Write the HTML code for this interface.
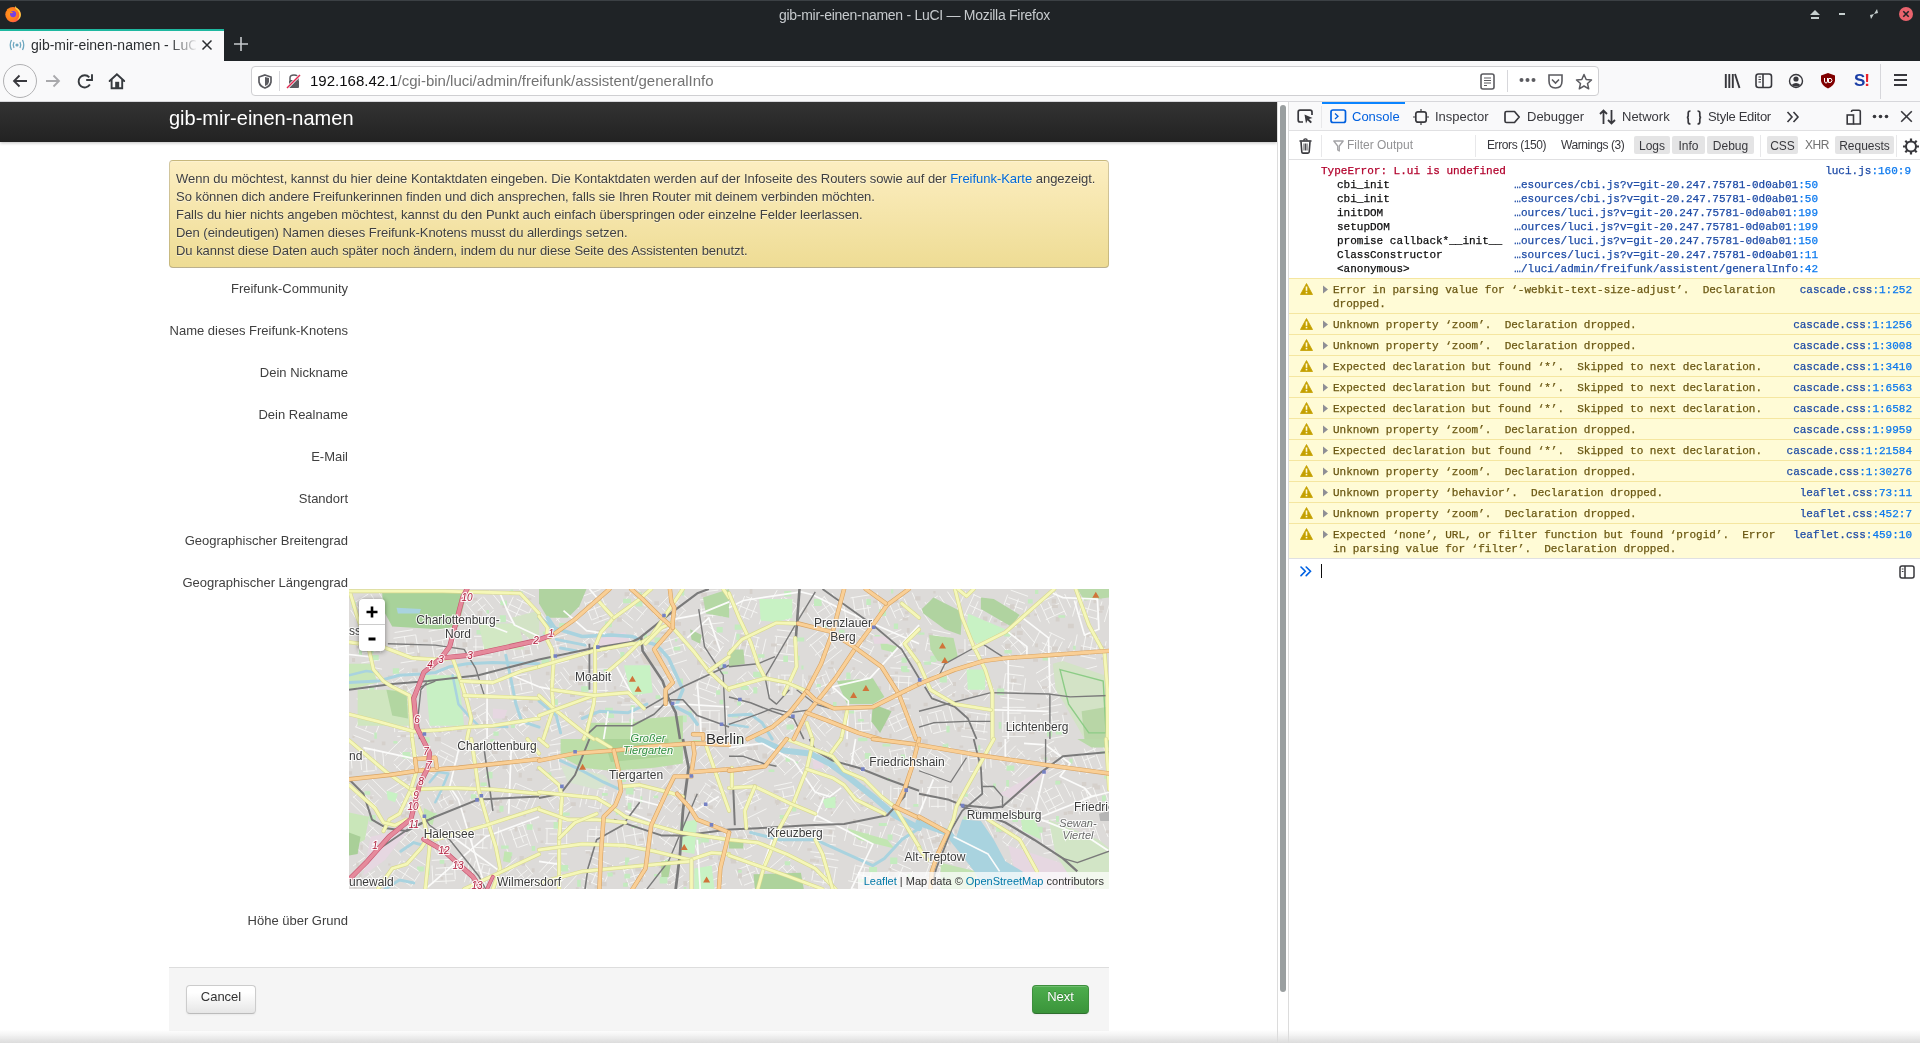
<!DOCTYPE html>
<html><head><meta charset="utf-8">
<style>
*{box-sizing:border-box;margin:0;padding:0}
html,body{width:1920px;height:1043px;overflow:hidden;background:#fff;font-family:"Liberation Sans",sans-serif;-webkit-font-smoothing:antialiased}
.abs{position:absolute}
#titlebar{left:0;top:0;width:1920px;height:29px;background:#1f2326}
#tabbar{left:0;top:29px;width:1920px;height:32px;background:#1f2326}
#navbar{left:0;top:61px;width:1920px;height:41px;background:#f9f9fa;border-bottom:1px solid #d7d7db}
#page{left:0;top:102px;width:1277px;height:941px;background:#fff;overflow:hidden}
#sb{left:1277px;top:102px;width:12px;height:941px;z-index:5;background:#fff;border-left:1px solid #dcdcdc;border-right:1px solid #dcdcdc}
#dev{left:1288px;top:102px;width:632px;height:941px;background:#fff}
.t{position:absolute;white-space:nowrap}
.mono{font-family:"Liberation Mono",monospace}
.lbl{position:absolute;left:169px;width:179px;text-align:right;font-size:13px;line-height:18px;color:#404040;white-space:nowrap}
.btn{font-size:13px;line-height:22px;text-align:center;color:#333;border:1px solid #ccc;border-bottom-color:#bbb;border-radius:4px;background:linear-gradient(#fff,#fff 25%,#e6e6e6);box-shadow:inset 0 1px 0 rgba(255,255,255,.2),0 1px 2px rgba(0,0,0,.05)}
.btn.ok{color:#fff;background:linear-gradient(#4eae4e,#3a943a);border-color:#3d8f3d #3d8f3d #2f6f2f;text-shadow:0 -1px 0 rgba(0,0,0,.25)}
.tb{position:absolute;top:7px;font-size:13px;line-height:16px;color:#38383d;white-space:nowrap}
.fb{position:absolute;top:36px;font-size:12px;line-height:14px;color:#38383d;white-space:nowrap;letter-spacing:-0.4px}
.fbb{position:absolute;top:34px;height:18px;font-size:12px;line-height:20px;color:#38383d;background:#e4e4e5;border-radius:2px;text-align:center;white-space:nowrap}
.mt{position:absolute;font-family:"Liberation Mono",monospace;font-size:11px;line-height:14px;white-space:nowrap;-webkit-text-stroke:0.25px currentColor}
.lk1{color:#1d4ba6}.lk2{color:#0a78ee}
.wrow{position:absolute;left:1px;width:631px;background:#fffbd6;border-top:1px solid #f5e6a0}
.wtxt{position:absolute;left:44px;top:4px;font-family:"Liberation Mono",monospace;font-size:11px;line-height:14px;color:#6a5712;white-space:nowrap;-webkit-text-stroke:0.25px currentColor}
.wlink{position:absolute;right:8px;top:4px;font-family:"Liberation Mono",monospace;font-size:11px;line-height:14px;white-space:nowrap;-webkit-text-stroke:0.25px currentColor}
</style></head><body><div style="position:absolute;left:0;top:0;width:1920px;height:1043px;will-change:transform">

<div id="titlebar" class="abs">
 <div class="abs" style="left:0;top:0;width:1920px;height:1px;background:#3b4044"></div>
 <svg class="abs" style="left:4px;top:5px" width="19" height="19" viewBox="0 0 19 19">
  <defs><radialGradient id="ffg" cx="0.35" cy="0.45" r="0.75"><stop offset="0" stop-color="#ff9a1f"/><stop offset="0.55" stop-color="#ff7b1f"/><stop offset="1" stop-color="#ff3d6e"/></radialGradient></defs>
  <circle cx="9" cy="9.6" r="7.7" fill="url(#ffg)"/>
  <path d="M11.3 0.7 Q10.5 3 12.4 4.6 Q15.6 7 15.3 11 Q15 13.5 13 15 Q17.2 13.8 16.8 9 Q16.4 5.5 13.6 3.6 Q12 2.5 11.3 0.7Z" fill="#ffd83b"/>
  <circle cx="9.1" cy="9.1" r="3.1" fill="#7542e5"/>
  <path d="M3.2 4.6 L4.2 3.2 L5 5 L6 4 L6.5 6 Q7.8 7 9.5 7.5 Q7.8 8.6 6.5 8 Q5 7.5 3.2 4.6Z" fill="#ff8c14"/>
 </svg>
 <div class="t" style="left:779px;top:7px;font-size:14px;color:#c6cacd;letter-spacing:-0.28px">gib-mir-einen-namen - LuCI — Mozilla Firefox</div>
 <svg class="abs" style="left:1808px;top:8px" width="14" height="14"><path d="M7 2 L12 7 L2 7 Z" fill="#c6cfcf"/><rect x="3" y="9" width="8" height="2" fill="#c6cfcf"/></svg>
 <div class="abs" style="left:1839px;top:13px;width:6px;height:2px;background:#c6cfcf"></div>
 <svg class="abs" style="left:1868px;top:8px" width="12" height="12"><path d="M9 1 L10 5 L6 6 Z M3 11 L2 7 L6 6 Z" fill="#c6cfcf"/></svg>
 <div class="abs" style="left:1899px;top:7px;width:14px;height:14px;border-radius:7px;background:#e9636d"></div>
 <svg class="abs" style="left:1899px;top:7px" width="14" height="14"><path d="M4.3 4.3 L9.7 9.7 M9.7 4.3 L4.3 9.7" stroke="#1f2326" stroke-width="1.6"/></svg>
</div>
<div id="tabbar" class="abs">
 <div class="abs" style="left:0;top:0;width:224px;height:32px;background:#f9f9fa;border-top:2px solid #1fb8a0"></div>
 <svg class="abs" style="left:9px;top:38px;top:9px" width="16" height="14" viewBox="0 0 16 14">
  <circle cx="8" cy="7" r="1.6" fill="#6fa8c0"/>
  <path d="M5 4 Q3.5 7 5 10 M11 4 Q12.5 7 11 10" stroke="#6fa8c0" stroke-width="1.3" fill="none"/>
  <path d="M2.5 2 Q0 7 2.5 12 M13.5 2 Q16 7 13.5 12" stroke="#6fa8c0" stroke-width="1.3" fill="none"/>
 </svg>
 <div class="t" style="left:31px;top:8px;font-size:14px;color:#2b2e31;width:165px;overflow:hidden">gib-mir-einen-namen - LuC</div>
 <div class="abs" style="left:170px;top:6px;width:28px;height:20px;background:linear-gradient(90deg,rgba(249,249,250,0),#f9f9fa)"></div>
 <svg class="abs" style="left:201px;top:10px" width="12" height="12"><path d="M1.5 1.5 L10.5 10.5 M10.5 1.5 L1.5 10.5" stroke="#2b2e31" stroke-width="1.5"/></svg>
 <svg class="abs" style="left:233px;top:7px" width="16" height="16"><path d="M8 1 V15 M1 8 H15" stroke="#c6cacd" stroke-width="1.6"/></svg>
</div>
<div id="navbar" class="abs">
 <div class="abs" style="left:3px;top:3px;width:34px;height:34px;border-radius:17px;border:1px solid #b1b1b3;background:#f9f9fa"></div>
 <svg class="abs" style="left:11px;top:12px" width="18" height="16"><path d="M16 8 H3 M8.5 2.5 L3 8 L8.5 13.5" stroke="#38383d" stroke-width="1.8" fill="none"/></svg>
 <svg class="abs" style="left:44px;top:12px" width="18" height="16"><path d="M2 8 H15 M9.5 2.5 L15 8 L9.5 13.5" stroke="#a9a9ac" stroke-width="1.8" fill="none"/></svg>
 <svg class="abs" style="left:76px;top:72px;top:11px" width="20" height="20"><path d="M13.3 5.3 A6.1 6.1 0 1 0 13.9 12.6" stroke="#363a3e" stroke-width="1.9" fill="none"/><path d="M10.2 8 H16 V2.2" stroke="#363a3e" stroke-width="1.9" fill="none"/></svg>
 <svg class="abs" style="left:108px;top:11px" width="20" height="20"><path d="M1.6 9 L8.9 2.2 L16.2 9" stroke="#363a3e" stroke-width="1.9" fill="none" stroke-linecap="round"/><path d="M3.6 7.5 V16.3 H14.2 V7.5" stroke="#363a3e" stroke-width="1.9" fill="none"/><rect x="7.2" y="9.8" width="4" height="6.5" fill="#363a3e"/></svg>
 <div class="abs" style="left:251px;top:5px;width:1348px;height:30px;background:#fff;border:1px solid #cfcfd2;border-radius:4px"></div>
 <svg class="abs" style="left:257px;top:13px" width="16" height="15"><path d="M8 1 L14 3 V8 Q13 12.5 8 14 Q3 12.5 2 8 V3 Z" stroke="#5b5b60" stroke-width="1.7" fill="none"/><path d="M8 3 V12 Q11.5 11 12 7.5 V4 Z" fill="#5b5b60"/></svg>
 <div class="abs" style="left:279px;top:10px;width:1px;height:20px;background:#d7d7db"></div>
 <svg class="abs" style="left:286px;top:12px" width="16" height="16"><path d="M4 7 V5 Q4 2 8 2 Q12 2 12 5 V7" stroke="#5b5b60" stroke-width="1.5" fill="none"/><rect x="3" y="7" width="10" height="8" rx="1" fill="#5b5b60"/><path d="M1 15 L14 2" stroke="#f9f9fa" stroke-width="3"/><path d="M1 15 L14 2" stroke="#e22850" stroke-width="1.4"/></svg>
 <div class="t" style="left:310px;top:11px;font-size:15px;color:#0c0c0d">192.168.42.1<span style="color:#737373">/cgi-bin/luci/admin/freifunk/assistent/generalInfo</span></div>
 <svg class="abs" style="left:1480px;top:12px" width="15" height="17"><rect x="1" y="1" width="13" height="15" rx="2" stroke="#5b5b60" stroke-width="1.6" fill="none"/><path d="M4 5 H11 M4 7.5 H11 M4 10 H11 M4 12.5 H7" stroke="#5b5b60" stroke-width="1"/></svg>
 <div class="abs" style="left:1507px;top:9px;width:1px;height:22px;background:#d7d7db"></div>
 <svg class="abs" style="left:1519px;top:16px" width="18" height="6"><circle cx="2.5" cy="3" r="2" fill="#5b5b60"/><circle cx="8.5" cy="3" r="2" fill="#5b5b60"/><circle cx="14.5" cy="3" r="2" fill="#5b5b60"/></svg>
 <svg class="abs" style="left:1547px;top:12px" width="18" height="17"><path d="M2 2 H15 V8 Q15 15 8.5 15 Q2 15 2 8 Z" stroke="#5b5b60" stroke-width="1.6" fill="none"/><path d="M5 6.5 L8.5 10 L12 6.5" stroke="#5b5b60" stroke-width="1.6" fill="none"/></svg>
 <svg class="abs" style="left:1575px;top:12px" width="18" height="18"><path d="M9 1.5 L11.2 6.5 L16.5 7 L12.5 10.5 L13.7 15.8 L9 13 L4.3 15.8 L5.5 10.5 L1.5 7 L6.8 6.5 Z" stroke="#5b5b60" stroke-width="1.5" fill="none" stroke-linejoin="round"/></svg>
 <svg class="abs" style="left:1724px;top:12px" width="17" height="16"><path d="M1.8 1 V15 M5.3 1 V15 M8.8 1 V15 M11 1 L15.5 15" stroke="#38383d" stroke-width="1.9"/></svg>
 <svg class="abs" style="left:1755px;top:12px" width="18" height="16"><rect x="1" y="1" width="15.5" height="13.5" rx="2.5" stroke="#38383d" stroke-width="1.6" fill="none"/><path d="M8 1 V14.5" stroke="#38383d" stroke-width="1.6"/><path d="M3.5 4 H6 M3.5 6.5 H6 M3.5 9 H6" stroke="#38383d" stroke-width="1"/></svg>
 <svg class="abs" style="left:1788px;top:12px" width="16" height="16"><circle cx="8" cy="8" r="6.5" stroke="#38383d" stroke-width="1.4" fill="none"/><circle cx="8" cy="6" r="2.6" fill="#38383d"/><path d="M3.5 12 Q8 8 12.5 12 Q8 15 3.5 12Z" fill="#38383d"/></svg>
 <svg class="abs" style="left:1820px;top:11px" width="16" height="17"><path d="M8 1 L15 3.5 V9 Q14 14 8 16.5 Q2 14 1 9 V3.5 Z" fill="#800000"/><path d="M4.5 6 V9 Q4.5 11 6 11 Q7.5 11 7.5 9 V6 M8.5 6.5 Q12 5.5 12 8.5 Q12 11 8.5 10.5 Z" stroke="#fff" stroke-width="1" fill="none"/></svg>
 <div class="t" style="left:1854px;top:10px;font-size:17px;font-weight:bold;color:#1b3ea6;letter-spacing:-1px">S<span style="color:#e8202a">!</span></div>
 <div class="abs" style="left:1880px;top:3px;width:1px;height:35px;background:#d7d7db"></div>
 <svg class="abs" style="left:1893px;top:12px" width="15" height="14"><path d="M1 2 H14 M1 7 H14 M1 12 H14" stroke="#38383d" stroke-width="1.8"/></svg>
</div>
<div id="page" class="abs">
 <div class="abs" style="left:0;top:0;width:1277px;height:40px;background:linear-gradient(#333,#222);box-shadow:0 1px 3px rgba(0,0,0,.25)"></div>
 <div class="t" style="left:169px;top:6px;font-size:20px;line-height:20px;color:#fff">gib-mir-einen-namen</div>
 <div class="abs" style="left:169px;top:58px;width:940px;height:108px;border:1px solid rgba(0,0,0,.16);border-bottom-color:rgba(0,0,0,.26);border-radius:4px;background:linear-gradient(#fceec1,#eedc94);box-shadow:inset 0 1px 0 rgba(255,255,255,.25)"></div>
 <div class="abs" style="left:176px;top:68px;letter-spacing:-0.03px;font-size:13px;line-height:18px;color:#404040;text-shadow:0 1px 0 rgba(255,255,255,.5);white-space:nowrap">
  Wenn du möchtest, kannst du hier deine Kontaktdaten eingeben. Die Kontaktdaten werden auf der Infoseite des Routers sowie auf der <span style="color:#0069d6">Freifunk-Karte</span> angezeigt.<br>
  So können dich andere Freifunkerinnen finden und dich ansprechen, falls sie Ihren Router mit deinem verbinden möchten.<br>
  Falls du hier nichts angeben möchtest, kannst du den Punkt auch einfach überspringen oder einzelne Felder leerlassen.<br>
  Den (eindeutigen) Namen dieses Freifunk-Knotens musst du allerdings setzen.<br>
  Du kannst diese Daten auch später noch ändern, indem du nur diese Seite des Assistenten benutzt.
 </div>
 <div class="lbl" style="top:177.5px">Freifunk-Community</div>
 <div class="lbl" style="top:219.5px">Name dieses Freifunk-Knotens</div>
 <div class="lbl" style="top:261.5px">Dein Nickname</div>
 <div class="lbl" style="top:303.5px">Dein Realname</div>
 <div class="lbl" style="top:345.5px">E-Mail</div>
 <div class="lbl" style="top:387.5px">Standort</div>
 <div class="lbl" style="top:429.5px">Geographischer Breitengrad</div>
 <div class="lbl" style="top:471.5px">Geographischer Längengrad</div>
 <div id="map" class="abs" style="left:349px;top:487px;width:760px;height:300px;background:#e0dfdf;overflow:hidden"><svg class="abs" style="left:0;top:0" width="760" height="300" viewBox="0 0 760 300" font-family="Liberation Sans, sans-serif"><rect width="760" height="300" fill="#dddbd9"/>
<path d="M28.1 0.6 l11.5 18.6 M21.9 5.2 l10.7 17.4 M15.6 12.5 l7.7 12.5 M8.4 17.1 l7.6 12.3 M1.7 21.0 l7.8 12.6 M19.3 5.1 l-12.8 7.9 M24.6 17.1 l-9.8 6.0 M31.1 22.0 l-14.9 9.2 M30.8 70.9 l-18.5 3.1 M27.2 61.8 l-14.4 2.4 M27.4 54.2 l-17.2 2.9 M25.5 49.3 l-15.2 2.5 M28.2 40.0 l-23.5 3.9 M31.5 63.5 l-2.8 -16.8 M19.6 64.2 l-2.4 -14.3 M9.8 64.0 l-1.8 -10.6 M11.3 76.1 l21.8 4.1 M11.8 85.2 l17.5 3.3 M9.4 93.5 l19.1 3.6 M6.1 99.9 l23.1 4.4 M7.6 109.9 l16.6 3.2 M11.0 85.2 l-3.0 16.0 M22.2 86.1 l-3.5 18.4 M30.0 86.0 l-4.1 21.4 M14.2 113.6 l21.5 8.4 M13.1 120.6 l18.5 7.2 M9.4 127.3 l20.5 8.0 M6.0 137.7 l19.5 7.6 M4.4 146.1 l16.6 6.4 M13.5 121.7 l-6.2 16.0 M22.1 125.9 l-5.6 14.4 M33.5 127.2 l-7.7 19.9 M33.7 162.4 l1.2 14.7 M25.3 159.6 l1.8 21.7 M16.1 159.3 l1.9 23.8 M11.1 162.3 l1.5 18.6 M1.8 165.2 l1.2 14.2 M24.2 160.4 l-12.0 1.0 M24.2 169.0 l-10.7 0.9 M25.7 181.6 l-11.5 0.9 M21.8 188.7 l17.4 17.2 M18.9 195.3 l13.8 13.6 M10.1 200.5 l17.5 17.3 M3.8 207.1 l17.4 17.1 M1.6 213.1 l13.5 13.3 M18.7 194.2 l-14.5 14.7 M24.4 206.1 l-8.3 8.4 M29.7 210.6 l-9.0 9.1 M21.9 228.0 l15.7 14.1 M19.8 235.6 l10.4 9.4 M12.4 240.6 l13.7 12.3 M4.0 244.6 l18.9 17.0 M0.3 252.7 l15.0 13.5 M18.0 233.9 l-12.1 13.5 M24.6 238.1 l-13.9 15.5 M34.1 246.8 l-13.7 15.2 M36.3 292.7 l-15.1 11.1 M33.4 286.3 l-17.4 12.8 M26.0 282.0 l-11.9 8.8 M21.4 274.8 l-12.8 9.5 M15.8 268.3 l-11.8 8.7 M32.2 282.6 l-7.0 -9.5 M24.5 289.8 l-8.5 -11.6 M18.6 298.1 l-12.2 -16.5 M76.3 17.1 l-6.0 15.9 M68.3 13.4 l-6.4 17.2 M62.7 8.2 l-8.5 22.7 M51.1 6.3 l-6.9 18.3 M44.7 6.4 l-5.3 14.1 M67.7 10.6 l-13.2 -4.9 M66.7 21.6 l-18.7 -7.0 M58.8 28.9 l-9.6 -3.6 M67.2 71.5 l-15.6 2.4 M65.3 63.6 l-14.2 2.2 M69.7 54.9 l-25.4 3.9 M66.6 45.9 l-22.1 3.4 M63.8 40.7 l-18.2 2.8 M69.7 64.8 l-3.0 -19.0 M58.4 66.6 l-3.0 -19.1 M48.8 64.7 l-1.9 -12.5 M74.9 99.9 l-20.1 13.5 M70.7 94.0 l-19.8 13.3 M63.4 89.5 l-13.9 9.3 M60.1 83.2 l-15.2 10.2 M55.1 79.3 l-11.9 8.0 M69.7 94.4 l-7.3 -10.9 M62.4 104.3 l-12.0 -17.8 M54.8 109.3 l-11.9 -17.6 M66.7 146.8 l-18.4 0.7 M65.7 141.8 l-16.7 0.6 M65.3 133.9 l-16.4 0.6 M69.1 124.0 l-24.8 0.9 M66.2 115.3 l-19.7 0.7 M66.7 142.4 l-0.7 -19.6 M59.0 141.9 l-0.7 -17.9 M45.7 143.1 l-0.7 -19.4 M74.1 176.7 l-11.4 11.4 M68.2 169.5 l-12.7 12.7 M65.2 161.1 l-18.2 18.1 M58.3 159.0 l-13.3 13.3 M52.5 150.4 l-16.1 16.0 M69.1 167.1 l-8.1 -8.2 M65.4 177.4 l-14.7 -14.8 M53.2 183.1 l-8.3 -8.3 M73.7 215.4 l-18.7 11.3 M70.3 211.0 l-17.6 10.7 M63.8 206.6 l-12.1 7.3 M61.2 194.9 l-18.6 11.3 M59.4 188.7 l-21.6 13.1 M71.1 212.4 l-10.6 -17.5 M59.1 215.0 l-6.5 -10.7 M52.8 219.4 l-7.0 -11.6 M61.5 229.7 l12.5 11.7 M57.0 235.6 l11.3 10.7 M49.2 241.9 l13.3 12.5 M44.0 245.5 l15.3 14.4 M38.0 253.3 l13.9 13.1 M56.4 235.5 l-11.0 11.7 M62.7 241.2 l-11.2 11.9 M68.1 247.0 l-10.5 11.1 M56.9 263.5 l19.8 12.8 M53.8 271.8 l16.5 10.7 M47.8 280.1 l17.3 11.2 M44.5 285.6 l17.0 11.0 M38.4 292.2 l19.6 12.7 M51.8 271.7 l-9.1 14.0 M59.8 278.9 l-7.2 11.2 M70.7 284.3 l-8.8 13.5 M112.1 9.6 l-4.8 24.5 M105.1 10.1 l-4.1 21.0 M96.9 9.1 l-3.9 19.8 M88.3 7.8 l-3.7 19.1 M81.1 6.2 l-3.8 19.4 M105.6 12.7 l-18.0 -3.5 M105.2 22.5 l-20.9 -4.1 M101.5 29.5 l-16.4 -3.2 M105.3 70.0 l-15.4 2.8 M106.2 64.7 l-19.0 3.4 M103.6 57.2 l-16.6 3.0 M104.7 48.9 l-21.7 3.9 M104.1 37.9 l-24.4 4.4 M107.9 64.1 l-3.3 -18.3 M95.4 62.9 l-2.1 -11.5 M85.6 69.7 l-3.8 -21.3 M96.8 78.1 l14.5 12.0 M90.1 80.6 l20.0 16.5 M88.0 91.0 l12.3 10.1 M82.3 94.5 l15.6 12.8 M78.9 101.6 l12.6 10.4 M92.7 81.0 l-11.9 14.4 M98.8 87.4 l-10.6 12.8 M105.8 97.3 l-6.5 7.9 M103.3 116.5 l10.2 17.4 M96.9 116.9 l13.0 22.3 M87.5 122.5 l13.0 22.1 M85.1 128.8 l8.7 14.8 M76.9 130.1 l11.8 20.2 M94.5 120.7 l-10.0 5.8 M103.9 127.4 l-18.1 10.6 M106.3 139.4 l-11.3 6.6 M92.2 153.5 l18.6 9.4 M91.5 161.2 l13.4 6.8 M85.9 164.4 l19.9 10.1 M84.9 174.5 l13.3 6.7 M77.3 181.9 l19.3 9.8 M89.6 162.1 l-5.0 9.8 M98.7 166.8 l-4.9 9.6 M108.7 169.3 l-7.0 13.8 M102.7 190.4 l12.2 22.0 M99.0 197.9 l7.5 13.6 M90.8 201.7 l8.2 14.8 M85.5 205.1 l7.7 13.9 M78.6 208.7 l7.9 14.4 M95.8 196.3 l-12.0 6.6 M101.4 206.6 l-11.8 6.5 M105.2 214.8 l-10.6 5.9 M107.0 231.2 l7.9 15.1 M98.5 232.3 l10.5 20.2 M91.1 239.9 l7.5 14.4 M82.2 239.5 l11.7 22.4 M76.7 243.1 l11.0 21.1 M97.3 234.2 l-14.1 7.4 M102.1 244.8 l-13.0 6.8 M107.7 251.7 l-16.2 8.4 M107.9 300.9 l-24.0 1.3 M106.2 291.6 l-21.6 1.2 M104.1 284.9 l-18.1 1.0 M102.4 278.4 l-15.5 0.9 M105.6 270.1 l-22.9 1.3 M106.3 290.4 l-0.7 -11.9 M97.2 294.9 l-1.1 -20.1 M84.0 294.6 l-1.0 -18.0 M140.6 1.4 l11.1 13.6 M134.3 7.7 l10.1 12.3 M127.7 12.2 l10.9 13.3 M117.3 15.3 l16.2 19.9 M115.1 22.7 l10.7 13.1 M133.2 8.4 l-10.6 8.7 M136.5 15.4 l-7.8 6.3 M145.1 21.4 l-12.2 9.9 M150.3 47.1 l-0.2 20.1 M143.1 48.5 l-0.1 17.2 M134.7 47.6 l-0.2 18.8 M126.9 49.8 l-0.1 14.3 M117.9 48.5 l-0.1 16.8 M141.3 47.4 l-16.3 -0.1 M141.9 58.1 l-17.9 -0.2 M143.2 68.0 l-20.5 -0.2 M144.3 77.2 l8.8 24.3 M138.0 81.1 l7.7 21.3 M130.0 88.4 l4.9 13.7 M120.0 86.6 l8.4 23.2 M113.6 89.9 l7.8 21.4 M135.5 84.8 l-11.0 4.0 M140.6 92.4 l-15.1 5.5 M146.1 102.3 l-18.5 6.7 M151.7 140.0 l-21.1 12.8 M146.3 133.4 l-19.1 11.6 M139.7 130.2 l-12.3 7.5 M137.4 122.7 l-15.7 9.5 M135.8 114.4 l-20.5 12.5 M145.9 135.4 l-9.1 -15.0 M137.3 141.0 l-9.4 -15.5 M127.1 142.5 l-5.2 -8.6 M150.0 177.1 l-16.1 11.9 M146.5 170.8 l-17.6 13.0 M143.2 165.6 l-18.4 13.6 M134.8 160.9 l-12.0 8.8 M133.2 152.1 l-18.3 13.5 M147.6 172.0 l-11.2 -15.2 M136.2 178.5 l-9.5 -12.8 M130.0 183.0 l-9.3 -12.7 M151.4 208.2 l-11.7 17.9 M143.3 206.8 l-8.1 12.5 M138.8 202.6 l-9.3 14.3 M130.3 196.7 l-9.6 14.8 M123.2 194.2 l-7.7 11.9 M145.0 202.8 l-11.1 -7.2 M140.3 214.6 l-15.3 -10.0 M132.8 221.6 l-11.3 -7.4 M149.6 238.1 l-1.0 19.6 M143.2 235.1 l-1.3 24.7 M134.9 234.2 l-1.3 25.7 M123.6 239.4 l-0.7 14.2 M117.8 234.3 l-1.2 23.8 M141.1 239.3 l-15.4 -0.8 M139.3 246.4 l-12.5 -0.7 M138.6 259.1 l-12.5 -0.7 M152.4 279.6 l-5.1 19.6 M141.0 279.0 l-3.9 15.1 M134.3 275.0 l-5.1 19.4 M126.6 271.7 l-5.7 21.7 M121.7 269.2 l-6.3 24.0 M140.5 276.6 l-10.0 -2.6 M141.2 285.1 l-15.4 -4.0 M137.1 296.2 l-13.2 -3.4 M170.1 0.2 l16.1 7.6 M167.5 10.0 l12.7 6.0 M159.7 14.8 l21.8 10.3 M156.9 19.5 l22.7 10.7 M152.6 28.9 l22.4 10.6 M164.3 7.8 l-6.2 13.1 M175.3 8.9 l-9.4 19.9 M183.4 17.0 l-6.1 13.0 M185.8 46.1 l3.3 14.2 M177.7 43.1 l5.4 23.4 M169.0 44.5 l5.7 24.6 M162.3 50.2 l3.9 16.8 M153.5 52.7 l3.6 15.9 M179.1 44.4 l-20.9 4.8 M181.0 56.3 l-19.2 4.4 M183.6 64.9 l-20.4 4.7 M185.0 108.4 l-22.2 4.2 M184.0 102.5 l-22.4 4.2 M182.4 93.1 l-22.6 4.3 M178.0 85.0 l-17.1 3.2 M180.7 78.7 l-24.7 4.7 M183.7 100.6 l-2.9 -15.4 M172.9 101.6 l-2.5 -13.3 M162.2 107.7 l-4.0 -21.3 M176.2 116.1 l12.0 12.8 M170.3 120.9 l12.8 13.7 M166.5 126.3 l10.9 11.6 M157.5 128.6 l17.0 18.1 M153.6 137.9 l11.4 12.1 M173.3 119.4 l-16.0 15.0 M175.1 128.9 l-8.5 8.0 M181.0 135.6 l-8.1 7.6 M182.5 155.2 l8.0 14.8 M173.9 157.6 l9.9 18.3 M164.2 161.6 l11.0 20.2 M159.8 166.3 l9.0 16.7 M152.4 170.5 l8.8 16.3 M170.7 159.1 l-9.4 5.1 M180.1 165.1 l-19.0 10.3 M182.1 174.7 l-14.1 7.6 M187.6 207.1 l-6.6 15.2 M182.5 204.7 l-6.7 15.6 M175.2 200.3 l-7.7 17.8 M166.8 194.0 l-9.6 22.2 M157.8 195.5 l-5.6 13.1 M184.2 201.8 l-17.0 -7.3 M177.6 213.6 l-14.4 -6.2 M171.5 220.5 l-9.2 -4.0 M180.5 231.0 l8.0 22.5 M172.9 232.7 l8.6 24.2 M169.4 239.4 l5.1 14.4 M161.4 239.7 l6.8 19.1 M151.0 240.7 l8.5 23.8 M176.3 235.4 l-16.7 5.9 M178.7 245.4 l-14.6 5.2 M179.3 254.9 l-9.9 3.5 M191.5 290.3 l-19.4 15.8 M182.5 285.2 l-13.7 11.1 M178.5 280.8 l-13.2 10.8 M174.3 271.3 l-17.3 14.1 M167.6 269.1 l-11.5 9.4 M184.0 285.3 l-10.7 -13.2 M175.4 289.6 l-8.0 -9.8 M166.1 295.5 l-6.4 -7.8 M214.7 -0.8 l14.9 20.7 M207.8 4.7 l14.4 20.0 M204.2 12.1 l9.8 13.7 M195.9 12.7 l14.9 20.7 M190.2 21.6 l10.3 14.4 M208.5 4.7 l-13.0 9.3 M215.5 15.2 l-12.2 8.8 M221.6 21.1 l-14.6 10.5 M220.0 71.9 l-14.0 3.4 M220.3 63.2 l-18.5 4.4 M216.8 54.4 l-15.9 3.8 M218.0 45.4 l-22.2 5.3 M213.3 39.5 l-16.0 3.8 M218.5 61.8 l-3.2 -13.4 M209.2 63.5 l-3.0 -12.4 M202.6 68.4 l-4.5 -18.6 M214.4 78.5 l12.0 16.0 M211.4 82.8 l10.0 13.3 M202.7 86.0 l13.2 17.6 M196.4 94.6 l9.5 12.6 M191.6 97.7 l9.9 13.2 M208.8 85.0 l-9.4 7.0 M212.2 90.3 l-8.6 6.4 M223.1 96.4 l-16.6 12.5 M226.5 142.4 l-24.3 9.3 M219.6 135.6 l-16.8 6.4 M221.2 129.7 l-23.6 9.0 M212.5 122.0 l-13.4 5.1 M211.7 114.1 l-17.3 6.6 M221.3 135.8 l-5.0 -13.1 M212.0 137.2 l-3.6 -9.4 M203.0 142.9 l-5.1 -13.3 M224.1 186.6 l-25.3 3.6 M219.3 178.8 l-18.1 2.5 M220.6 168.1 l-23.6 3.3 M215.1 162.3 l-14.4 2.0 M215.9 154.0 l-18.3 2.6 M218.1 175.9 l-1.7 -12.2 M211.0 181.2 l-2.9 -20.6 M202.0 179.5 l-2.1 -14.8 M223.3 217.4 l-12.0 8.1 M220.6 213.1 l-12.2 8.2 M215.2 202.8 l-14.2 9.5 M214.3 194.6 l-20.6 13.8 M207.6 191.4 l-14.3 9.6 M220.6 211.7 l-9.7 -14.5 M215.0 216.2 l-10.4 -15.4 M205.0 219.7 l-7.4 -11.0 M196.7 231.9 l25.0 0.3 M196.4 239.4 l25.3 0.3 M200.6 245.0 l16.8 0.2 M196.2 254.7 l25.5 0.3 M199.5 264.7 l18.6 0.2 M198.1 239.3 l-0.2 15.2 M209.1 236.4 l-0.3 21.1 M217.8 237.3 l-0.2 19.6 M227.7 286.5 l-15.9 17.0 M220.7 283.6 l-12.2 13.1 M215.8 278.8 l-12.5 13.4 M207.4 273.3 l-10.2 10.9 M206.0 266.5 l-15.7 16.9 M220.4 280.6 l-7.9 -7.3 M216.4 289.3 l-12.2 -11.3 M210.6 299.2 l-15.9 -14.8 M260.0 29.0 l-16.0 6.1 M257.5 25.3 l-14.2 5.4 M257.5 15.0 l-21.0 8.1 M252.1 8.7 l-15.7 6.0 M251.4 0.5 l-20.0 7.7 M259.1 24.5 l-6.8 -17.7 M248.9 27.9 l-6.4 -16.8 M242.7 31.4 l-7.2 -18.8 M254.0 40.1 l11.1 14.7 M247.7 46.2 l9.9 13.1 M242.7 49.6 l10.2 13.5 M234.3 51.2 l14.9 19.6 M228.6 59.7 l10.8 14.3 M249.4 42.1 l-17.5 13.2 M252.1 53.2 l-10.2 7.7 M260.9 60.6 l-14.2 10.8 M257.3 112.3 l-19.7 0.6 M259.2 101.4 l-24.1 0.7 M254.2 93.1 l-14.5 0.4 M254.5 87.6 l-15.4 0.4 M259.4 79.9 l-25.7 0.7 M257.0 105.3 l-0.6 -21.2 M247.8 105.2 l-0.6 -20.4 M237.4 101.8 l-0.4 -13.1 M262.0 139.0 l-11.7 9.8 M260.1 131.9 l-16.4 13.8 M254.8 127.9 l-14.1 11.8 M249.1 122.7 l-12.6 10.6 M245.5 114.7 l-16.2 13.6 M258.2 131.7 l-8.0 -9.5 M253.0 137.1 l-9.0 -10.7 M242.7 144.6 l-7.9 -9.4 M254.7 151.7 l13.1 19.6 M249.4 160.5 l8.2 12.3 M243.1 162.3 l10.4 15.6 M234.2 166.6 l12.1 18.0 M230.6 172.4 l8.9 13.3 M248.1 159.2 l-12.4 8.3 M252.2 166.5 l-11.4 7.6 M259.3 177.0 l-11.4 7.6 M265.2 203.1 l-3.9 18.6 M256.1 197.7 l-5.4 25.4 M249.2 201.1 l-3.4 16.0 M240.0 199.1 l-3.4 16.1 M235.9 194.0 l-5.1 24.3 M258.8 201.0 l-19.4 -4.1 M257.2 210.8 l-20.1 -4.3 M250.8 219.9 l-11.7 -2.5 M236.9 230.7 l21.7 1.0 M239.8 240.3 l15.1 0.7 M237.8 247.1 l18.4 0.9 M238.8 254.6 l15.7 0.7 M236.2 261.6 l20.2 0.9 M239.0 241.0 l-0.5 11.3 M247.4 237.2 l-0.9 19.6 M259.1 241.4 l-0.6 12.4 M240.7 266.9 l23.7 10.0 M243.4 274.7 l13.5 5.7 M237.7 283.0 l17.2 7.2 M233.4 289.7 l19.8 8.3 M233.0 297.9 l14.7 6.2 M241.3 275.7 l-4.9 11.7 M250.6 275.6 l-7.8 18.6 M259.8 283.8 l-4.7 11.2 M287.6 -0.1 l15.7 12.8 M284.4 7.5 l12.0 9.8 M276.9 11.0 l17.6 14.4 M273.3 21.8 l11.2 9.2 M265.8 24.3 l17.9 14.6 M282.2 3.7 l-12.7 15.5 M289.3 11.4 l-10.9 13.3 M298.4 18.7 l-11.1 13.6 M292.4 39.1 l12.0 17.2 M285.5 43.3 l12.5 18.0 M279.7 49.0 l11.0 15.8 M273.9 51.7 l12.3 17.6 M267.1 59.2 l9.6 13.8 M287.8 44.1 l-15.9 11.1 M289.9 53.4 l-10.0 7.0 M295.3 61.9 l-9.3 6.5 M284.4 77.1 l13.9 5.9 M279.0 83.5 l18.5 7.9 M275.8 89.1 l19.9 8.5 M272.0 96.3 l21.0 9.0 M269.0 106.8 l18.5 7.9 M277.3 83.0 l-6.3 14.8 M288.8 85.0 l-8.4 19.7 M296.8 89.0 l-8.0 18.7 M297.1 147.9 l-23.8 0.3 M298.0 142.1 l-25.8 0.3 M297.7 132.9 l-25.5 0.3 M292.9 123.2 l-16.0 0.2 M297.4 115.7 l-25.2 0.3 M296.8 140.0 l-0.2 -14.2 M284.0 139.0 l-0.1 -11.9 M273.5 139.8 l-0.2 -13.3 M302.9 180.1 l-16.8 11.0 M295.4 171.8 l-13.8 9.0 M293.9 166.3 l-16.8 11.0 M287.1 161.0 l-12.1 7.9 M283.6 154.3 l-13.3 8.7 M296.9 174.1 l-9.9 -15.2 M287.0 176.9 l-6.6 -10.1 M278.8 181.9 l-6.2 -9.5 M301.3 201.4 l-1.8 18.2 M292.5 199.3 l-2.0 20.6 M285.9 196.7 l-2.4 24.5 M279.9 195.5 l-2.5 25.8 M269.5 198.1 l-1.8 18.6 M292.4 200.9 l-13.1 -1.3 M293.2 211.8 l-16.8 -1.6 M293.6 219.3 l-19.1 -1.8 M299.9 232.6 l4.1 22.5 M292.5 233.5 l4.3 23.4 M284.0 236.2 l3.9 21.3 M273.3 238.4 l3.8 20.7 M267.0 241.3 l3.2 17.5 M288.0 234.3 l-10.2 1.9 M293.3 244.1 l-17.1 3.1 M294.7 255.1 l-15.9 2.9 M298.5 298.8 l-15.8 5.4 M294.1 289.7 l-13.5 4.6 M294.3 283.9 l-17.3 5.9 M291.6 276.0 l-17.3 5.9 M290.1 267.5 l-19.9 6.8 M296.1 287.8 l-4.0 -11.8 M287.1 292.6 l-5.1 -14.9 M280.3 297.8 l-6.8 -20.1 M329.6 1.2 l10.9 10.5 M319.3 5.2 l17.6 16.9 M315.4 13.3 l13.6 13.0 M313.0 19.2 l10.2 9.8 M304.0 23.8 l15.0 14.4 M321.5 5.3 l-12.3 12.8 M330.2 11.2 l-14.7 15.3 M335.4 21.9 l-9.0 9.4 M338.0 71.0 l-19.4 6.1 M333.5 62.5 l-16.1 5.0 M334.7 55.2 l-22.3 7.0 M331.0 48.1 l-19.7 6.2 M325.2 37.7 l-15.0 4.7 M336.3 61.9 l-5.2 -16.5 M325.6 65.5 l-5.3 -16.9 M314.1 66.1 l-3.6 -11.5 M332.8 79.5 l8.2 12.0 M321.7 81.7 l13.2 19.3 M318.3 89.7 l7.9 11.6 M308.8 90.8 l12.9 19.0 M303.4 94.5 l12.9 18.9 M322.5 83.0 l-10.5 7.2 M327.4 90.1 l-10.6 7.2 M333.4 97.8 l-11.6 7.9 M342.3 135.2 l-17.1 17.1 M334.1 132.0 l-12.1 12.2 M329.6 126.0 l-13.6 13.6 M323.7 119.4 l-14.3 14.4 M320.0 114.7 l-15.3 15.4 M333.2 131.7 l-8.9 -8.9 M325.5 137.7 l-7.2 -7.2 M321.2 143.9 l-9.1 -9.1 M341.2 172.6 l-15.9 16.5 M337.8 168.2 l-17.0 17.7 M329.3 165.4 l-11.7 12.2 M323.5 156.6 l-15.0 15.5 M318.5 151.5 l-15.2 15.8 M334.2 170.6 l-11.3 -10.8 M328.7 178.3 l-13.2 -12.7 M320.6 184.5 l-11.0 -10.6 M340.7 212.5 l-11.5 13.5 M336.9 206.8 l-13.9 16.3 M332.4 200.6 l-16.2 19.0 M322.6 199.3 l-9.3 10.9 M320.2 190.1 l-16.3 19.1 M334.3 204.7 l-8.9 -7.6 M328.2 211.0 l-8.0 -6.8 M322.7 222.9 l-13.4 -11.4 M339.6 249.7 l-8.6 12.0 M334.5 244.0 l-10.7 15.0 M328.9 236.6 l-13.8 19.4 M319.5 235.4 l-8.6 12.0 M316.0 226.7 l-14.5 20.3 M332.4 243.6 l-9.2 -6.5 M328.3 249.3 l-9.2 -6.6 M326.5 259.5 l-16.4 -11.7 M341.5 291.2 l-19.9 13.3 M334.4 286.4 l-14.5 9.7 M330.2 282.1 l-12.6 8.4 M324.8 272.9 l-13.7 9.2 M322.4 267.0 l-15.9 10.6 M336.5 283.8 l-7.3 -10.9 M328.9 292.2 l-10.4 -15.4 M319.0 296.0 l-7.7 -11.5 M374.8 33.5 l-24.1 2.7 M369.0 25.7 l-14.3 1.6 M370.6 18.3 l-19.1 2.2 M369.0 8.9 l-18.0 2.0 M369.3 1.1 l-20.3 2.3 M373.2 27.9 l-2.3 -20.2 M363.7 28.7 l-2.2 -19.7 M352.9 25.0 l-1.1 -10.0 M359.5 37.3 l20.7 15.3 M358.9 43.1 l16.0 11.8 M351.5 50.0 l19.0 14.0 M349.0 56.5 l16.1 11.8 M342.2 62.3 l19.3 14.2 M358.5 41.9 l-12.6 17.2 M364.0 51.4 l-7.5 10.1 M374.4 57.0 l-9.5 12.9 M359.2 77.9 l14.1 5.1 M352.8 84.8 l21.0 7.6 M350.5 92.4 l20.3 7.3 M349.6 98.8 l17.7 6.4 M344.1 105.5 l23.2 8.4 M353.5 81.3 l-7.0 19.4 M361.3 88.5 l-4.2 11.7 M373.0 88.3 l-7.0 19.6 M377.5 120.8 l-0.1 24.6 M370.1 123.3 l-0.1 19.5 M360.9 121.5 l-0.1 23.1 M352.0 122.1 l-0.1 21.8 M345.6 124.0 l-0.1 17.9 M371.1 121.7 l-20.1 -0.1 M370.4 133.7 l-18.9 -0.1 M368.6 141.7 l-15.3 -0.1 M377.1 177.8 l-11.7 10.1 M375.6 169.1 l-18.6 16.1 M367.9 166.5 l-12.3 10.6 M364.8 158.2 l-17.0 14.7 M355.7 152.7 l-12.0 10.4 M373.9 168.5 l-8.5 -9.8 M366.8 176.7 l-10.6 -12.3 M359.0 181.9 l-9.1 -10.6 M359.5 190.9 l18.8 12.7 M355.8 193.9 l21.2 14.3 M354.2 202.5 l15.4 10.4 M345.7 210.6 l19.5 13.2 M343.6 217.6 l15.9 10.8 M356.7 195.4 l-9.9 14.6 M363.2 203.0 l-7.0 10.3 M371.8 210.0 l-5.8 8.6 M371.6 231.8 l7.0 21.2 M365.2 234.2 l6.7 20.5 M358.7 239.5 l4.9 14.9 M350.1 240.7 l5.9 17.9 M341.0 240.5 l7.8 23.7 M365.8 234.6 l-16.0 5.3 M368.5 245.6 l-14.3 4.7 M372.6 252.6 l-17.7 5.8 M376.9 294.7 l-20.8 8.2 M373.7 287.1 l-20.6 8.2 M369.8 280.9 l-18.1 7.2 M368.3 274.3 l-20.0 7.9 M364.6 268.1 l-17.7 7.0 M372.7 290.4 l-6.8 -17.3 M362.9 291.2 l-4.8 -12.1 M354.8 295.8 l-5.7 -14.4 M418.3 14.8 l-8.2 20.5 M407.8 13.8 l-6.0 15.0 M402.8 7.9 l-8.7 21.7 M395.7 7.0 l-7.4 18.4 M385.1 5.6 l-5.4 13.4 M408.2 12.1 l-11.1 -4.4 M408.5 24.0 l-19.8 -7.9 M400.4 30.4 l-10.4 -4.2 M417.0 49.7 l-5.2 22.0 M409.2 48.3 l-5.0 21.1 M400.1 46.8 l-4.7 19.7 M394.5 42.9 l-5.9 24.7 M387.1 42.8 l-5.2 21.6 M410.7 49.1 l-18.6 -4.4 M410.0 58.1 l-21.2 -5.1 M402.0 67.4 l-10.4 -2.5 M406.8 78.9 l9.2 10.7 M399.1 82.4 l12.4 14.5 M392.5 88.6 l11.9 13.8 M388.2 93.3 l10.9 12.7 M377.9 96.4 l16.5 19.2 M397.4 83.4 l-9.6 8.2 M405.4 91.1 l-11.2 9.6 M409.1 98.0 l-8.8 7.5 M416.8 137.3 l-16.5 14.0 M412.2 132.5 l-15.8 13.4 M409.5 125.6 l-19.5 16.5 M402.5 120.3 l-16.5 14.0 M396.9 112.1 l-18.2 15.4 M411.1 131.6 l-8.7 -10.3 M402.6 137.5 l-7.4 -8.8 M394.9 145.8 l-9.2 -10.9 M414.9 181.9 l-16.5 8.4 M411.6 174.7 l-17.0 8.6 M405.8 168.9 l-12.5 6.3 M402.7 159.1 l-15.5 7.9 M400.1 153.7 l-15.7 8.0 M411.4 173.2 l-6.8 -13.5 M402.6 179.2 l-8.1 -16.0 M395.4 184.7 l-9.6 -18.9 M417.6 219.7 l-21.5 10.6 M412.3 209.6 l-21.0 10.3 M410.4 205.0 l-21.5 10.6 M401.6 198.2 l-12.7 6.3 M404.2 190.8 l-22.8 11.2 M410.3 210.7 l-5.7 -11.7 M403.0 213.6 l-5.2 -10.5 M395.2 221.6 l-8.5 -17.3 M408.6 227.9 l11.5 22.0 M401.3 236.7 l7.4 14.2 M392.7 238.3 l9.9 18.9 M385.8 241.5 l10.2 19.5 M378.0 244.8 l10.9 20.8 M400.5 236.5 l-11.0 5.7 M406.6 243.9 l-14.5 7.6 M410.8 253.2 l-13.5 7.1 M412.7 296.6 l-16.0 6.2 M409.6 290.6 l-14.6 5.6 M405.9 282.4 l-13.7 5.3 M403.5 274.8 l-14.7 5.7 M402.6 266.5 l-18.6 7.2 M411.8 290.9 l-7.3 -19.0 M404.5 293.7 l-7.2 -18.7 M392.8 296.4 l-6.0 -15.6 M454.3 18.2 l-9.2 16.1 M450.6 12.1 l-12.7 22.2 M443.8 10.4 l-10.7 18.8 M433.1 8.5 l-7.1 12.5 M428.2 1.2 l-11.0 19.3 M447.2 15.3 l-12.1 -6.9 M443.0 24.7 l-14.0 -8.0 M441.1 32.8 l-18.0 -10.3 M427.9 40.8 l21.4 2.3 M425.8 47.1 l24.2 2.6 M427.3 55.4 l19.6 2.1 M424.6 63.8 l23.1 2.5 M425.9 70.7 l19.1 2.0 M427.6 47.6 l-1.8 16.6 M439.0 50.4 l-1.4 13.4 M449.0 50.8 l-1.6 14.8 M454.0 85.2 l-0.2 20.1 M443.2 84.1 l-0.3 21.9 M435.9 86.0 l-0.2 18.0 M429.8 86.1 l-0.2 17.6 M420.8 84.0 l-0.3 21.6 M442.3 86.2 l-10.5 -0.1 M447.3 96.0 l-20.6 -0.2 M442.2 105.2 l-10.6 -0.1 M446.8 115.9 l9.6 13.2 M435.9 120.7 l12.5 17.3 M429.6 123.9 l13.8 19.0 M422.9 130.0 l12.5 17.3 M417.4 133.9 l12.6 17.4 M438.5 120.5 l-13.9 10.1 M442.5 129.9 l-10.2 7.4 M449.5 137.1 l-12.5 9.1 M454.9 178.4 l-11.9 11.0 M452.2 170.3 l-17.1 15.8 M443.9 162.4 l-16.1 14.8 M440.7 157.4 l-17.5 16.2 M433.0 151.4 l-15.2 14.1 M449.7 168.6 l-9.2 -10.0 M441.9 175.9 l-9.4 -10.2 M435.9 184.1 l-12.0 -13.0 M450.8 224.3 l-20.4 4.3 M446.6 217.0 l-15.1 3.2 M447.0 205.6 l-20.5 4.3 M444.5 197.5 l-18.9 4.0 M443.2 193.3 l-18.2 3.8 M448.6 217.4 l-4.4 -20.8 M436.7 217.1 l-3.2 -15.4 M428.7 216.5 l-2.3 -11.0 M455.9 247.4 l-6.9 14.2 M449.0 245.0 l-6.2 12.6 M439.7 239.7 l-6.8 13.9 M431.4 235.9 l-6.6 13.5 M424.7 232.3 l-6.8 14.0 M450.6 240.4 l-16.7 -8.2 M445.9 250.2 l-16.9 -8.2 M437.9 257.2 l-9.5 -4.6 M456.1 288.6 l-18.4 15.8 M447.3 285.5 l-11.4 9.8 M445.2 277.3 l-17.1 14.7 M441.4 270.8 l-19.1 16.4 M436.9 265.3 l-19.4 16.7 M447.2 282.9 l-6.6 -7.7 M444.3 290.5 l-11.6 -13.5 M432.0 296.5 l-7.1 -8.3 M483.0 3.9 l8.9 13.3 M474.9 7.1 l11.1 16.4 M471.3 10.4 l10.3 15.3 M462.7 15.7 l10.8 16.0 M456.7 21.8 l8.8 13.0 M476.0 7.7 l-11.9 8.0 M482.6 14.6 l-14.6 9.8 M486.5 22.9 l-12.1 8.2 M493.0 60.8 l-18.3 14.6 M486.7 57.6 l-13.7 10.9 M486.1 50.4 l-20.1 16.0 M478.9 42.7 l-18.7 14.9 M473.8 38.4 l-16.7 13.2 M487.5 59.8 l-12.4 -15.6 M478.9 62.6 l-8.5 -10.7 M473.8 71.1 l-12.9 -16.2 M485.1 79.4 l8.0 19.6 M476.5 81.6 l9.0 21.9 M473.2 88.2 l5.3 13.0 M464.9 88.8 l7.2 17.7 M455.4 90.2 l9.0 22.0 M476.7 85.2 l-9.7 4.0 M484.6 92.5 l-18.3 7.5 M487.1 102.4 l-15.6 6.4 M478.3 114.5 l15.4 18.0 M472.4 118.8 l16.3 18.9 M470.6 126.9 l9.8 11.4 M461.1 129.4 l15.4 17.9 M456.3 133.9 l15.0 17.4 M474.5 122.6 l-9.7 8.4 M482.2 127.4 l-13.7 11.8 M486.2 136.4 l-9.5 8.1 M477.6 152.1 l16.4 16.9 M475.6 159.9 l10.5 10.8 M466.0 163.5 l16.2 16.7 M462.7 168.3 l14.6 15.0 M453.8 174.4 l17.1 17.7 M473.7 158.4 l-11.3 10.9 M479.7 167.0 l-8.8 8.5 M485.5 173.1 l-8.7 8.5 M494.5 210.4 l-12.3 16.8 M487.7 205.8 l-11.9 16.3 M480.4 204.0 l-8.6 11.7 M472.4 195.6 l-10.9 14.9 M469.7 191.8 l-12.8 17.4 M485.0 205.4 l-9.6 -7.0 M480.5 213.5 l-11.4 -8.3 M473.2 220.2 l-8.3 -6.1 M464.3 231.8 l24.3 2.6 M465.5 237.9 l20.7 2.2 M463.5 244.8 l23.2 2.5 M461.6 253.3 l25.2 2.7 M461.4 262.7 l23.7 2.5 M467.6 239.7 l-1.4 13.0 M473.8 240.6 l-1.3 12.3 M484.3 242.4 l-1.2 10.9 M465.4 267.5 l24.1 3.9 M463.8 274.9 l25.0 4.0 M467.4 285.4 l14.6 2.4 M464.4 291.8 l18.5 3.0 M460.1 297.3 l25.2 4.1 M465.5 275.0 l-2.7 16.6 M477.3 274.5 l-3.4 21.2 M486.7 279.4 l-2.3 14.5 M528.1 3.6 l4.1 25.3 M517.6 9.8 l2.7 16.4 M513.4 10.3 l2.8 16.8 M503.7 7.9 l4.0 24.5 M493.7 10.0 l3.9 23.7 M520.7 5.8 l-19.2 3.1 M521.9 18.4 l-17.5 2.9 M520.2 29.9 l-10.5 1.7 M508.2 38.0 l22.7 11.1 M508.3 46.6 l15.8 7.7 M502.5 52.3 l20.7 10.1 M502.1 58.8 l16.1 7.9 M499.4 67.1 l13.9 6.8 M506.6 47.2 l-5.3 10.8 M514.6 51.3 l-5.1 10.5 M524.9 57.1 l-4.5 9.1 M530.9 100.3 l-9.1 11.2 M523.1 92.5 l-10.5 12.9 M519.3 84.4 l-15.4 18.9 M510.5 82.9 l-9.9 12.2 M505.5 79.2 l-9.6 11.8 M526.0 94.9 l-15.6 -12.7 M518.7 100.3 l-12.0 -9.7 M514.8 108.5 l-15.4 -12.5 M527.9 124.1 l1.1 15.7 M521.6 125.0 l1.0 14.6 M511.4 122.8 l1.5 20.6 M505.6 121.3 l1.7 24.4 M497.3 124.6 l1.3 18.9 M518.8 121.2 l-13.2 0.9 M520.1 133.9 l-14.0 1.0 M521.5 141.1 l-15.9 1.1 M520.9 156.8 l8.3 12.9 M514.1 161.5 l7.9 12.3 M505.7 162.6 l11.9 18.5 M501.9 166.4 l10.7 16.6 M495.6 172.0 l9.2 14.4 M513.0 157.7 l-12.1 7.8 M523.3 166.7 l-18.5 11.9 M524.0 177.8 l-9.4 6.0 M519.9 194.3 l9.0 11.6 M513.2 197.7 l10.8 13.8 M507.1 204.6 l8.7 11.2 M500.2 207.5 l11.1 14.3 M497.2 212.4 l8.6 11.1 M514.1 197.1 l-12.9 10.0 M518.2 203.3 l-12.0 9.4 M525.1 214.3 l-10.0 7.8 M531.8 243.0 l-3.6 15.8 M522.2 237.5 l-5.0 22.0 M515.8 240.0 l-3.3 14.6 M509.2 235.2 l-4.7 20.8 M499.3 235.0 l-3.8 16.9 M523.9 238.0 l-16.9 -3.9 M522.4 250.0 l-19.2 -4.4 M516.8 258.5 l-12.1 -2.8 M506.8 268.3 l18.5 3.9 M507.3 276.5 l14.4 3.0 M503.9 284.4 l17.6 3.7 M499.2 291.7 l23.9 5.0 M502.8 299.2 l13.9 2.9 M506.4 275.6 l-3.2 15.4 M515.8 278.8 l-2.7 12.9 M523.6 277.0 l-4.1 19.6 M563.1 3.5 l7.5 16.9 M555.1 9.5 l5.7 12.8 M547.0 10.2 l7.8 17.7 M540.5 15.2 l6.3 14.1 M530.8 15.0 l9.7 21.8 M553.9 8.4 l-12.7 5.6 M558.0 16.8 l-13.3 5.9 M560.4 26.9 l-9.8 4.4 M565.7 66.2 l-18.4 7.8 M563.5 60.4 l-18.8 7.9 M557.5 54.1 l-13.1 5.5 M554.8 44.7 l-15.4 6.5 M552.3 40.5 l-14.0 5.9 M565.0 61.8 l-7.7 -18.2 M554.9 61.4 l-4.3 -10.3 M543.5 66.9 l-4.8 -11.4 M541.4 78.8 l20.9 1.2 M540.2 86.5 l22.4 1.2 M538.9 92.7 l24.4 1.4 M543.2 103.5 l14.5 0.8 M540.2 108.9 l19.9 1.1 M541.4 87.8 l-0.7 13.3 M549.9 87.5 l-0.8 14.8 M560.0 86.9 l-0.9 17.1 M567.8 144.4 l-18.9 8.8 M561.2 136.0 l-14.5 6.8 M561.9 126.5 l-22.9 10.7 M556.4 122.1 l-17.3 8.1 M552.9 113.0 l-18.4 8.6 M564.9 138.2 l-9.0 -19.3 M553.0 139.8 l-5.9 -12.7 M545.8 143.1 l-5.9 -12.7 M562.4 156.6 l4.8 23.2 M554.8 158.1 l4.8 23.3 M548.2 164.1 l2.9 14.3 M540.5 160.1 l5.1 25.0 M531.9 166.2 l3.4 16.6 M557.5 159.1 l-17.2 3.5 M558.9 168.8 l-16.0 3.3 M560.1 177.6 l-14.9 3.1 M569.0 201.4 l-0.2 15.7 M557.3 197.4 l-0.3 23.3 M549.4 198.2 l-0.3 21.6 M541.9 196.6 l-0.4 24.6 M533.6 201.5 l-0.2 14.4 M557.7 199.7 l-13.2 -0.2 M557.6 209.8 l-13.3 -0.2 M561.4 219.3 l-21.1 -0.3 M570.5 243.9 l-7.5 18.8 M563.4 238.3 l-9.4 23.6 M555.1 239.1 l-6.6 16.4 M545.9 236.6 l-5.7 14.3 M540.5 229.1 l-9.5 23.6 M560.8 240.2 l-12.3 -4.9 M558.7 249.9 l-15.2 -6.1 M553.1 257.1 l-10.7 -4.3 M549.1 265.8 l17.3 7.6 M546.8 273.5 l15.5 6.8 M542.2 279.4 l18.8 8.2 M537.5 289.3 l19.5 8.6 M534.5 295.5 l20.0 8.7 M544.5 272.0 l-7.4 17.0 M554.2 277.3 l-6.6 15.2 M563.7 282.0 l-6.3 14.3 M598.4 2.6 l9.3 13.8 M590.4 6.8 l10.4 15.4 M584.8 13.3 l7.9 11.7 M576.0 13.1 l13.7 20.2 M570.8 18.8 l11.6 17.1 M588.9 6.9 l-11.1 7.5 M595.7 16.8 l-11.2 7.6 M600.1 24.8 l-9.9 6.7 M582.6 40.8 l18.9 4.0 M581.9 45.5 l18.2 3.9 M577.9 54.4 l22.3 4.8 M579.5 61.6 l16.3 3.5 M574.1 72.1 l22.4 4.8 M579.3 47.8 l-2.9 13.7 M590.3 48.0 l-3.8 17.7 M601.3 49.3 l-4.2 19.8 M607.2 102.4 l-19.4 12.2 M602.5 94.8 l-19.6 12.3 M599.0 88.8 l-19.8 12.5 M594.9 80.9 l-21.1 13.3 M591.6 76.2 l-20.7 13.0 M604.3 96.7 l-10.2 -16.2 M593.0 101.9 l-8.5 -13.5 M583.5 108.4 l-9.0 -14.3 M600.3 117.4 l6.2 23.7 M594.0 122.1 l4.7 17.9 M586.7 123.5 l5.0 18.9 M578.2 126.8 l4.5 16.9 M571.3 127.0 l5.3 20.0 M593.0 121.1 l-13.4 3.5 M599.1 131.5 l-19.5 5.2 M599.0 140.7 l-14.8 3.9 M591.6 152.6 l13.2 8.6 M584.4 158.8 l17.6 11.5 M579.4 162.8 l21.0 13.7 M574.9 170.5 l20.2 13.2 M568.8 178.6 l21.4 14.0 M583.8 158.6 l-8.3 12.7 M593.1 167.7 l-5.5 8.5 M600.4 168.5 l-9.2 14.0 M603.2 197.2 l0.2 23.3 M596.7 195.9 l0.2 26.0 M588.8 198.9 l0.2 20.2 M580.2 199.7 l0.2 18.7 M573.5 198.6 l0.2 21.1 M599.6 198.3 l-21.4 0.2 M597.2 209.6 l-16.3 0.1 M596.3 217.3 l-14.5 0.1 M600.8 232.2 l6.4 19.9 M591.3 232.8 l7.8 24.3 M586.1 237.8 l5.9 18.4 M576.9 237.3 l8.0 24.7 M571.2 242.0 l6.2 19.4 M592.1 236.8 l-11.5 3.7 M599.1 243.0 l-20.7 6.7 M600.2 255.3 l-15.4 4.9 M583.4 267.6 l20.9 7.6 M579.1 274.3 l24.3 8.8 M579.5 283.2 l17.9 6.5 M578.5 288.3 l16.4 5.9 M574.1 296.7 l18.9 6.8 M580.5 275.4 l-4.1 11.5 M592.4 277.1 l-5.9 16.2 M601.6 277.9 l-7.5 20.6 M647.2 17.8 l-7.9 17.2 M636.9 13.8 l-7.4 16.1 M629.2 12.3 l-5.8 12.8 M625.4 5.0 l-10.0 21.9 M616.7 2.2 l-9.2 20.0 M638.9 12.1 l-14.5 -6.6 M632.9 21.9 l-12.0 -5.5 M630.0 32.0 l-14.9 -6.8 M636.6 72.6 l-18.9 0.2 M635.0 66.4 l-15.9 0.1 M634.6 55.9 l-15.3 0.1 M635.0 50.5 l-16.0 0.1 M638.8 40.8 l-23.9 0.2 M636.6 66.8 l-0.2 -19.7 M628.8 62.1 l-0.1 -10.1 M616.0 64.0 l-0.1 -13.9 M644.9 99.1 l-10.0 12.5 M638.7 94.7 l-9.5 11.8 M632.3 85.8 l-13.1 16.4 M627.3 82.8 l-12.2 15.1 M619.5 79.6 l-9.2 11.4 M638.9 93.7 l-13.2 -10.6 M631.8 101.2 l-11.9 -9.6 M625.5 107.2 l-10.1 -8.1 M617.0 117.2 l24.0 3.3 M615.9 122.6 l24.6 3.4 M618.1 133.0 l17.5 2.4 M613.2 139.6 l25.3 3.5 M612.2 147.1 l25.2 3.5 M617.1 124.2 l-2.0 14.5 M628.7 126.9 l-1.7 12.5 M637.6 124.1 l-2.8 20.3 M641.4 161.8 l0.8 16.9 M635.8 161.4 l0.9 18.3 M627.6 158.1 l1.3 25.6 M619.3 161.0 l1.0 20.7 M612.1 161.5 l1.0 20.4 M633.9 160.2 l-14.8 0.7 M632.6 169.0 l-11.5 0.6 M634.7 181.9 l-14.2 0.7 M632.7 190.6 l12.5 12.1 M628.1 197.5 l10.4 10.0 M620.0 203.2 l13.0 12.6 M614.3 205.9 l16.1 15.6 M610.8 213.3 l12.4 12.0 M624.8 198.8 l-8.0 8.3 M633.8 201.6 l-13.9 14.4 M639.2 212.5 l-8.3 8.6 M636.4 232.0 l8.3 16.6 M628.8 236.9 l7.4 14.8 M620.9 238.8 l8.9 18.0 M616.5 241.4 l8.7 17.4 M609.0 243.4 l10.0 20.1 M631.4 232.6 l-18.6 9.3 M633.6 244.1 l-12.9 6.4 M638.7 251.2 l-15.5 7.7 M629.9 268.8 l12.2 9.6 M623.9 272.4 l16.1 12.7 M618.4 277.1 l18.3 14.4 M613.7 284.1 l17.2 13.6 M610.0 292.3 l13.9 11.0 M622.2 274.2 l-6.8 8.7 M632.2 276.3 l-12.5 15.9 M639.8 283.7 l-11.1 14.1 M661.7 1.1 l17.3 6.2 M659.4 8.5 l16.5 5.9 M657.2 14.4 l16.7 6.0 M655.4 22.9 l14.6 5.2 M651.1 32.0 l16.4 5.8 M658.7 5.7 l-7.0 19.7 M669.5 9.7 l-6.9 19.4 M677.7 17.4 l-3.9 10.9 M671.5 37.0 l14.3 16.9 M664.7 45.3 l11.8 13.9 M658.2 48.4 l14.1 16.7 M652.8 56.2 l11.0 13.0 M645.8 61.3 l11.8 13.9 M663.5 45.8 l-9.3 7.9 M672.0 49.1 l-16.0 13.5 M679.1 59.4 l-14.2 12.0 M659.4 76.3 l15.8 2.0 M657.4 84.7 l17.5 2.2 M657.9 93.6 l14.4 1.8 M653.3 100.8 l21.5 2.7 M651.2 108.1 l23.9 3.1 M656.5 84.5 l-2.4 18.4 M665.0 87.3 l-1.9 15.1 M676.5 89.3 l-1.8 14.1 M653.4 118.3 l23.3 0.1 M657.8 124.1 l14.5 0.0 M654.4 134.4 l21.3 0.1 M656.5 139.2 l16.9 0.1 M653.2 147.4 l23.5 0.1 M653.9 122.5 l-0.1 21.0 M666.0 127.5 l-0.0 11.0 M675.8 125.7 l-0.0 14.7 M681.6 175.1 l-12.2 12.4 M680.8 168.7 l-17.8 18.1 M674.0 162.2 l-17.7 17.9 M666.8 156.7 l-16.0 16.3 M660.2 151.2 l-15.1 15.3 M675.9 167.5 l-7.6 -7.5 M669.8 176.9 l-10.8 -10.6 M665.5 185.6 l-15.1 -14.8 M664.2 192.4 l13.4 5.7 M656.9 197.8 l21.8 9.2 M655.9 204.1 l18.9 8.0 M651.2 213.9 l19.9 8.5 M650.9 220.6 l15.6 6.6 M657.0 197.8 l-5.6 13.2 M667.1 203.1 l-4.8 11.4 M675.8 207.2 l-4.5 10.7 M682.3 249.6 l-10.2 13.4 M678.3 244.4 l-12.2 16.1 M672.8 237.1 l-15.3 20.1 M664.4 235.5 l-10.6 14.0 M655.8 230.1 l-9.5 12.5 M676.5 243.5 l-11.1 -8.5 M670.8 253.0 l-13.2 -10.0 M663.1 259.4 l-9.6 -7.3 M683.4 284.3 l-9.8 16.9 M677.0 278.1 l-12.0 20.8 M670.7 278.2 l-8.7 15.1 M662.7 274.1 l-8.2 14.3 M657.0 270.4 l-8.7 15.0 M678.6 279.9 l-16.0 -9.2 M670.0 287.7 l-9.8 -5.7 M667.1 297.0 l-13.5 -7.8 M715.6 5.0 l6.2 13.5 M706.6 3.1 l10.8 23.5 M699.0 12.6 l6.3 13.6 M689.6 11.0 l10.8 23.4 M685.0 18.8 l6.4 13.9 M705.7 6.7 l-13.8 6.3 M710.0 14.4 l-15.0 6.9 M715.9 21.9 l-19.1 8.8 M722.5 52.5 l-11.1 22.7 M713.4 52.6 l-7.5 15.3 M707.3 50.4 l-6.9 14.1 M702.6 43.9 l-10.2 20.9 M691.2 41.5 l-7.7 15.8 M715.9 50.8 l-15.9 -7.7 M711.9 62.9 l-19.0 -9.3 M707.9 69.1 l-17.4 -8.5 M718.4 103.4 l-15.4 9.1 M718.0 96.9 l-20.6 12.1 M711.3 90.9 l-15.9 9.4 M706.8 83.3 l-15.9 9.4 M701.5 75.8 l-14.5 8.6 M717.5 96.2 l-8.5 -14.5 M707.6 103.8 l-10.1 -17.1 M699.0 109.5 l-10.6 -18.0 M715.6 147.1 l-19.7 3.4 M713.3 140.7 l-17.3 3.0 M710.3 131.4 l-14.7 2.6 M709.4 123.0 l-15.7 2.7 M712.9 115.3 l-25.3 4.4 M715.4 136.2 l-1.8 -10.3 M704.3 139.0 l-2.1 -12.1 M693.1 139.8 l-1.7 -9.9 M720.3 178.2 l-20.6 11.2 M714.6 174.1 l-15.3 8.3 M711.5 165.6 l-17.7 9.7 M707.2 159.9 l-15.9 8.7 M705.1 151.9 l-19.3 10.5 M715.6 176.0 l-10.0 -18.3 M707.4 176.3 l-6.5 -11.9 M698.4 183.0 l-8.0 -14.7 M714.8 194.4 l6.9 13.3 M706.2 196.3 l9.0 17.3 M695.6 198.8 l11.4 22.1 M688.7 201.9 l11.8 22.8 M682.2 207.7 l9.8 19.0 M703.7 198.8 l-9.5 4.9 M711.0 205.7 l-15.4 8.0 M714.7 213.3 l-15.0 7.7 M716.1 261.3 l-21.5 3.2 M713.3 254.4 l-17.9 2.7 M709.9 244.4 l-14.2 2.1 M713.0 238.7 l-21.9 3.3 M708.1 230.3 l-14.9 2.2 M713.3 252.8 l-2.1 -14.3 M703.8 254.5 l-2.2 -14.8 M694.2 256.8 l-2.5 -16.6 M717.0 271.7 l5.2 15.3 M705.8 273.2 l6.6 19.5 M700.6 273.0 l7.8 23.1 M693.9 280.1 l4.8 14.3 M685.0 282.1 l5.4 16.1 M707.7 272.8 l-15.8 5.3 M710.6 281.3 l-16.0 5.4 M713.4 290.4 l-15.3 5.2 M760.6 14.8 l-5.2 18.2 M753.0 12.4 l-5.3 18.5 M742.4 8.7 l-5.7 19.8 M735.6 5.5 l-6.3 22.2 M730.6 2.6 l-7.1 24.9 M748.9 11.8 l-10.8 -3.1 M747.7 22.3 l-14.1 -4.0 M749.0 30.3 l-20.7 -5.9 M757.1 52.3 l-3.1 15.3 M749.2 51.2 l-2.9 14.4 M743.8 48.2 l-3.6 18.1 M737.1 45.4 l-4.2 20.7 M728.2 45.5 l-3.5 17.3 M750.2 49.5 l-14.8 -3.0 M749.3 60.2 l-17.1 -3.4 M747.0 69.9 l-16.4 -3.3 M752.5 107.0 l-15.5 4.1 M751.5 99.5 l-17.5 4.6 M751.4 91.1 l-21.4 5.7 M746.1 84.0 l-15.0 4.0 M748.1 77.1 l-22.1 5.9 M751.3 101.9 l-4.8 -18.0 M745.0 102.9 l-4.4 -16.7 M735.0 105.2 l-4.3 -16.0 M761.4 140.0 l-20.4 14.6 M752.2 134.0 l-13.9 9.9 M749.6 128.4 l-15.8 11.2 M744.1 119.3 l-17.1 12.2 M738.4 117.1 l-11.6 8.3 M756.1 134.3 l-11.4 -16.0 M746.9 139.1 l-9.7 -13.6 M738.8 145.7 l-10.6 -14.9 M752.7 153.2 l9.0 22.8 M744.2 157.8 l8.1 20.7 M735.2 159.6 l9.3 23.6 M732.1 164.8 l6.6 16.9 M723.7 167.0 l7.3 18.6 M747.0 159.5 l-18.2 7.2 M746.0 167.0 l-11.3 4.5 M753.6 178.2 l-16.9 6.6 M753.6 196.2 l5.3 15.0 M744.1 198.0 l6.2 17.7 M736.1 199.4 l7.1 20.1 M732.1 202.6 l5.9 16.9 M722.9 202.3 l8.2 23.3 M742.8 198.2 l-9.9 3.5 M747.3 205.4 l-13.5 4.7 M752.3 215.5 l-16.0 5.6 M754.1 234.7 l4.9 13.2 M745.1 235.9 l6.2 16.9 M739.4 237.2 l6.7 18.3 M729.2 243.6 l5.0 13.7 M723.5 241.7 l7.6 20.7 M743.5 234.5 l-12.5 4.6 M747.2 244.7 l-12.3 4.5 M752.2 253.8 l-15.3 5.6 M750.0 297.9 l-14.3 1.9 M753.6 291.1 l-23.0 3.1 M752.3 282.0 l-23.1 3.1 M750.6 275.1 l-21.4 2.9 M747.5 268.5 l-17.2 2.3 M751.1 294.0 l-2.8 -20.3 M740.5 294.2 l-2.5 -18.0 M733.2 295.7 l-2.6 -19.0" stroke="#f6f6f4" stroke-width="0.9" fill="none"/>
<path d="M562.0 152.7h4.5v3.1h-4.5z M418.6 121.8h2.2v3.0h-2.2z M245.6 296.5h3.9v3.1h-3.9z M185.0 70.4h3.4v2.4h-3.4z M5.5 261.3h3.8v3.3h-3.8z M432.2 90.7h2.7v2.2h-2.7z M229.1 92.5h4.9v3.7h-4.9z M712.4 102.1h5.7v3.8h-5.7z M60.8 53.6h4.3v5.0h-4.3z M271.3 232.3h3.7v4.6h-3.7z M51.5 145.4h5.6v2.8h-5.6z M195.7 6.9h2.7v2.8h-2.7z M535.3 65.5h3.6v2.6h-3.6z M458.2 259.2h4.6v2.6h-4.6z M557.8 288.9h4.4v2.2h-4.4z M615.2 262.7h3.4v2.4h-3.4z M143.0 161.1h5.5v3.9h-5.5z M701.4 63.7h3.3v4.2h-3.3z M493.2 121.6h4.7v3.0h-4.7z M43.7 124.3h2.2v3.9h-2.2z M254.2 148.3h4.4v2.8h-4.4z M352.2 4.1h5.7v3.7h-5.7z M750.5 16.8h4.5v4.2h-4.5z M250.2 28.0h2.6v2.4h-2.6z M583.1 27.0h5.3v3.3h-5.3z M409.4 176.5h4.2v4.0h-4.2z M457.2 99.3h5.0v2.8h-5.0z M540.7 229.0h5.1v2.9h-5.1z M587.2 293.2h3.8v2.8h-3.8z M397.7 282.3h2.5v2.0h-2.5z M361.6 196.6h5.1v3.1h-5.1z M752.0 68.5h5.0v2.3h-5.0z M21.2 40.2h2.2v3.5h-2.2z M422.0 54.5h5.8v3.1h-5.8z M113.5 53.2h5.0v4.8h-5.0z M123.2 8.7h5.1v2.7h-5.1z M746.6 149.7h4.5v3.0h-4.5z M608.4 138.0h3.3v4.7h-3.3z M81.9 220.0h2.3v3.9h-2.3z M305.4 259.2h2.2v3.7h-2.2z M311.5 275.7h5.8v3.9h-5.8z M170.3 75.6h3.0v3.3h-3.0z M175.8 61.0h5.0v3.9h-5.0z M226.8 298.3h2.9v3.7h-2.9z M119.1 258.9h5.5v2.8h-5.5z M571.2 246.8h3.1v3.0h-3.1z M369.0 267.3h2.6v4.0h-2.6z M454.2 135.9h4.3v4.6h-4.3z M159.5 265.1h3.4v4.3h-3.4z M656.1 54.7h5.5v5.0h-5.5z M226.2 7.3h2.4v4.9h-2.4z M7.2 273.5h2.6v4.2h-2.6z M74.1 50.6h4.7v2.3h-4.7z M258.1 275.6h4.9v4.6h-4.9z M744.5 9.9h2.9v4.4h-2.9z M524.0 11.4h4.0v2.7h-4.0z M327.2 31.5h2.1v5.0h-2.1z M240.5 263.6h2.5v3.5h-2.5z M103.2 128.5h2.7v4.1h-2.7z M112.4 221.5h4.0v2.3h-4.0z M268.7 148.9h5.7v3.0h-5.7z M163.5 290.3h5.5v4.2h-5.5z M207.5 53.2h3.1v2.2h-3.1z M32.8 152.6h3.6v3.7h-3.6z M275.6 3.2h4.8v4.0h-4.8z M413.4 164.6h4.8v4.9h-4.8z M664.3 215.3h3.6v3.0h-3.6z M318.6 291.9h3.5v3.2h-3.5z M311.6 42.9h6.0v2.0h-6.0z M462.0 277.9h3.0v3.8h-3.0z M286.5 72.2h2.8v2.3h-2.8z M640.7 235.2h5.6v2.1h-5.6z M527.6 97.3h4.6v3.6h-4.6z M239.9 291.5h2.0v4.2h-2.0z M648.6 153.0h4.4v5.0h-4.4z M178.2 188.9h5.0v3.1h-5.0z M541.3 118.1h4.1v3.8h-4.1z M514.7 96.6h4.5v3.6h-4.5z M169.7 183.8h3.1v4.7h-3.1z M359.7 216.5h4.1v3.4h-4.1z M168.1 42.6h5.7v3.6h-5.7z M398.2 158.2h5.3v2.7h-5.3z M131.0 246.6h3.8v3.9h-3.8z M628.9 268.2h5.5v2.1h-5.5z M289.8 249.6h5.3v2.4h-5.3z M116.9 75.4h2.4v3.1h-2.4z M610.4 156.4h3.8v2.3h-3.8z M300.6 299.1h4.8v3.3h-4.8z M363.5 239.5h5.0v2.4h-5.0z M516.9 110.1h4.1v2.7h-4.1z M281.8 102.0h3.5v2.1h-3.5z M152.6 171.2h2.2v2.5h-2.2z M545.8 82.4h3.3v2.7h-3.3z M633.9 27.4h4.5v4.6h-4.5z M153.3 126.9h5.2v3.9h-5.2z M282.4 13.2h3.8v3.1h-3.8z M541.5 88.6h3.6v3.9h-3.6z M616.2 105.7h3.5v3.7h-3.5z M702.9 57.5h5.9v4.1h-5.9z M283.0 199.7h3.3v2.2h-3.3z M574.6 113.8h4.1v3.5h-4.1z M685.0 227.1h2.1v3.8h-2.1z M351.5 138.7h5.4v3.2h-5.4z M359.9 267.1h3.8v3.5h-3.8z M389.0 247.4h4.7v4.2h-4.7z M305.3 12.2h4.7v3.7h-4.7z M584.6 231.0h2.5v2.7h-2.5z M58.6 245.2h2.4v2.3h-2.4z M572.5 169.3h2.2v4.0h-2.2z M540.4 144.8h2.2v4.1h-2.2z M317.6 175.2h6.0v4.5h-6.0z M662.7 43.7h3.3v3.6h-3.3z M4.6 296.6h3.1v2.8h-3.1z M237.9 76.5h5.4v3.7h-5.4z M388.3 126.1h2.2v2.9h-2.2z M658.7 240.6h5.4v2.8h-5.4z M153.5 15.6h4.1v3.1h-4.1z M352.8 146.7h4.3v3.1h-4.3z M609.1 60.1h5.7v3.7h-5.7z M38.9 94.3h4.1v3.2h-4.1z M429.3 97.1h3.1v4.4h-3.1z M221.6 213.2h5.2v3.8h-5.2z M345.5 280.5h3.8v4.6h-3.8z M43.9 130.1h4.6v2.1h-4.6z M655.6 21.6h4.4v2.5h-4.4z M701.0 168.3h5.2v3.5h-5.2z M512.1 202.5h3.2v2.6h-3.2z M637.1 43.7h5.7v2.6h-5.7z M76.7 28.6h5.1v4.9h-5.1z M315.2 197.7h3.0v4.7h-3.0z M521.3 46.5h2.2v4.1h-2.2z M31.7 250.8h3.2v2.7h-3.2z M442.4 95.6h4.2v2.5h-4.2z M693.0 97.3h5.4v2.5h-5.4z M607.5 294.0h3.6v2.1h-3.6z M288.8 192.2h2.9v3.6h-2.9z M71.1 139.3h4.9v3.3h-4.9z M516.0 34.3h5.3v2.4h-5.3z M701.7 298.8h5.8v3.6h-5.8z M221.0 104.4h5.0v3.5h-5.0z M706.7 27.9h3.9v4.6h-3.9z M454.3 162.2h2.4v2.4h-2.4z M206.1 267.9h5.4v2.7h-5.4z M702.7 9.7h4.4v4.9h-4.4z M261.7 283.3h4.6v2.2h-4.6z M253.2 134.9h3.0v4.2h-3.0z M135.9 236.3h3.2v2.2h-3.2z M425.0 28.7h4.2v4.4h-4.2z M452.7 138.4h2.1v3.5h-2.1z M73.9 194.0h2.5v3.7h-2.5z M268.2 112.4h4.7v2.5h-4.7z M129.0 282.5h3.3v4.5h-3.3z M663.8 144.1h2.6v2.3h-2.6z M668.1 35.1h4.0v3.6h-4.0z M89.4 140.3h2.7v3.6h-2.7z M385.2 110.1h2.8v3.2h-2.8z M154.6 38.1h3.0v4.6h-3.0z M381.4 267.2h2.1v4.8h-2.1z M371.2 237.3h4.3v4.1h-4.3z M174.2 225.0h2.6v2.8h-2.6z M23.5 118.0h4.1v2.9h-4.1z M676.8 25.3h4.3v2.7h-4.3z M452.4 235.2h4.8v2.2h-4.8z M186.8 179.8h5.9v2.1h-5.9z M469.9 207.6h5.3v3.0h-5.3z M616.0 138.5h5.7v2.0h-5.7z M714.6 123.6h3.6v2.3h-3.6z M186.1 220.1h4.7v2.5h-4.7z M261.7 42.1h2.8v2.7h-2.8z M251.6 292.8h6.0v4.4h-6.0z M364.6 149.2h5.1v4.7h-5.1z M571.1 190.9h2.8v3.9h-2.8z M642.8 236.0h2.4v4.2h-2.4z M265.4 48.7h5.9v4.0h-5.9z M566.6 40.5h5.3v4.8h-5.3z M687.6 223.5h5.3v4.4h-5.3z M448.7 130.6h5.3v4.4h-5.3z M661.8 89.7h5.8v3.6h-5.8z M718.9 34.8h5.9v4.4h-5.9z M191.5 251.5h2.9v2.6h-2.9z M348.0 71.0h4.0v4.7h-4.0z M520.8 213.1h3.6v4.4h-3.6z M603.2 204.9h5.8v4.5h-5.8z M308.7 26.1h4.6v4.5h-4.6z M258.1 178.5h5.3v4.4h-5.3z M3.4 146.7h2.1v2.3h-2.1z M617.4 125.6h4.4v3.4h-4.4z M254.9 64.1h3.4v4.5h-3.4z M470.7 87.6h2.4v2.8h-2.4z M532.9 132.6h4.6v4.4h-4.6z M91.7 204.9h2.2v4.5h-2.2z M139.9 81.4h5.8v3.1h-5.8z M170.4 267.0h4.4v4.7h-4.4z M299.7 149.9h5.8v3.5h-5.8z M751.3 56.8h5.3v2.5h-5.3z M400.7 0.1h2.7v4.8h-2.7z M345.5 242.8h3.0v3.1h-3.0z M76.7 165.8h5.4v3.5h-5.4z M286.3 278.6h5.6v4.0h-5.6z M57.7 187.2h3.8v4.9h-3.8z M275.0 198.3h4.5v3.1h-4.5z M396.9 203.0h5.6v3.5h-5.6z M276.4 292.9h2.2v4.5h-2.2z M519.5 167.2h3.8v4.3h-3.8z M677.2 218.7h5.0v2.1h-5.0z M247.1 41.1h5.8v4.7h-5.8z M109.8 176.3h4.3v2.1h-4.3z M298.1 224.2h4.6v2.8h-4.6z M579.5 87.4h4.2v3.3h-4.2z M743.4 194.6h5.2v4.0h-5.2z M289.2 288.9h4.8v4.1h-4.8z M210.9 48.6h4.3v4.5h-4.3z M603.2 104.2h2.6v3.5h-2.6z M666.8 48.6h5.0v2.5h-5.0z M237.1 16.0h3.2v3.1h-3.2z M734.9 288.6h2.7v2.9h-2.7z M717.2 59.2h3.3v3.3h-3.3z M82.4 78.1h3.6v3.2h-3.6z M732.3 80.1h2.8v4.7h-2.8z M342.2 251.1h4.5v4.3h-4.5z M239.2 45.6h5.0v3.4h-5.0z M424.6 201.2h5.0v2.8h-5.0z M275.7 275.2h4.1v2.9h-4.1z M478.9 77.9h5.1v2.1h-5.1z M628.3 169.9h3.4v4.8h-3.4z M201.8 73.0h2.3v3.6h-2.3z M572.8 203.4h3.7v4.4h-3.7z M84.6 92.1h4.6v4.9h-4.6z M481.8 207.6h5.1v3.2h-5.1z M714.7 222.7h3.4v3.2h-3.4z M612.4 104.9h2.7v4.6h-2.7z M404.2 156.4h4.7v4.7h-4.7z M101.5 101.6h2.3v3.2h-2.3z M381.6 255.6h4.7v3.7h-4.7z M306.8 172.1h3.1v4.5h-3.1z M599.2 251.5h2.6v4.0h-2.6z M573.1 150.2h5.6v4.7h-5.6z M564.7 246.3h4.6v4.6h-4.6z M99.8 211.2h4.8v3.8h-4.8z M209.1 20.2h4.4v4.5h-4.4z M207.5 63.9h2.9v2.3h-2.9z M513.8 292.4h5.2v3.1h-5.2z M531.6 21.7h5.4v3.0h-5.4z M2.6 188.8h2.6v2.8h-2.6z M44.9 133.7h4.2v4.4h-4.2z M30.1 248.2h2.4v2.7h-2.4z M478.4 102.0h3.3v3.7h-3.3z M165.6 238.0h2.8v4.5h-2.8z M614.6 161.1h2.1v4.3h-2.1z M21.6 151.4h3.7v2.2h-3.7z M478.8 217.4h4.3v3.2h-4.3z M389.2 176.6h2.9v4.6h-2.9z M756.7 241.3h5.8v3.0h-5.8z M749.6 21.4h3.9v2.4h-3.9z M345.0 204.8h4.8v3.4h-4.8z M259.7 57.0h3.6v2.8h-3.6z M147.6 220.8h4.1v3.3h-4.1z M150.3 211.1h2.8v2.8h-2.8z M425.8 210.4h5.9v4.2h-5.9z M720.7 276.0h4.9v4.2h-4.9z M47.7 61.7h2.1v4.6h-2.1z M548.7 189.1h3.1v3.1h-3.1z M124.4 189.7h6.0v2.9h-6.0z M33.6 52.6h3.4v4.7h-3.4z M611.4 136.5h2.4v2.3h-2.4z M116.9 233.2h3.9v5.0h-3.9z M692.9 238.4h3.9v4.5h-3.9z M97.5 32.7h4.3v3.5h-4.3z M159.1 75.6h2.1v4.7h-2.1z M539.8 283.6h5.9v3.3h-5.9z M556.6 115.2h5.2v4.5h-5.2z M101.7 3.9h2.9v3.8h-2.9z M288.0 2.7h5.3v4.4h-5.3z M352.4 13.0h5.6v3.6h-5.6z M53.9 97.0h4.5v4.7h-4.5z M368.2 191.8h2.8v2.7h-2.8z M688.4 114.8h2.4v3.8h-2.4z M95.9 60.0h3.8v3.8h-3.8z M483.6 212.1h3.8v2.2h-3.8z M550.6 16.1h3.9v3.2h-3.9z M511.4 214.1h3.0v3.9h-3.0z M525.9 141.5h2.6v4.7h-2.6z M455.3 18.8h3.0v5.0h-3.0z M173.8 117.7h5.2v4.5h-5.2z M481.8 222.5h2.2v2.3h-2.2z M741.9 240.8h2.2v2.1h-2.2z M182.7 279.2h2.9v4.0h-2.9z M707.1 191.6h5.7v2.8h-5.7z M116.6 5.5h5.0v2.3h-5.0z M739.6 213.0h2.7v4.4h-2.7z M123.7 153.6h2.4v4.4h-2.4z M676.1 274.9h2.0v4.6h-2.0z M422.5 246.4h4.0v3.9h-4.0z M451.9 239.9h2.3v2.2h-2.3z M414.6 87.3h3.6v2.0h-3.6z M566.2 7.2h5.3v4.4h-5.3z M348.1 36.6h4.6v2.6h-4.6z M326.1 33.1h5.9v3.6h-5.9z M267.9 28.2h4.9v4.5h-4.9z M644.7 30.4h3.5v2.9h-3.5z M579.4 44.3h4.4v4.9h-4.4z M584.3 2.1h2.3v2.3h-2.3z M526.3 179.6h4.1v3.4h-4.1z M309.6 183.3h4.6v4.7h-4.6z M556.8 239.0h5.7v4.5h-5.7z M544.7 9.2h4.7v4.5h-4.7z M327.4 263.4h2.7v4.8h-2.7z M335.7 211.9h3.0v2.9h-3.0z M264.8 97.3h2.4v3.3h-2.4z M745.5 196.2h5.7v4.3h-5.7z M636.0 298.3h5.0v2.8h-5.0z M189.8 123.7h2.1v2.7h-2.1z M673.6 276.3h3.3v4.3h-3.3z M589.0 266.9h5.2v3.6h-5.2z M79.7 247.6h3.3v3.9h-3.3z M279.0 161.2h5.9v2.5h-5.9z M403.5 195.0h4.2v4.8h-4.2z M309.7 274.1h4.8v4.9h-4.8z M68.1 63.7h3.1v4.7h-3.1z M10.4 78.1h4.9v5.0h-4.9z M134.0 131.4h4.7v4.1h-4.7z M567.0 225.9h3.0v2.8h-3.0z M21.0 207.3h2.8v2.8h-2.8z M732.9 193.0h4.4v4.0h-4.4z M454.4 208.5h3.2v2.2h-3.2z M50.9 4.4h3.4v2.4h-3.4z M85.8 148.1h5.9v4.1h-5.9z M207.8 230.8h2.7v2.3h-2.7z M230.4 122.7h4.8v3.3h-4.8z M553.5 28.5h5.7v3.0h-5.7z M632.5 9.2h5.3v2.7h-5.3z M649.8 240.9h4.7v2.8h-4.7z M7.5 57.0h5.6v2.5h-5.6z M501.0 176.1h4.6v2.5h-4.6z M109.2 29.1h5.9v3.1h-5.9z M495.7 170.9h2.9v2.2h-2.9z M11.3 255.8h2.5v4.9h-2.5z M276.4 216.8h2.6v4.4h-2.6z M191.3 109.9h4.1v2.3h-4.1z M188.7 238.8h3.1v3.1h-3.1z M581.2 67.2h2.8v2.7h-2.8z M292.0 109.6h4.6v3.4h-4.6z M660.9 15.2h4.7v4.5h-4.7z M178.5 8.8h3.8v2.3h-3.8z M349.6 213.5h2.4v2.4h-2.4z M364.4 52.1h2.9v3.3h-2.9z M89.9 20.4h3.4v3.4h-3.4z M711.8 166.4h2.3v2.7h-2.3z M565.6 168.9h5.5v4.9h-5.5z M652.0 33.0h5.8v3.6h-5.8z M182.2 51.2h5.5v2.6h-5.5z M63.1 79.6h5.7v3.4h-5.7z M555.8 22.3h3.8v3.0h-3.8z M156.1 198.9h3.4v2.4h-3.4z M748.0 144.5h2.7v2.0h-2.7z M496.3 154.4h2.1v3.4h-2.1z M562.7 161.1h2.9v3.5h-2.9z M459.7 195.3h2.6v4.4h-2.6z M718.6 222.1h5.4v3.1h-5.4z M686.1 54.5h2.9v3.8h-2.9z M685.2 24.6h2.9v2.1h-2.9z M333.7 42.1h2.8v4.2h-2.8z M443.3 281.8h3.6v4.0h-3.6z M9.6 284.5h2.9v3.4h-2.9z M388.9 284.5h4.0v5.0h-4.0z M472.1 64.9h5.3v2.6h-5.3z M759.7 137.0h2.9v4.9h-2.9z M244.6 122.1h3.4v4.0h-3.4z M17.4 112.2h2.6v4.5h-2.6z M0.1 182.3h3.0v3.4h-3.0z M427.0 213.5h2.6v2.7h-2.6z M91.6 288.1h2.6v2.4h-2.6z M396.9 174.4h5.5v2.2h-5.5z M178.1 50.3h4.3v3.4h-4.3z M310.8 266.5h4.6v4.6h-4.6z M727.3 80.7h5.8v3.2h-5.8z M39.2 274.4h2.4v2.1h-2.4z M220.1 86.7h5.9v4.6h-5.9z M319.3 158.8h5.4v4.4h-5.4z M496.6 153.8h2.5v2.7h-2.5z M500.2 175.9h5.2v4.7h-5.2z M731.4 57.8h2.3v4.7h-2.3z M433.4 54.5h4.8v2.8h-4.8z M179.8 109.9h4.1v4.0h-4.1z M55.8 222.4h4.5v3.4h-4.5z M510.8 239.9h2.0v3.4h-2.0z M515.2 212.7h4.6v2.5h-4.6z M728.5 235.7h2.9v3.3h-2.9z M728.0 62.1h3.6v4.9h-3.6z M684.1 69.7h4.9v3.1h-4.9z M504.1 230.1h2.5v2.7h-2.5z M163.4 79.8h2.1v2.4h-2.1z M308.7 126.2h2.3v3.7h-2.3z M716.2 173.1h3.4v4.1h-3.4z M332.3 52.6h3.9v2.1h-3.9z M513.7 48.3h3.5v4.9h-3.5z M582.8 250.7h4.6v3.9h-4.6z M535.7 289.9h2.8v4.3h-2.8z M228.6 76.7h5.3v3.8h-5.3z M645.7 262.5h4.4v2.6h-4.4z M11.4 160.5h4.9v2.8h-4.9z M53.2 1.4h2.7v4.1h-2.7z M3.0 69.0h3.1v4.1h-3.1z M750.3 5.8h2.5v4.8h-2.5z M737.2 44.6h3.3v3.6h-3.3z M243.3 125.2h3.9v2.8h-3.9z M41.8 25.2h2.6v2.3h-2.6z M474.3 209.0h3.1v4.4h-3.1z M553.9 102.5h4.0v2.6h-4.0z M706.0 168.1h2.2v2.5h-2.2z M526.4 115.6h4.9v2.7h-4.9z M605.8 240.6h2.4v3.8h-2.4z M145.4 212.3h5.2v4.4h-5.2z M175.7 28.0h4.7v3.7h-4.7z M105.0 57.8h4.3v2.3h-4.3z M481.8 72.3h3.0v3.3h-3.0z M405.2 217.3h2.1v4.2h-2.1z M167.9 87.2h4.6v4.1h-4.6z M467.2 270.5h2.8v2.9h-2.8z M503.5 78.2h2.6v2.7h-2.6z M586.2 248.1h4.9v4.9h-4.9z M603.7 92.9h3.3v4.2h-3.3z M42.3 182.8h2.4v2.1h-2.4z M390.4 45.4h5.7v4.6h-5.7z M350.9 59.3h2.5v3.5h-2.5z M396.2 108.9h4.9v3.6h-4.9z M589.3 31.9h2.3v3.2h-2.3z M367.5 75.8h4.7v2.7h-4.7z M241.9 143.1h4.8v4.3h-4.8z M282.5 134.1h5.7v4.8h-5.7z M470.2 31.5h3.8v3.9h-3.8z M211.7 11.2h5.9v4.7h-5.9z M98.0 139.8h4.5v2.9h-4.5z M52.1 225.2h5.1v3.3h-5.1z M65.1 118.2h2.4v4.9h-2.4z M38.9 86.4h5.1v2.4h-5.1z M81.0 21.2h2.7v3.6h-2.7z M633.1 50.7h2.7v4.3h-2.7z M323.6 101.4h2.5v2.7h-2.5z M738.5 35.1h3.0v4.2h-3.0z M677.7 271.3h3.9v4.9h-3.9z M459.1 86.6h3.9v4.1h-3.9z M557.8 38.9h2.8v4.9h-2.8z M81.3 244.0h3.4v2.7h-3.4z M193.9 140.8h6.0v2.4h-6.0z M649.4 96.4h2.7v4.2h-2.7z M259.6 56.3h3.7v4.5h-3.7z M655.9 172.5h2.0v4.3h-2.0z M461.0 269.8h5.8v3.0h-5.8z M644.9 245.7h3.1v3.1h-3.1z M284.7 105.9h3.5v2.3h-3.5z M172.6 272.9h3.6v3.9h-3.6z M674.3 226.7h3.0v4.8h-3.0z M611.2 297.2h4.9v4.3h-4.9z M617.9 76.0h4.6v3.1h-4.6z M638.2 40.1h4.2v3.0h-4.2z M623.7 103.6h5.4v4.5h-5.4z M667.9 41.7h5.8v4.2h-5.8z M514.5 195.7h2.2v4.6h-2.2z M416.3 136.7h3.4v4.3h-3.4z M594.5 261.0h2.9v3.0h-2.9z M189.5 30.1h3.3v2.1h-3.3z M605.4 68.1h2.3v2.2h-2.3z M563.2 59.5h3.8v3.2h-3.8z M609.8 286.2h3.2v3.9h-3.2z M680.0 141.1h5.6v4.2h-5.6z M236.8 262.2h4.3v2.3h-4.3z M446.5 248.8h4.1v3.5h-4.1z M316.5 264.1h4.7v2.6h-4.7z M275.4 109.0h5.8v4.1h-5.8z M94.9 274.3h2.1v3.8h-2.1z M328.6 215.2h3.7v2.3h-3.7z M398.0 246.1h5.2v3.1h-5.2z M169.0 223.4h5.2v2.7h-5.2z M671.2 297.7h3.7v3.1h-3.7z M539.5 278.9h2.8v2.9h-2.8z M250.1 219.7h2.7v3.6h-2.7z M380.2 200.5h2.6v4.9h-2.6z M760.0 168.3h5.2v2.6h-5.2z M691.7 165.4h5.0v4.6h-5.0z M274.9 277.2h2.8v2.1h-2.8z M381.8 269.6h5.6v4.9h-5.6z M388.2 279.8h4.2v2.4h-4.2z M479.6 241.0h3.7v3.8h-3.7z M196.9 82.8h3.7v3.5h-3.7z M355.9 27.7h2.0v3.0h-2.0z M544.8 224.5h2.9v2.8h-2.9z M392.7 52.6h4.4v4.7h-4.4z M153.5 175.7h4.9v4.2h-4.9z M541.2 213.2h3.1v4.5h-3.1z M703.1 15.8h5.8v3.3h-5.8z M65.6 20.9h5.2v4.0h-5.2z M108.0 138.0h4.6v5.0h-4.6z M255.4 230.0h3.0v2.6h-3.0z M122.5 123.0h4.5v2.9h-4.5z M123.1 65.6h2.3v2.6h-2.3z M240.0 151.4h2.7v3.4h-2.7z M334.3 291.9h3.9v4.8h-3.9z M358.3 59.4h4.4v2.4h-4.4z M128.6 22.0h4.8v4.9h-4.8z" fill="#d5d0cb"/>
<path d="M306.6 106.2h4.6v3.8h-4.6z M524.9 117.6h2.9v6.3h-2.9z M435.2 1.9h7.1v5.6h-7.1z M269.4 189.0h7.5v4.0h-7.5z M328.7 89.5h5.3v5.3h-5.3z M558.6 284.8h2.9v3.8h-2.9z M647.2 237.3h5.5v5.4h-5.5z M258.4 283.5h5.3v4.0h-5.3z M138.6 34.6h7.4v6.0h-7.4z M20.3 97.0h4.9v4.5h-4.9z M276.2 268.5h4.1v4.7h-4.1z M706.3 191.8h4.9v3.7h-4.9z M294.2 182.7h6.7v3.3h-6.7z M281.6 116.3h4.2v6.6h-4.2z M409.6 82.7h4.0v6.1h-4.0z M121.8 207.0h2.1v3.0h-2.1z M45.2 241.7h2.9v3.1h-2.9z M43.8 79.2h6.4v5.6h-6.4z M691.9 284.1h5.3v6.6h-5.3z M68.1 277.5h4.6v3.0h-4.6z M568.5 257.6h4.3v2.5h-4.3z M663.4 226.1h5.6v6.9h-5.6z M29.0 16.8h2.7v2.1h-2.7z M538.3 189.0h2.7v2.8h-2.7z M137.5 182.8h6.0v6.8h-6.0z M274.1 293.7h4.6v4.0h-4.6z M192.5 69.8h7.8v7.0h-7.8z M536.5 52.5h3.1v2.8h-3.1z M266.8 221.2h2.4v4.7h-2.4z M517.3 10.1h4.6v6.0h-4.6z M437.5 135.5h7.3v5.0h-7.3z M256.1 118.8h7.7v6.3h-7.7z M695.3 168.2h2.9v2.9h-2.9z M291.3 207.2h2.0v6.0h-2.0z M597.3 154.5h2.0v6.0h-2.0z M314.7 200.8h5.4v5.6h-5.4z M310.7 288.0h7.7v6.6h-7.7z M467.5 94.9h4.3v3.3h-4.3z M686.9 237.7h6.7v6.1h-6.7z M753.0 206.4h3.9v5.8h-3.9z M199.3 183.3h3.0v6.3h-3.0z M371.4 82.5h7.5v2.4h-7.5z M707.0 227.1h2.9v5.8h-2.9z M435.7 272.2h5.5v4.1h-5.5z M709.4 26.2h6.7v2.5h-6.7z M210.2 34.1h7.2v4.2h-7.2z M552.0 77.0h6.4v5.2h-6.4z M74.2 148.2h6.3v3.1h-6.3z M497.3 83.4h4.2v6.6h-4.2z M716.7 299.4h4.6v4.9h-4.6z M614.5 227.6h4.7v6.3h-4.7z M305.0 285.0h4.8v2.6h-4.8z M569.3 43.5h6.1v2.3h-6.1z M751.1 162.3h6.4v2.7h-6.4z M484.0 113.0h3.5v6.1h-3.5z M25.3 143.4h2.5v6.3h-2.5z M678.9 10.3h4.8v4.3h-4.8z M546.2 218.7h4.1v6.7h-4.1z M140.8 41.0h6.9v2.6h-6.9z M141.3 150.0h4.0v2.8h-4.0z M706.7 142.2h6.7v3.3h-6.7z M693.6 66.3h7.4v5.1h-7.4z M738.0 231.3h5.8v4.7h-5.8z M649.7 133.1h2.6v6.6h-2.6z M612.3 204.6h6.5v3.2h-6.5z M352.1 246.9h7.8v6.6h-7.8z M122.0 205.2h5.3v4.0h-5.3z M127.5 41.1h4.8v4.5h-4.8z M203.6 110.3h5.3v5.8h-5.3z M447.9 48.6h7.3v3.8h-7.3z M729.4 294.5h2.8v4.9h-2.8z M734.8 115.5h5.3v3.6h-5.3z M21.8 61.4h2.7v3.4h-2.7z M478.4 168.9h7.7v5.4h-7.7z M275.4 284.8h5.8v4.7h-5.8z M655.6 201.0h4.2v5.0h-4.2z M228.2 290.8h3.5v6.9h-3.5z M48.9 3.0h5.3v3.0h-5.3z M385.7 35.4h7.0v5.3h-7.0z M520.0 278.0h8.0v5.4h-8.0z M542.0 0.5h2.3v4.1h-2.3z M736.5 93.9h5.4v2.0h-5.4z M316.0 270.8h5.5v6.1h-5.5z M9.9 60.8h3.1v6.2h-3.1z M77.3 279.6h3.6v6.4h-3.6z M391.8 97.0h7.8v4.0h-7.8z M530.0 20.2h7.0v6.9h-7.0z M84.0 223.9h3.6v2.7h-3.6z M276.8 198.5h7.7v7.0h-7.7z M755.1 187.0h5.9v2.8h-5.9z M551.8 165.4h4.2v6.5h-4.2z M193.9 42.5h2.9v2.7h-2.9z M447.3 240.3h3.0v4.5h-3.0z M436.6 168.1h4.5v4.7h-4.5z M11.5 17.4h4.5v3.2h-4.5z M575.2 72.6h6.9v3.2h-6.9z M70.4 143.2h4.3v3.7h-4.3z M581.5 66.7h6.0v6.2h-6.0z M344.0 150.9h7.5v5.0h-7.5z M137.5 20.9h2.5v3.7h-2.5z M67.5 194.6h4.5v3.5h-4.5z M389.2 281.0h3.5v2.8h-3.5z M232.1 97.3h7.5v5.5h-7.5z M325.9 49.8h2.3v2.6h-2.3z M644.1 194.4h2.9v5.1h-2.9z M44.4 152.1h4.0v2.5h-4.0z M564.3 215.0h5.1v2.8h-5.1z M508.9 130.0h6.0v2.5h-6.0z M686.0 1.1h3.3v4.0h-3.3z M150.8 26.3h6.1v7.0h-6.1z M254.6 79.9h6.0v3.1h-6.0z M304.6 206.5h4.6v2.8h-4.6z M53.5 162.9h7.9v6.6h-7.9z M75.9 150.7h4.9v3.0h-4.9z M509.1 148.7h6.9v3.5h-6.9z M709.8 244.4h4.8v2.7h-4.8z M367.6 38.1h6.1v5.5h-6.1z M439.4 292.9h2.3v5.6h-2.3z M608.7 33.9h3.9v2.3h-3.9z M443.1 216.9h4.1v5.5h-4.1z M278.7 213.7h3.7v6.9h-3.7z M332.8 1.1h2.5v5.6h-2.5z M657.2 191.0h2.9v6.4h-2.9z M544.8 34.6h4.3v5.4h-4.3z M2.8 12.7h4.1v6.4h-4.1z M757.2 95.5h7.5v5.9h-7.5z M657.5 176.5h7.8v5.2h-7.8z M720.4 169.8h3.2v4.6h-3.2z M367.1 101.2h4.2v4.6h-4.2z M446.9 66.8h3.7v4.5h-3.7z M383.0 125.6h6.0v2.9h-6.0z M404.2 82.7h6.6v5.5h-6.6z M593.6 155.2h3.5v6.6h-3.5z M388.2 112.6h3.7v4.0h-3.7z M538.6 245.6h4.9v5.7h-4.9z M161.8 135.6h4.1v3.5h-4.1z M273.2 226.4h6.4v3.0h-6.4z M177.7 235.3h5.9v5.4h-5.9z M482.8 208.0h3.6v2.3h-3.6z M274.1 9.7h7.8v4.6h-7.8z M509.4 290.0h6.8v3.1h-6.8z M256.1 32.6h6.8v5.7h-6.8z M370.6 110.8h3.6v4.4h-3.6z M541.2 268.6h7.1v6.3h-7.1z M333.8 126.4h3.9v6.9h-3.9z M139.4 47.3h3.7v6.6h-3.7z M648.1 99.4h7.1v6.5h-7.1z M324.7 57.7h6.6v3.9h-6.6z M90.7 270.8h4.6v4.0h-4.6z M452.4 76.6h2.1v4.0h-2.1z M288.3 3.3h4.2v5.8h-4.2z M253.0 203.9h5.7v2.9h-5.7z M15.5 202.3h5.7v3.5h-5.7z M152.1 256.6h7.5v3.2h-7.5z M445.4 172.4h3.9v2.2h-3.9z M247.3 193.3h5.6v4.6h-5.6z M93.0 63.8h3.9v4.1h-3.9z M276.0 270.7h2.7v6.9h-2.7z M182.7 257.0h3.5v4.9h-3.5z M286.7 11.4h6.8v6.1h-6.8z M204.6 232.9h4.9v6.9h-4.9z M41.3 114.1h3.4v5.1h-3.4z M591.2 252.6h5.3v3.9h-5.3z M607.7 31.4h3.6v5.8h-3.6z M334.7 297.9h2.5v4.3h-2.5z M161.5 0.6h2.6v2.5h-2.6z M280.4 129.8h5.0v3.4h-5.0z M533.5 154.8h7.9v2.8h-7.9z M388.1 148.1h4.2v6.3h-4.2z M159.2 263.3h4.1v3.7h-4.1z M467.3 169.0h3.7v2.4h-3.7z M726.0 110.8h2.7v5.3h-2.7z M404.3 98.3h4.0v6.2h-4.0z M257.4 125.2h7.7v3.8h-7.7z M305.5 48.6h6.0v5.3h-6.0z M339.2 121.8h3.4v5.9h-3.4z M347.5 249.6h4.2v5.7h-4.2z M21.9 65.9h7.8v5.4h-7.8z M513.5 149.1h4.8v3.0h-4.8z M131.5 193.6h6.2v3.3h-6.2z M489.9 40.8h5.7v2.9h-5.7z M387.2 94.2h5.3v2.7h-5.3z M367.4 185.0h2.8v3.5h-2.8z M515.8 163.9h5.7v5.9h-5.7z M434.3 66.7h4.7v6.2h-4.7z M430.7 225.9h4.2v4.2h-4.2z M737.0 246.6h5.9v2.5h-5.9z M465.0 10.0h7.6v6.9h-7.6z M553.3 80.3h7.1v2.9h-7.1z M629.2 156.2h2.1v6.5h-2.1z M334.4 249.1h6.1v4.7h-6.1z M655.4 60.9h7.4v3.7h-7.4z M19.8 101.0h2.4v2.4h-2.4z M474.4 36.2h3.0v3.5h-3.0z M211.8 276.0h7.4v6.4h-7.4z M752.3 132.1h6.8v3.4h-6.8z M704.1 243.2h6.4v3.1h-6.4z M69.5 277.5h5.3v5.1h-5.3z M655.1 43.1h6.2v4.3h-6.2z M597.4 136.8h3.2v6.8h-3.2z M213.7 223.5h7.0v3.2h-7.0z M528.2 118.8h3.3v3.1h-3.3z M725.1 110.5h5.1v4.5h-5.1z M20.2 226.1h6.5v6.4h-6.5z M271.3 62.9h4.1v5.7h-4.1z M500.1 121.8h5.1v2.8h-5.1z M698.1 141.6h5.0v5.9h-5.0z M150.4 216.7h4.1v6.1h-4.1z M71.7 82.8h5.8v4.4h-5.8z M286.4 173.6h3.3v4.2h-3.3z M1.4 239.6h3.5v6.2h-3.5z M419.6 180.5h5.8v2.6h-5.8z M590.7 87.6h7.2v5.9h-7.2z M515.4 244.6h4.6v5.4h-4.6z M724.1 56.7h2.6v4.1h-2.6z M387.3 44.7h3.3v6.3h-3.3z M294.9 44.7h3.1v4.9h-3.1z M144.4 142.5h5.2v4.2h-5.2z M382.8 251.0h2.1v6.6h-2.1z M151.4 11.5h6.6v4.8h-6.6z M408.8 65.3h6.7v3.5h-6.7z M552.5 68.5h5.4v5.2h-5.4z M282.5 144.0h2.4v5.2h-2.4z M525.4 46.0h5.3v5.7h-5.3z M76.8 251.7h7.2v2.3h-7.2z M188.8 25.2h3.5v2.4h-3.5z M371.9 75.1h3.8v4.3h-3.8z M282.4 236.5h6.3v2.6h-6.3z M169.8 2.5h4.0v2.5h-4.0z M529.8 234.1h8.0v3.0h-8.0z" fill="#c4ebbf"/>
<path d="M33.1 2.9 L118.0 2.9 L109.4 37.4 L89.2 40.3 L43.2 37.4 L34.5 21.6 Z" fill="#a8d29a"/>
<path d="M129.5 34.5 L169.8 34.5 L175.5 60.4 L135.3 60.4 Z" fill="#d2e8c4"/>
<path d="M0.0 74.8 L21.6 74.8 L28.8 93.5 L0.0 100.7 Z" fill="#c9e6b9"/>
<path d="M8.6 100.7 L57.6 100.7 L60.4 136.7 L8.6 136.7 Z" fill="#cfe6bf"/>
<path d="M37.4 100.7 L57.6 103.6 L59.0 129.5 L43.2 126.6 Z" fill="#b2d6a1"/>
<path d="M76.3 86.3 L109.4 86.3 L115.1 136.7 L80.6 136.7 Z" fill="#c8f0c4"/>
<path d="M143.9 119.4 L158.3 120.9 L155.4 129.5 L143.9 129.5 Z" fill="#e6d7e1"/>
<path d="M162.6 28.8 L190.1 21.6 L190.1 57.6 L172.7 43.2 Z" fill="#d3e3c6"/>
<path d="M190.0 0.0 L237.5 0.0 L230.3 17.3 L218.8 28.8 L198.6 28.8 L190.0 14.4 Z" fill="#b0d3a0"/>
<path d="M354.0 8.6 L380.1 0.0 L380.1 28.8 L356.9 24.5 Z" fill="#b5d8a5"/>
<path d="M274.9 76.3 L300.8 76.3 L303.7 103.6 L282.1 106.5 Z" fill="#c8f2c4"/>
<path d="M247.6 47.5 L276.3 43.2 L282.1 53.2 L250.4 57.6 Z" fill="#e6d7e1"/>
<path d="M341.1 40.3 L352.6 46.0 L351.2 54.7 L342.5 50.4 Z" fill="#b0d3a0"/>
<path d="M290.7 64.7 L312.3 60.4 L313.7 77.7 L295.0 74.8 Z" fill="#d9d3cc"/>
<path d="M237.5 133.8 L282.1 133.8 L299.4 129.5 L333.9 126.6 L333.9 150.1 L237.5 150.1 Z" fill="#bcdea8"/>
<path d="M0.0 223.4 L20.1 227.7 L15.8 250.7 L0.0 259.4 Z" fill="#c9e6b9"/>
<path d="M0.0 243.5 L11.5 247.8 L8.6 265.1 L0.0 266.5 Z" fill="#a9cf98"/>
<path d="M21.6 247.8 L60.4 239.2 L36.0 270.9 L14.4 286.7 Z" fill="#e6d7e1"/>
<path d="M74.8 219.1 L86.3 224.8 L83.5 236.3 L74.8 232.0 Z" fill="#c2e6b2"/>
<path d="M155.4 262.2 L162.6 263.7 L161.2 273.7 L154.0 272.3 Z" fill="#c2e6b2"/>
<path d="M37.4 201.8 L48.9 204.7 L46.0 213.3 L38.8 210.4 Z" fill="#c8f2c4"/>
<path d="M211.6 150.0 L333.9 150.0 L333.9 174.5 L305.1 178.8 L261.9 181.7 L233.2 178.8 L211.6 167.3 Z" fill="#bcdea8"/>
<path d="M254.7 150.0 L319.5 150.0 L319.5 167.3 L261.9 173.0 Z" fill="#abd398"/>
<path d="M211.6 175.9 L254.7 186.0 L261.9 193.2 L247.6 200.4 L218.8 193.2 Z" fill="#d7e4cf"/>
<path d="M312.3 272.3 L322.4 272.3 L319.5 288.1 L312.3 288.1 Z" fill="#aed39c"/>
<path d="M345.4 279.5 L362.7 276.6 L365.5 300.1 L345.4 300.1 Z" fill="#c8f2c4"/>
<path d="M331.0 233.5 L348.3 230.6 L345.4 265.1 L331.0 262.2 Z" fill="#c8f2c4"/>
<path d="M410.2 10.1 L443.3 10.1 L443.3 28.8 L427.5 33.1 L411.7 31.7 Z" fill="#c8f2c4"/>
<path d="M487.9 92.1 L523.9 89.2 L535.4 107.9 L523.9 115.1 L498.0 115.1 Z" fill="#b2d8a2"/>
<path d="M523.9 115.1 L542.6 122.3 L531.1 143.9 L522.4 132.4 Z" fill="#a9cf98"/>
<path d="M380.0 60.4 L394.4 60.4 L395.8 74.8 L380.0 77.7 Z" fill="#b3d4a2"/>
<path d="M531.1 53.2 L548.3 57.6 L544.0 63.3 L532.5 60.4 Z" fill="#bfe3b0"/>
<path d="M523.9 47.5 L538.3 47.5 L541.2 54.7 L525.3 54.7 Z" fill="#e6d7e1"/>
<path d="M572.9 20.1 L584.4 8.6 L613.2 23.0 L611.7 46.0 L595.9 40.3 L574.3 24.5 Z" fill="#b0d3a0"/>
<path d="M631.9 8.6 L644.8 10.1 L670.7 25.9 L662.1 37.4 L631.9 20.1 Z" fill="#b0d3a0"/>
<path d="M618.9 24.5 L656.3 40.3 L644.8 47.5 L627.6 54.7 L617.5 43.2 Z" fill="#c8f2c4"/>
<path d="M580.1 46.0 L604.5 48.9 L608.8 67.6 L598.8 73.4 L588.7 71.9 L581.5 60.4 Z" fill="#b9dba8"/>
<path d="M703.8 74.8 L713.9 71.9 L755.6 86.3 L760.1 150.1 L735.5 150.1 L713.9 112.2 L706.7 100.7 Z" fill="#d3e3c6"/>
<path d="M732.6 122.3 L757.1 118.0 L760.1 150.1 L735.5 150.1 Z" fill="#b8d6a6"/>
<path d="M728.3 0.0 L760.1 0.0 L760.1 8.6 L735.5 11.5 Z" fill="#b8d9a8"/>
<path d="M617.5 80.6 L636.2 80.6 L636.2 100.7 L618.9 100.7 Z" fill="#c8f2c4"/>
<path d="M404.5 285.3 L451.9 283.8 L454.8 300.1 L405.9 300.1 Z" fill="#aed39c"/>
<path d="M473.5 210.4 L486.5 207.6 L486.5 219.1 L476.4 219.1 Z" fill="#c8f2c4"/>
<path d="M498.0 239.2 L538.3 250.7 L545.5 259.4 L509.5 250.7 Z" fill="#c2e6b2"/>
<path d="M463.5 171.6 L473.5 170.1 L475.0 178.8 L464.9 180.2 Z" fill="#e6d7e1"/>
<path d="M380.0 250.7 L394.4 253.6 L394.4 259.4 L380.0 259.4 Z" fill="#aed39c"/>
<path d="M650.6 204.7 L696.6 178.8 L699.5 183.1 L663.5 210.4 Z" fill="#e6d7e1"/>
<path d="M659.2 256.5 L728.3 279.5 L728.3 300.1 L670.7 300.1 Z" fill="#e6d7e1"/>
<path d="M591.6 273.7 L627.6 282.4 L624.7 300.1 L591.6 300.1 Z" fill="#c2e2b2"/>
<path d="M670.7 221.9 L685.1 224.8 L692.3 250.7 L673.6 242.1 Z" fill="#c8eec0"/>
<path d="M749.9 224.8 L760.1 221.9 L760.1 232.0 L751.3 232.0 Z" fill="#b5b5b5"/>
<path d="M728.3 150.0 L760.1 150.0 L760.1 158.6 L742.7 158.6 Z" fill="#b8d9a8"/>
<path d="M699.5 230.6 L749.9 250.7 L760.1 259.4 L760.1 300.1 L728.3 300.1 L706.7 265.1 Z" fill="#d2e5c6"/>
<path d="M711.0 80.6 L754.2 92.1 L757.1 143.9 L739.8 143.9 L719.6 115.1 Z" stroke="#8ccc86" stroke-width="1.4" fill="none"/>
<path d="M0.0 93.5 L28.8 92.1 L50.4 86.3 L71.9 84.9 L86.3 83.5 L100.7 77.7 L118.0 74.8 L143.9 73.4 L190.1 74.8" stroke="#a9d3df" stroke-width="3" fill="none" stroke-linejoin="round" stroke-linecap="round"/>
<path d="M0.0 86.3 L17.3 82.0 L28.8 83.5" stroke="#a9d3df" stroke-width="2.5" fill="none" stroke-linejoin="round" stroke-linecap="round"/>
<path d="M156.8 66.2 L161.2 86.3 L166.9 115.1 L172.7 132.4 L190.1 138.1" stroke="#a9d3df" stroke-width="3" fill="none" stroke-linejoin="round" stroke-linecap="round"/>
<path d="M103.6 86.3 L109.4 115.1 L119.4 126.6 L129.5 136.7 L158.3 138.1" stroke="#a9d3df" stroke-width="2.5" fill="none" stroke-linejoin="round" stroke-linecap="round"/>
<path d="M190.0 28.8 L204.4 38.8 L233.2 47.5 L261.9 46.0 L283.5 47.5 L293.6 51.8 L308.0 56.1 L319.5 69.1 L333.9 100.7 L326.7 118.0 L341.1 125.2 L348.3 135.3" stroke="#a9d3df" stroke-width="3.5" fill="none" stroke-linejoin="round" stroke-linecap="round"/>
<path d="M207.3 50.4 L236.0 56.1" stroke="#a9d3df" stroke-width="3" fill="none" stroke-linejoin="round" stroke-linecap="round"/>
<path d="M211.6 59.0 L227.4 61.9" stroke="#a9d3df" stroke-width="3" fill="none" stroke-linejoin="round" stroke-linecap="round"/>
<path d="M190.0 50.4 L207.3 41.7 L198.6 28.8" stroke="#a9d3df" stroke-width="4" fill="none" stroke-linejoin="round" stroke-linecap="round"/>
<path d="M190.0 112.2 L207.3 126.6 L211.6 143.9" stroke="#a9d3df" stroke-width="3" fill="none" stroke-linejoin="round" stroke-linecap="round"/>
<path d="M233.2 129.5 L250.4 122.3 L279.2 123.7 L297.9 115.1" stroke="#a9d3df" stroke-width="3" fill="none" stroke-linejoin="round" stroke-linecap="round"/>
<path d="M80.6 193.2 L89.2 183.1 L99.3 184.5 L92.1 201.8 L86.3 213.3" stroke="#a9d3df" stroke-width="2.5" fill="none" stroke-linejoin="round" stroke-linecap="round"/>
<path d="M51.8 262.2 L64.7 253.6 L74.8 256.5" stroke="#a9d3df" stroke-width="3" fill="none" stroke-linejoin="round" stroke-linecap="round"/>
<path d="M36.0 300.1 L50.4 291.0 L64.7 293.9" stroke="#a9d3df" stroke-width="3" fill="none" stroke-linejoin="round" stroke-linecap="round"/>
<path d="M211.6 171.6 L233.2 181.7 L254.7 193.2 L270.6 200.4" stroke="#a9d3df" stroke-width="3" fill="none" stroke-linejoin="round" stroke-linecap="round"/>
<path d="M47.5 18.7 L71.9 20.1 L70.5 24.5 L48.9 24.5 Z" fill="#a9d3df"/>
<path d="M0.0 65.5 L20.1 67.6" stroke="#fbfbfa" stroke-width="1.7" fill="none" stroke-linejoin="round"/>
<path d="M151.1 4.3 L158.3 21.6 L165.5 36.0 L190.1 47.5" stroke="#fbfbfa" stroke-width="1.7" fill="none" stroke-linejoin="round"/>
<path d="M120.9 28.8 L158.3 43.2" stroke="#fbfbfa" stroke-width="1.7" fill="none" stroke-linejoin="round"/>
<path d="M138.1 79.1 L138.1 150.1" stroke="#fbfbfa" stroke-width="1.7" fill="none" stroke-linejoin="round"/>
<path d="M162.6 86.3 L189.9 97.8" stroke="#fbfbfa" stroke-width="1.7" fill="none" stroke-linejoin="round"/>
<path d="M169.8 136.7 L190.1 126.6" stroke="#fbfbfa" stroke-width="1.7" fill="none" stroke-linejoin="round"/>
<path d="M240.4 0.0 L250.4 11.5" stroke="#fbfbfa" stroke-width="1.7" fill="none" stroke-linejoin="round"/>
<path d="M214.5 21.6 L237.5 41.7 L256.2 44.6" stroke="#fbfbfa" stroke-width="1.7" fill="none" stroke-linejoin="round"/>
<path d="M267.7 77.7 L285.0 109.4" stroke="#fbfbfa" stroke-width="1.7" fill="none" stroke-linejoin="round"/>
<path d="M325.3 30.2 L348.3 25.9 L380.1 12.9" stroke="#fbfbfa" stroke-width="1.7" fill="none" stroke-linejoin="round"/>
<path d="M338.2 48.9 L359.8 28.8 L371.3 61.9" stroke="#fbfbfa" stroke-width="1.7" fill="none" stroke-linejoin="round"/>
<path d="M190.0 97.8 L204.4 100.7" stroke="#fbfbfa" stroke-width="1.7" fill="none" stroke-linejoin="round"/>
<path d="M259.1 122.3 L254.7 150.1" stroke="#fbfbfa" stroke-width="1.7" fill="none" stroke-linejoin="round"/>
<path d="M283.5 118.0 L282.1 150.1" stroke="#fbfbfa" stroke-width="1.7" fill="none" stroke-linejoin="round"/>
<path d="M348.3 93.5 L352.6 150.1" stroke="#fbfbfa" stroke-width="1.7" fill="none" stroke-linejoin="round"/>
<path d="M305.1 118.0 L333.9 115.1 L380.1 118.0" stroke="#fbfbfa" stroke-width="1.7" fill="none" stroke-linejoin="round"/>
<path d="M14.4 158.6 L67.6 170.1" stroke="#fbfbfa" stroke-width="1.7" fill="none" stroke-linejoin="round"/>
<path d="M112.2 150.0 L100.7 197.5 L109.4 210.4 L136.7 300.1" stroke="#fbfbfa" stroke-width="1.7" fill="none" stroke-linejoin="round"/>
<path d="M76.3 300.1 L136.7 247.8 L190.1 227.7" stroke="#fbfbfa" stroke-width="1.7" fill="none" stroke-linejoin="round"/>
<path d="M103.6 247.8 L151.1 282.4" stroke="#fbfbfa" stroke-width="1.7" fill="none" stroke-linejoin="round"/>
<path d="M162.6 150.0 L159.7 224.8" stroke="#fbfbfa" stroke-width="1.7" fill="none" stroke-linejoin="round"/>
<path d="M276.3 207.6 L309.4 216.2" stroke="#fbfbfa" stroke-width="1.7" fill="none" stroke-linejoin="round"/>
<path d="M276.3 221.9 L302.2 232.0" stroke="#fbfbfa" stroke-width="1.7" fill="none" stroke-linejoin="round"/>
<path d="M190.0 272.3 L208.7 275.2" stroke="#fbfbfa" stroke-width="1.7" fill="none" stroke-linejoin="round"/>
<path d="M345.4 221.9 L369.9 207.6" stroke="#fbfbfa" stroke-width="1.7" fill="none" stroke-linejoin="round"/>
<path d="M348.3 250.7 L351.2 300.1" stroke="#fbfbfa" stroke-width="1.7" fill="none" stroke-linejoin="round"/>
<path d="M380.0 126.6 L401.6 125.2 L413.1 133.8 L423.2 150.1" stroke="#a9d3df" stroke-width="3" fill="none" stroke-linejoin="round" stroke-linecap="round"/>
<path d="M380.0 135.3 L398.7 138.1" stroke="#a9d3df" stroke-width="2.5" fill="none" stroke-linejoin="round" stroke-linecap="round"/>
<path d="M408.8 150.0 L434.7 161.5 L460.6 164.4 L480.7 174.5 L502.3 190.3 L523.9 207.6 L545.5 226.3 L570.1 239.2" stroke="#a9d3df" stroke-width="6" fill="none" stroke-linejoin="round" stroke-linecap="round"/>
<path d="M401.6 243.5 L430.4 250.7 L466.3 250.7 L495.1 263.7 L523.9 276.6 L535.4 269.4 L552.7 250.7 L570.1 239.2" stroke="#a9d3df" stroke-width="3" fill="none" stroke-linejoin="round" stroke-linecap="round"/>
<path d="M570.0 233.5 L598.8 243.5 L611.7 259.4 L627.6 279.5" stroke="#a9d3df" stroke-width="7" fill="none" stroke-linejoin="round" stroke-linecap="round"/>
<path d="M613.2 230.6 L631.9 232.0 L644.8 250.7 L656.3 272.3 L673.6 282.4 L673.6 300.1 L634.7 300.1 L617.5 268.0 L607.4 247.8 Z" fill="#a9d3df"/>
<path d="M380.0 18.7 L394.4 11.5 L451.9 2.9 L463.5 5.8 L492.2 20.1 L526.8 36.0 L570.1 54.7" stroke="#fbfbfa" stroke-width="1.7" fill="none" stroke-linejoin="round"/>
<path d="M483.6 97.8 L521.0 89.2 L570.1 36.0" stroke="#fbfbfa" stroke-width="1.7" fill="none" stroke-linejoin="round"/>
<path d="M483.6 97.8 L499.4 112.2 L498.0 150.1" stroke="#fbfbfa" stroke-width="1.7" fill="none" stroke-linejoin="round"/>
<path d="M659.2 43.2 L677.9 57.6 L677.9 66.2" stroke="#fbfbfa" stroke-width="1.7" fill="none" stroke-linejoin="round"/>
<path d="M659.2 69.1 L659.2 150.1" stroke="#fbfbfa" stroke-width="1.7" fill="none" stroke-linejoin="round"/>
<path d="M673.6 28.8 L699.5 48.9 L700.9 103.6" stroke="#fbfbfa" stroke-width="1.7" fill="none" stroke-linejoin="round"/>
<path d="M703.8 4.3 L713.9 8.6 L748.4 10.1 L749.9 40.3 L735.5 46.0 L725.4 11.5" stroke="#fbfbfa" stroke-width="1.7" fill="none" stroke-linejoin="round"/>
<path d="M644.8 120.9 L699.5 122.3" stroke="#fbfbfa" stroke-width="1.7" fill="none" stroke-linejoin="round"/>
<path d="M413.1 154.3 L444.7 171.6 L466.3 203.2 L480.7 207.6 L492.2 198.9" stroke="#fbfbfa" stroke-width="1.7" fill="none" stroke-linejoin="round"/>
<path d="M444.7 214.7 L523.9 255.0 L502.3 300.1" stroke="#fbfbfa" stroke-width="1.7" fill="none" stroke-linejoin="round"/>
<path d="M475.0 207.6 L464.9 232.0" stroke="#fbfbfa" stroke-width="1.7" fill="none" stroke-linejoin="round"/>
<path d="M506.6 150.0 L502.3 175.9" stroke="#fbfbfa" stroke-width="1.7" fill="none" stroke-linejoin="round"/>
<path d="M380.0 158.6 L413.1 154.3" stroke="#fbfbfa" stroke-width="1.7" fill="none" stroke-linejoin="round"/>
<path d="M423.2 250.7 L413.1 279.5" stroke="#fbfbfa" stroke-width="1.7" fill="none" stroke-linejoin="round"/>
<path d="M692.3 227.7 L742.7 207.6 L760.1 203.2" stroke="#fbfbfa" stroke-width="1.7" fill="none" stroke-linejoin="round"/>
<path d="M692.3 230.6 L742.7 250.7 L760.1 262.2" stroke="#fbfbfa" stroke-width="1.7" fill="none" stroke-linejoin="round"/>
<path d="M695.2 183.1 L685.1 227.7" stroke="#fbfbfa" stroke-width="1.7" fill="none" stroke-linejoin="round"/>
<path d="M656.3 150.0 L656.3 168.7" stroke="#fbfbfa" stroke-width="1.7" fill="none" stroke-linejoin="round"/>
<path d="M675.0 154.3 L696.6 155.8 L721.1 174.5 L711.0 187.4 L735.5 198.9 L742.7 207.6" stroke="#fbfbfa" stroke-width="1.7" fill="none" stroke-linejoin="round"/>
<path d="M604.5 247.8 L639.1 265.1 L650.6 282.4" stroke="#fbfbfa" stroke-width="1.7" fill="none" stroke-linejoin="round"/>
<path d="M570.0 224.8 L584.4 190.3" stroke="#fbfbfa" stroke-width="1.7" fill="none" stroke-linejoin="round"/>
<path d="M0.0 100.7 L43.2 95.0 L79.1 92.1 L129.5 86.3 L190.1 70.5" stroke="#7a7a7a" stroke-width="2.0" fill="none" stroke-linejoin="round"/>
<path d="M38.8 54.7 L86.3 56.1 L115.1 60.4 L126.6 79.1 L135.3 106.5" stroke="#7a7a7a" stroke-width="1.4" fill="none" stroke-linejoin="round"/>
<path d="M61.9 109.4 L71.9 97.8 L86.3 92.1" stroke="#7a7a7a" stroke-width="1.4" fill="none" stroke-linejoin="round"/>
<path d="M70.5 150.1 L69.1 126.6 L71.9 100.7 L77.7 93.5" stroke="#7a7a7a" stroke-width="1.4" fill="none" stroke-linejoin="round"/>
<path d="M190.0 70.5 L244.7 59.0 L282.1 53.2 L290.7 48.9 L319.5 25.9 L348.3 4.3 L359.8 0.0" stroke="#7a7a7a" stroke-width="2.2" fill="none" stroke-linejoin="round"/>
<path d="M292.2 47.5 L293.6 61.9 L313.7 92.1 L319.5 109.4 L326.7 123.7 L331.0 150.1" stroke="#7a7a7a" stroke-width="2.6" fill="none" stroke-linejoin="round"/>
<path d="M296.5 119.4 L333.9 97.8 L380.1 76.3" stroke="#7a7a7a" stroke-width="1.6" fill="none" stroke-linejoin="round"/>
<path d="M233.2 150.1 L247.6 136.7 L283.5 136.7 L305.1 125.2 L319.5 110.8 L333.9 110.8 L348.3 126.6 L380.1 138.1" stroke="#7a7a7a" stroke-width="1.6" fill="none" stroke-linejoin="round"/>
<path d="M240.4 54.7 L240.4 100.7" stroke="#7a7a7a" stroke-width="1.8" fill="none" stroke-linejoin="round"/>
<path d="M349.7 20.1 L355.5 57.6 L374.2 86.3 L377.1 150.1" stroke="#7a7a7a" stroke-width="1.4" fill="none" stroke-linejoin="round"/>
<path d="M0.0 190.3 L14.4 204.7 L23.0 230.6 L37.4 239.2 L57.6 242.1 L86.3 227.7 L129.5 210.4 L190.1 207.6" stroke="#7a7a7a" stroke-width="2.0" fill="none" stroke-linejoin="round"/>
<path d="M4.3 288.1 L28.8 260.8 L60.4 239.2 L86.3 227.7" stroke="#7a7a7a" stroke-width="1.8" fill="none" stroke-linejoin="round"/>
<path d="M69.1 219.1 L80.6 236.3 L100.7 250.7 L129.5 286.7 L136.7 300.1" stroke="#7a7a7a" stroke-width="1.4" fill="none" stroke-linejoin="round"/>
<path d="M135.3 161.5 L143.9 221.9" stroke="#7a7a7a" stroke-width="1.6" fill="none" stroke-linejoin="round"/>
<path d="M190.0 209.0 L211.6 204.7 L226.0 186.0 L240.4 150.0" stroke="#7a7a7a" stroke-width="2.0" fill="none" stroke-linejoin="round"/>
<path d="M264.8 230.6 L312.3 246.4 L333.9 246.4 L380.1 240.6" stroke="#7a7a7a" stroke-width="2.0" fill="none" stroke-linejoin="round"/>
<path d="M333.9 150.0 L339.6 178.8 L333.9 221.9 L331.0 265.1 L326.7 300.1" stroke="#7a7a7a" stroke-width="2.8" fill="none" stroke-linejoin="round"/>
<path d="M348.3 204.7 L319.5 272.3 L297.9 300.1" stroke="#7a7a7a" stroke-width="1.4" fill="none" stroke-linejoin="round"/>
<path d="M290.7 213.3 L273.5 236.3 L247.6 250.7 L238.9 279.5 L236.0 300.1" stroke="#7a7a7a" stroke-width="1.6" fill="none" stroke-linejoin="round"/>
<path d="M466.3 2.9 L446.2 36.0 L416.0 87.8 L420.3 109.4 L427.5 115.1 L440.4 100.7" stroke="#7a7a7a" stroke-width="1.4" fill="none" stroke-linejoin="round"/>
<path d="M450.5 0.0 L446.9 48.9" stroke="#7a7a7a" stroke-width="2.6" fill="none" stroke-linejoin="round"/>
<path d="M380.0 77.7 L408.8 74.8 L426.0 67.6" stroke="#7a7a7a" stroke-width="1.4" fill="none" stroke-linejoin="round"/>
<path d="M380.0 107.9 L401.6 113.7 L423.2 122.3 L444.7 129.5 L454.8 150.1" stroke="#7a7a7a" stroke-width="1.6" fill="none" stroke-linejoin="round"/>
<path d="M473.5 0.0 L523.9 36.0 L552.7 60.4 L570.1 89.2" stroke="#7a7a7a" stroke-width="1.8" fill="none" stroke-linejoin="round"/>
<path d="M380.0 135.3 L408.8 125.2 L423.2 119.4 L440.4 123.7 L460.6 120.9 L466.3 115.1" stroke="#7a7a7a" stroke-width="1.4" fill="none" stroke-linejoin="round"/>
<path d="M447.6 100.7 L466.3 115.1 L480.7 119.4" stroke="#7a7a7a" stroke-width="1.2" fill="none" stroke-linejoin="round"/>
<path d="M570.0 122.3 L641.9 103.6 L699.5 105.0 L721.1 107.9 L760.1 106.5" stroke="#7a7a7a" stroke-width="1.4" fill="none" stroke-linejoin="round"/>
<path d="M588.7 89.2 L595.9 74.8 L624.7 59.0 L633.3 54.7 L653.5 67.6" stroke="#7a7a7a" stroke-width="1.4" fill="none" stroke-linejoin="round"/>
<path d="M570.0 138.1 L584.4 133.8 L617.5 132.4 L644.8 132.4" stroke="#7a7a7a" stroke-width="1.4" fill="none" stroke-linejoin="round"/>
<path d="M575.8 97.8 L582.9 109.4 L606.0 118.0 L618.9 129.5 L627.6 150.1" stroke="#7a7a7a" stroke-width="1.8" fill="none" stroke-linejoin="round"/>
<path d="M700.9 105.0 L700.9 150.1" stroke="#7a7a7a" stroke-width="1.4" fill="none" stroke-linejoin="round"/>
<path d="M380.0 240.6 L408.8 239.2 L459.1 236.3 L495.1 234.9 L538.3 226.3 L555.5 207.6 L570.1 150.0" stroke="#7a7a7a" stroke-width="2.0" fill="none" stroke-linejoin="round"/>
<path d="M460.6 150.0 L466.3 161.5 L483.6 171.6 L509.5 178.8 L538.3 190.3 L570.1 201.8" stroke="#7a7a7a" stroke-width="2.0" fill="none" stroke-linejoin="round"/>
<path d="M380.0 167.3 L394.4 167.3 L414.5 174.5 L427.5 177.3" stroke="#7a7a7a" stroke-width="1.4" fill="none" stroke-linejoin="round"/>
<path d="M384.3 200.4 L385.8 236.3" stroke="#7a7a7a" stroke-width="2.0" fill="none" stroke-linejoin="round"/>
<path d="M624.7 150.0 L631.9 178.8 L633.3 204.7 L613.2 221.9 L603.1 239.2 L587.3 279.5 L581.5 300.1" stroke="#7a7a7a" stroke-width="1.8" fill="none" stroke-linejoin="round"/>
<path d="M570.0 204.7 L598.8 210.4 L613.2 216.2 L641.9 219.1 L653.5 217.6 L692.3 183.1 L713.9 167.3 L760.1 162.9" stroke="#7a7a7a" stroke-width="2.0" fill="none" stroke-linejoin="round"/>
<path d="M633.3 197.5 L644.8 197.5 L653.5 207.6 L653.5 219.1" stroke="#7a7a7a" stroke-width="1.4" fill="none" stroke-linejoin="round"/>
<path d="M613.2 217.6 L656.3 233.5 L685.1 250.7 L713.9 269.4 L728.3 282.4" stroke="#7a7a7a" stroke-width="2.2" fill="none" stroke-linejoin="round"/>
<path d="M760.1 262.2 L728.3 273.7 L713.9 269.4" stroke="#7a7a7a" stroke-width="1.4" fill="none" stroke-linejoin="round"/>
<path d="M696.6 150.0 L696.6 174.5" stroke="#7a7a7a" stroke-width="1.4" fill="none" stroke-linejoin="round"/>
<path d="M570.0 181.7 L601.7 193.2 L617.5 168.7" stroke="#7a7a7a" stroke-width="1.2" fill="none" stroke-linejoin="round"/>
<path d="M0.0 0.0 L8.6 28.8 L18.7 54.7 L24.5 80.6 L34.5 92.1 L43.2 97.8 L60.4 106.5 L61.9 129.5 L63.3 150.1" stroke="#d8d98f" stroke-width="4.0" fill="none" stroke-linejoin="round" stroke-linecap="round"/>
<path d="M0.0 0.0 L8.6 28.8 L18.7 54.7 L24.5 80.6 L34.5 92.1 L43.2 97.8 L60.4 106.5 L61.9 129.5 L63.3 150.1" stroke="#f5f7b8" stroke-width="2.8" fill="none" stroke-linejoin="round" stroke-linecap="round"/>
<path d="M0.0 2.2 L93.5 2.2 L171.2 4.3 L190.1 24.5" stroke="#d8d98f" stroke-width="4.0" fill="none" stroke-linejoin="round" stroke-linecap="round"/>
<path d="M0.0 2.2 L93.5 2.2 L171.2 4.3 L190.1 24.5" stroke="#f5f7b8" stroke-width="2.8" fill="none" stroke-linejoin="round" stroke-linecap="round"/>
<path d="M0.0 53.2 L33.1 57.6 L63.3 69.1 L86.3 70.5 L103.6 69.1 L109.4 84.9 L118.0 112.2 L122.3 129.5 L118.0 150.1" stroke="#d8d98f" stroke-width="4.0" fill="none" stroke-linejoin="round" stroke-linecap="round"/>
<path d="M0.0 53.2 L33.1 57.6 L63.3 69.1 L86.3 70.5 L103.6 69.1 L109.4 84.9 L118.0 112.2 L122.3 129.5 L118.0 150.1" stroke="#f5f7b8" stroke-width="2.8" fill="none" stroke-linejoin="round" stroke-linecap="round"/>
<path d="M112.2 92.1 L143.9 93.5 L172.7 82.0 L190.1 77.7" stroke="#d8d98f" stroke-width="4.0" fill="none" stroke-linejoin="round" stroke-linecap="round"/>
<path d="M112.2 92.1 L143.9 93.5 L172.7 82.0 L190.1 77.7" stroke="#f5f7b8" stroke-width="2.8" fill="none" stroke-linejoin="round" stroke-linecap="round"/>
<path d="M0.0 125.2 L28.8 132.4 L64.7 142.4 L89.2 141.0 L118.0 138.1 L143.9 136.7 L190.1 129.5" stroke="#d8d98f" stroke-width="4.0" fill="none" stroke-linejoin="round" stroke-linecap="round"/>
<path d="M0.0 125.2 L28.8 132.4 L64.7 142.4 L89.2 141.0 L118.0 138.1 L143.9 136.7 L190.1 129.5" stroke="#f5f7b8" stroke-width="2.8" fill="none" stroke-linejoin="round" stroke-linecap="round"/>
<path d="M115.1 106.5 L190.1 109.4" stroke="#d8d98f" stroke-width="4.0" fill="none" stroke-linejoin="round" stroke-linecap="round"/>
<path d="M115.1 106.5 L190.1 109.4" stroke="#f5f7b8" stroke-width="2.8" fill="none" stroke-linejoin="round" stroke-linecap="round"/>
<path d="M190.0 27.3 L198.6 38.8 L197.2 48.9 L202.9 60.4 L204.4 74.8 L202.9 100.7 L204.4 119.4 L194.3 150.1" stroke="#d8d98f" stroke-width="4.0" fill="none" stroke-linejoin="round" stroke-linecap="round"/>
<path d="M190.0 27.3 L198.6 38.8 L197.2 48.9 L202.9 60.4 L204.4 74.8 L202.9 100.7 L204.4 119.4 L194.3 150.1" stroke="#f5f7b8" stroke-width="2.8" fill="none" stroke-linejoin="round" stroke-linecap="round"/>
<path d="M190.0 77.7 L204.4 73.4 L244.7 61.9 L283.5 54.7 L290.7 54.7 L302.2 47.5 L333.9 0.0" stroke="#d8d98f" stroke-width="4.0" fill="none" stroke-linejoin="round" stroke-linecap="round"/>
<path d="M190.0 77.7 L204.4 73.4 L244.7 61.9 L283.5 54.7 L290.7 54.7 L302.2 47.5 L333.9 0.0" stroke="#f5f7b8" stroke-width="2.8" fill="none" stroke-linejoin="round" stroke-linecap="round"/>
<path d="M249.0 11.5 L264.8 28.8 L251.9 43.2 L246.1 57.6 L246.1 100.7 L244.7 115.1 L237.5 143.9 L234.6 150.1" stroke="#d8d98f" stroke-width="4.0" fill="none" stroke-linejoin="round" stroke-linecap="round"/>
<path d="M249.0 11.5 L264.8 28.8 L251.9 43.2 L246.1 57.6 L246.1 100.7 L244.7 115.1 L237.5 143.9 L234.6 150.1" stroke="#f5f7b8" stroke-width="2.8" fill="none" stroke-linejoin="round" stroke-linecap="round"/>
<path d="M264.8 28.8 L290.7 10.1 L302.2 0.0" stroke="#d8d98f" stroke-width="4.0" fill="none" stroke-linejoin="round" stroke-linecap="round"/>
<path d="M264.8 28.8 L290.7 10.1 L302.2 0.0" stroke="#f5f7b8" stroke-width="2.8" fill="none" stroke-linejoin="round" stroke-linecap="round"/>
<path d="M290.7 53.2 L276.3 67.6 L257.6 83.5" stroke="#d8d98f" stroke-width="4.0" fill="none" stroke-linejoin="round" stroke-linecap="round"/>
<path d="M290.7 53.2 L276.3 67.6 L257.6 83.5" stroke="#f5f7b8" stroke-width="2.8" fill="none" stroke-linejoin="round" stroke-linecap="round"/>
<path d="M190.0 106.5 L204.4 119.4 L233.2 142.4 L244.7 150.1" stroke="#d8d98f" stroke-width="4.0" fill="none" stroke-linejoin="round" stroke-linecap="round"/>
<path d="M190.0 106.5 L204.4 119.4 L233.2 142.4 L244.7 150.1" stroke="#f5f7b8" stroke-width="2.8" fill="none" stroke-linejoin="round" stroke-linecap="round"/>
<path d="M190.0 126.6 L244.7 106.5" stroke="#d8d98f" stroke-width="4.0" fill="none" stroke-linejoin="round" stroke-linecap="round"/>
<path d="M190.0 126.6 L244.7 106.5" stroke="#f5f7b8" stroke-width="2.8" fill="none" stroke-linejoin="round" stroke-linecap="round"/>
<path d="M202.9 100.7 L244.7 106.5 L279.2 103.6 L287.8 112.2 L295.0 119.4" stroke="#d8d98f" stroke-width="4.0" fill="none" stroke-linejoin="round" stroke-linecap="round"/>
<path d="M202.9 100.7 L244.7 106.5 L279.2 103.6 L287.8 112.2 L295.0 119.4" stroke="#f5f7b8" stroke-width="2.8" fill="none" stroke-linejoin="round" stroke-linecap="round"/>
<path d="M323.8 38.8 L345.4 63.3 L359.8 82.0 L380.1 100.7" stroke="#d8d98f" stroke-width="4.0" fill="none" stroke-linejoin="round" stroke-linecap="round"/>
<path d="M323.8 38.8 L345.4 63.3 L359.8 82.0 L380.1 100.7" stroke="#f5f7b8" stroke-width="2.8" fill="none" stroke-linejoin="round" stroke-linecap="round"/>
<path d="M296.5 54.7 L312.3 38.8 L323.8 33.1" stroke="#d8d98f" stroke-width="4.0" fill="none" stroke-linejoin="round" stroke-linecap="round"/>
<path d="M296.5 54.7 L312.3 38.8 L323.8 33.1" stroke="#f5f7b8" stroke-width="2.8" fill="none" stroke-linejoin="round" stroke-linecap="round"/>
<path d="M359.8 82.0 L380.1 67.6" stroke="#d8d98f" stroke-width="4.0" fill="none" stroke-linejoin="round" stroke-linecap="round"/>
<path d="M359.8 82.0 L380.1 67.6" stroke="#f5f7b8" stroke-width="2.8" fill="none" stroke-linejoin="round" stroke-linecap="round"/>
<path d="M374.2 0.0 L380.1 8.6" stroke="#d8d98f" stroke-width="4.0" fill="none" stroke-linejoin="round" stroke-linecap="round"/>
<path d="M374.2 0.0 L380.1 8.6" stroke="#f5f7b8" stroke-width="2.8" fill="none" stroke-linejoin="round" stroke-linecap="round"/>
<path d="M0.0 151.4 L37.4 183.1 L61.9 200.4 L74.8 230.6 L80.6 257.9 L76.3 300.1" stroke="#d8d98f" stroke-width="4.0" fill="none" stroke-linejoin="round" stroke-linecap="round"/>
<path d="M0.0 151.4 L37.4 183.1 L61.9 200.4 L74.8 230.6 L80.6 257.9 L76.3 300.1" stroke="#f5f7b8" stroke-width="2.8" fill="none" stroke-linejoin="round" stroke-linecap="round"/>
<path d="M63.3 150.0 L67.6 181.7 L61.9 200.4 L50.4 224.8 L40.3 230.6 L34.5 242.1" stroke="#d8d98f" stroke-width="4.0" fill="none" stroke-linejoin="round" stroke-linecap="round"/>
<path d="M63.3 150.0 L67.6 181.7 L61.9 200.4 L50.4 224.8 L40.3 230.6 L34.5 242.1" stroke="#f5f7b8" stroke-width="2.8" fill="none" stroke-linejoin="round" stroke-linecap="round"/>
<path d="M0.0 196.0 L25.9 219.1 L34.5 233.5 L46.0 236.3 L57.6 230.6" stroke="#d8d98f" stroke-width="4.0" fill="none" stroke-linejoin="round" stroke-linecap="round"/>
<path d="M0.0 196.0 L25.9 219.1 L34.5 233.5 L46.0 236.3 L57.6 230.6" stroke="#f5f7b8" stroke-width="2.8" fill="none" stroke-linejoin="round" stroke-linecap="round"/>
<path d="M61.9 200.4 L100.7 198.9 L143.9 200.4 L190.1 204.7" stroke="#d8d98f" stroke-width="4.0" fill="none" stroke-linejoin="round" stroke-linecap="round"/>
<path d="M61.9 200.4 L100.7 198.9 L143.9 200.4 L190.1 204.7" stroke="#f5f7b8" stroke-width="2.8" fill="none" stroke-linejoin="round" stroke-linecap="round"/>
<path d="M122.3 150.0 L126.6 178.8 L129.5 200.4 L138.1 230.6 L146.8 257.9 L151.1 279.5 L143.9 300.1" stroke="#d8d98f" stroke-width="4.0" fill="none" stroke-linejoin="round" stroke-linecap="round"/>
<path d="M122.3 150.0 L126.6 178.8 L129.5 200.4 L138.1 230.6 L146.8 257.9 L151.1 279.5 L143.9 300.1" stroke="#f5f7b8" stroke-width="2.8" fill="none" stroke-linejoin="round" stroke-linecap="round"/>
<path d="M86.3 250.7 L136.7 236.3 L190.1 219.1" stroke="#d8d98f" stroke-width="4.0" fill="none" stroke-linejoin="round" stroke-linecap="round"/>
<path d="M86.3 250.7 L136.7 236.3 L190.1 219.1" stroke="#f5f7b8" stroke-width="2.8" fill="none" stroke-linejoin="round" stroke-linecap="round"/>
<path d="M28.8 300.1 L43.2 279.5 L57.6 275.2 L71.9 259.4 L77.7 250.7" stroke="#d8d98f" stroke-width="4.0" fill="none" stroke-linejoin="round" stroke-linecap="round"/>
<path d="M28.8 300.1 L43.2 279.5 L57.6 275.2 L71.9 259.4 L77.7 250.7" stroke="#f5f7b8" stroke-width="2.8" fill="none" stroke-linejoin="round" stroke-linecap="round"/>
<path d="M115.1 300.1 L143.9 286.7 L190.1 265.1" stroke="#d8d98f" stroke-width="4.0" fill="none" stroke-linejoin="round" stroke-linecap="round"/>
<path d="M115.1 300.1 L143.9 286.7 L190.1 265.1" stroke="#f5f7b8" stroke-width="2.8" fill="none" stroke-linejoin="round" stroke-linecap="round"/>
<path d="M178.4 150.0 L190.1 164.4" stroke="#d8d98f" stroke-width="4.0" fill="none" stroke-linejoin="round" stroke-linecap="round"/>
<path d="M178.4 150.0 L190.1 164.4" stroke="#f5f7b8" stroke-width="2.8" fill="none" stroke-linejoin="round" stroke-linecap="round"/>
<path d="M190.0 178.8 L210.1 196.0 L213.0 207.6 L210.1 250.7 L210.1 300.1" stroke="#d8d98f" stroke-width="4.0" fill="none" stroke-linejoin="round" stroke-linecap="round"/>
<path d="M190.0 178.8 L210.1 196.0 L213.0 207.6 L210.1 250.7 L210.1 300.1" stroke="#f5f7b8" stroke-width="2.8" fill="none" stroke-linejoin="round" stroke-linecap="round"/>
<path d="M190.0 203.2 L247.6 209.0 L261.9 217.6 L276.3 227.7 L305.1 236.3 L331.0 243.5 L380.1 250.7" stroke="#d8d98f" stroke-width="4.0" fill="none" stroke-linejoin="round" stroke-linecap="round"/>
<path d="M190.0 203.2 L247.6 209.0 L261.9 217.6 L276.3 227.7 L305.1 236.3 L331.0 243.5 L380.1 250.7" stroke="#f5f7b8" stroke-width="2.8" fill="none" stroke-linejoin="round" stroke-linecap="round"/>
<path d="M190.0 150.0 L198.6 157.2" stroke="#d8d98f" stroke-width="4.0" fill="none" stroke-linejoin="round" stroke-linecap="round"/>
<path d="M190.0 150.0 L198.6 157.2" stroke="#f5f7b8" stroke-width="2.8" fill="none" stroke-linejoin="round" stroke-linecap="round"/>
<path d="M247.6 150.0 L261.9 158.6" stroke="#d8d98f" stroke-width="4.0" fill="none" stroke-linejoin="round" stroke-linecap="round"/>
<path d="M247.6 150.0 L261.9 158.6" stroke="#f5f7b8" stroke-width="2.8" fill="none" stroke-linejoin="round" stroke-linecap="round"/>
<path d="M273.5 197.5 L290.7 196.0 L319.5 203.2 L333.9 207.6" stroke="#d8d98f" stroke-width="4.0" fill="none" stroke-linejoin="round" stroke-linecap="round"/>
<path d="M273.5 197.5 L290.7 196.0 L319.5 203.2 L333.9 207.6" stroke="#f5f7b8" stroke-width="2.8" fill="none" stroke-linejoin="round" stroke-linecap="round"/>
<path d="M190.0 220.5 L218.8 230.6 L247.6 230.6 L276.3 233.5" stroke="#d8d98f" stroke-width="4.0" fill="none" stroke-linejoin="round" stroke-linecap="round"/>
<path d="M190.0 220.5 L218.8 230.6 L247.6 230.6 L276.3 233.5" stroke="#f5f7b8" stroke-width="2.8" fill="none" stroke-linejoin="round" stroke-linecap="round"/>
<path d="M190.0 260.8 L233.2 255.0 L276.3 256.5 L305.1 262.2 L341.1 270.9 L362.7 263.7 L380.1 265.1" stroke="#d8d98f" stroke-width="4.0" fill="none" stroke-linejoin="round" stroke-linecap="round"/>
<path d="M190.0 260.8 L233.2 255.0 L276.3 256.5 L305.1 262.2 L341.1 270.9 L362.7 263.7 L380.1 265.1" stroke="#f5f7b8" stroke-width="2.8" fill="none" stroke-linejoin="round" stroke-linecap="round"/>
<path d="M210.1 249.3 L226.0 233.5 L247.6 224.8" stroke="#d8d98f" stroke-width="4.0" fill="none" stroke-linejoin="round" stroke-linecap="round"/>
<path d="M210.1 249.3 L226.0 233.5 L247.6 224.8" stroke="#f5f7b8" stroke-width="2.8" fill="none" stroke-linejoin="round" stroke-linecap="round"/>
<path d="M356.9 155.8 L369.9 193.2 L380.1 221.9" stroke="#d8d98f" stroke-width="4.0" fill="none" stroke-linejoin="round" stroke-linecap="round"/>
<path d="M356.9 155.8 L369.9 193.2 L380.1 221.9" stroke="#f5f7b8" stroke-width="2.8" fill="none" stroke-linejoin="round" stroke-linecap="round"/>
<path d="M190.0 293.9 L233.2 282.4 L293.6 276.6 L341.1 272.3" stroke="#d8d98f" stroke-width="4.0" fill="none" stroke-linejoin="round" stroke-linecap="round"/>
<path d="M190.0 293.9 L233.2 282.4 L293.6 276.6 L341.1 272.3" stroke="#f5f7b8" stroke-width="2.8" fill="none" stroke-linejoin="round" stroke-linecap="round"/>
<path d="M342.5 270.9 L342.5 300.1" stroke="#d8d98f" stroke-width="4.0" fill="none" stroke-linejoin="round" stroke-linecap="round"/>
<path d="M342.5 270.9 L342.5 300.1" stroke="#f5f7b8" stroke-width="2.8" fill="none" stroke-linejoin="round" stroke-linecap="round"/>
<path d="M380.0 4.3 L390.1 28.8 L401.6 53.2 L408.8 74.8 L416.0 89.2" stroke="#d8d98f" stroke-width="4.0" fill="none" stroke-linejoin="round" stroke-linecap="round"/>
<path d="M380.0 4.3 L390.1 28.8 L401.6 53.2 L408.8 74.8 L416.0 89.2" stroke="#f5f7b8" stroke-width="2.8" fill="none" stroke-linejoin="round" stroke-linecap="round"/>
<path d="M380.0 64.7 L392.9 50.4 L427.5 33.8 L446.2 34.5" stroke="#d8d98f" stroke-width="4.0" fill="none" stroke-linejoin="round" stroke-linecap="round"/>
<path d="M380.0 64.7 L392.9 50.4 L427.5 33.8 L446.2 34.5" stroke="#f5f7b8" stroke-width="2.8" fill="none" stroke-linejoin="round" stroke-linecap="round"/>
<path d="M446.2 48.9 L447.6 77.7 L440.4 93.5 L434.7 105.0" stroke="#d8d98f" stroke-width="4.0" fill="none" stroke-linejoin="round" stroke-linecap="round"/>
<path d="M446.2 48.9 L447.6 77.7 L440.4 93.5 L434.7 105.0" stroke="#f5f7b8" stroke-width="2.8" fill="none" stroke-linejoin="round" stroke-linecap="round"/>
<path d="M380.0 99.3 L416.0 89.2 L437.6 93.5 L457.7 102.2" stroke="#d8d98f" stroke-width="4.0" fill="none" stroke-linejoin="round" stroke-linecap="round"/>
<path d="M380.0 99.3 L416.0 89.2 L437.6 93.5 L457.7 102.2" stroke="#f5f7b8" stroke-width="2.8" fill="none" stroke-linejoin="round" stroke-linecap="round"/>
<path d="M552.7 14.4 L570.1 28.8" stroke="#d8d98f" stroke-width="4.0" fill="none" stroke-linejoin="round" stroke-linecap="round"/>
<path d="M552.7 14.4 L570.1 28.8" stroke="#f5f7b8" stroke-width="2.8" fill="none" stroke-linejoin="round" stroke-linecap="round"/>
<path d="M570.1 40.3 L555.5 54.7 L570.1 74.8" stroke="#d8d98f" stroke-width="4.0" fill="none" stroke-linejoin="round" stroke-linecap="round"/>
<path d="M570.1 40.3 L555.5 54.7 L570.1 74.8" stroke="#f5f7b8" stroke-width="2.8" fill="none" stroke-linejoin="round" stroke-linecap="round"/>
<path d="M498.0 122.3 L495.1 136.7 L492.2 150.1" stroke="#d8d98f" stroke-width="4.0" fill="none" stroke-linejoin="round" stroke-linecap="round"/>
<path d="M498.0 122.3 L495.1 136.7 L492.2 150.1" stroke="#f5f7b8" stroke-width="2.8" fill="none" stroke-linejoin="round" stroke-linecap="round"/>
<path d="M457.7 133.8 L463.5 150.1" stroke="#d8d98f" stroke-width="4.0" fill="none" stroke-linejoin="round" stroke-linecap="round"/>
<path d="M457.7 133.8 L463.5 150.1" stroke="#f5f7b8" stroke-width="2.8" fill="none" stroke-linejoin="round" stroke-linecap="round"/>
<path d="M606.0 0.0 L613.2 28.8 L624.7 57.6 L636.2 80.6 L643.4 103.6 L643.4 150.1" stroke="#d8d98f" stroke-width="4.0" fill="none" stroke-linejoin="round" stroke-linecap="round"/>
<path d="M606.0 0.0 L613.2 28.8 L624.7 57.6 L636.2 80.6 L643.4 103.6 L643.4 150.1" stroke="#f5f7b8" stroke-width="2.8" fill="none" stroke-linejoin="round" stroke-linecap="round"/>
<path d="M705.3 0.0 L656.3 43.2 L624.7 59.0" stroke="#d8d98f" stroke-width="4.0" fill="none" stroke-linejoin="round" stroke-linecap="round"/>
<path d="M705.3 0.0 L656.3 43.2 L624.7 59.0" stroke="#f5f7b8" stroke-width="2.8" fill="none" stroke-linejoin="round" stroke-linecap="round"/>
<path d="M726.8 0.0 L739.8 36.0 L755.6 64.7 L758.5 100.7 L758.5 150.1" stroke="#d8d98f" stroke-width="4.0" fill="none" stroke-linejoin="round" stroke-linecap="round"/>
<path d="M726.8 0.0 L739.8 36.0 L755.6 64.7 L758.5 100.7 L758.5 150.1" stroke="#f5f7b8" stroke-width="2.8" fill="none" stroke-linejoin="round" stroke-linecap="round"/>
<path d="M570.0 74.8 L581.5 100.7 L606.0 115.1 L641.9 120.9" stroke="#d8d98f" stroke-width="4.0" fill="none" stroke-linejoin="round" stroke-linecap="round"/>
<path d="M570.0 74.8 L581.5 100.7 L606.0 115.1 L641.9 120.9" stroke="#f5f7b8" stroke-width="2.8" fill="none" stroke-linejoin="round" stroke-linecap="round"/>
<path d="M608.8 0.0 L617.5 7.2 L624.7 0.0" stroke="#d8d98f" stroke-width="4.0" fill="none" stroke-linejoin="round" stroke-linecap="round"/>
<path d="M608.8 0.0 L617.5 7.2 L624.7 0.0" stroke="#f5f7b8" stroke-width="2.8" fill="none" stroke-linejoin="round" stroke-linecap="round"/>
<path d="M463.5 150.0 L462.0 161.5 L457.7 180.2 L444.7 213.3 L430.4 239.2 L423.2 259.4 L414.5 279.5 L408.8 300.1" stroke="#d8d98f" stroke-width="4.0" fill="none" stroke-linejoin="round" stroke-linecap="round"/>
<path d="M463.5 150.0 L462.0 161.5 L457.7 180.2 L444.7 213.3 L430.4 239.2 L423.2 259.4 L414.5 279.5 L408.8 300.1" stroke="#f5f7b8" stroke-width="2.8" fill="none" stroke-linejoin="round" stroke-linecap="round"/>
<path d="M492.2 150.0 L480.7 165.8" stroke="#d8d98f" stroke-width="4.0" fill="none" stroke-linejoin="round" stroke-linecap="round"/>
<path d="M492.2 150.0 L480.7 165.8" stroke="#f5f7b8" stroke-width="2.8" fill="none" stroke-linejoin="round" stroke-linecap="round"/>
<path d="M437.6 150.0 L460.6 158.6 L483.6 167.3 L495.1 181.7 L515.3 190.3 L532.5 207.6 L545.5 217.6 L570.1 257.9" stroke="#d8d98f" stroke-width="4.0" fill="none" stroke-linejoin="round" stroke-linecap="round"/>
<path d="M437.6 150.0 L460.6 158.6 L483.6 167.3 L495.1 181.7 L515.3 190.3 L532.5 207.6 L545.5 217.6 L570.1 257.9" stroke="#f5f7b8" stroke-width="2.8" fill="none" stroke-linejoin="round" stroke-linecap="round"/>
<path d="M457.7 180.2 L483.6 188.8 L495.1 196.0 L506.6 210.4 L523.9 219.1 L535.4 224.8" stroke="#d8d98f" stroke-width="4.0" fill="none" stroke-linejoin="round" stroke-linecap="round"/>
<path d="M457.7 180.2 L483.6 188.8 L495.1 196.0 L506.6 210.4 L523.9 219.1 L535.4 224.8" stroke="#f5f7b8" stroke-width="2.8" fill="none" stroke-linejoin="round" stroke-linecap="round"/>
<path d="M380.0 198.9 L405.9 197.5 L441.9 214.7 L466.3 224.8" stroke="#d8d98f" stroke-width="4.0" fill="none" stroke-linejoin="round" stroke-linecap="round"/>
<path d="M380.0 198.9 L405.9 197.5 L441.9 214.7 L466.3 224.8" stroke="#f5f7b8" stroke-width="2.8" fill="none" stroke-linejoin="round" stroke-linecap="round"/>
<path d="M405.9 197.5 L395.8 221.9 L397.3 239.2" stroke="#d8d98f" stroke-width="4.0" fill="none" stroke-linejoin="round" stroke-linecap="round"/>
<path d="M405.9 197.5 L395.8 221.9 L397.3 239.2" stroke="#f5f7b8" stroke-width="2.8" fill="none" stroke-linejoin="round" stroke-linecap="round"/>
<path d="M380.0 250.7 L408.8 253.6 L437.6 265.1 L466.3 279.5 L486.5 300.1" stroke="#d8d98f" stroke-width="4.0" fill="none" stroke-linejoin="round" stroke-linecap="round"/>
<path d="M380.0 250.7 L408.8 253.6 L437.6 265.1 L466.3 279.5 L486.5 300.1" stroke="#f5f7b8" stroke-width="2.8" fill="none" stroke-linejoin="round" stroke-linecap="round"/>
<path d="M380.0 266.5 L408.8 276.6 L437.6 286.7 L473.5 300.1" stroke="#d8d98f" stroke-width="4.0" fill="none" stroke-linejoin="round" stroke-linecap="round"/>
<path d="M380.0 266.5 L408.8 276.6 L437.6 286.7 L473.5 300.1" stroke="#f5f7b8" stroke-width="2.8" fill="none" stroke-linejoin="round" stroke-linecap="round"/>
<path d="M466.3 250.7 L473.5 265.1 L483.6 300.1" stroke="#d8d98f" stroke-width="4.0" fill="none" stroke-linejoin="round" stroke-linecap="round"/>
<path d="M466.3 250.7 L473.5 265.1 L483.6 300.1" stroke="#f5f7b8" stroke-width="2.8" fill="none" stroke-linejoin="round" stroke-linecap="round"/>
<path d="M382.9 178.8 L382.9 197.5" stroke="#d8d98f" stroke-width="4.0" fill="none" stroke-linejoin="round" stroke-linecap="round"/>
<path d="M382.9 178.8 L382.9 197.5" stroke="#f5f7b8" stroke-width="2.8" fill="none" stroke-linejoin="round" stroke-linecap="round"/>
<path d="M644.8 150.0 L630.4 175.9 L617.5 198.9 L607.4 217.6 L604.5 230.6 L598.8 243.5" stroke="#d8d98f" stroke-width="4.0" fill="none" stroke-linejoin="round" stroke-linecap="round"/>
<path d="M644.8 150.0 L630.4 175.9 L617.5 198.9 L607.4 217.6 L604.5 230.6 L598.8 243.5" stroke="#f5f7b8" stroke-width="2.8" fill="none" stroke-linejoin="round" stroke-linecap="round"/>
<path d="M757.1 150.0 L760.1 200.4" stroke="#d8d98f" stroke-width="4.0" fill="none" stroke-linejoin="round" stroke-linecap="round"/>
<path d="M757.1 150.0 L760.1 200.4" stroke="#f5f7b8" stroke-width="2.8" fill="none" stroke-linejoin="round" stroke-linecap="round"/>
<path d="M639.1 230.6 L670.7 250.7 L688.0 282.4" stroke="#d8d98f" stroke-width="4.0" fill="none" stroke-linejoin="round" stroke-linecap="round"/>
<path d="M639.1 230.6 L670.7 250.7 L688.0 282.4" stroke="#f5f7b8" stroke-width="2.8" fill="none" stroke-linejoin="round" stroke-linecap="round"/>
<path d="M570.0 259.4 L578.6 270.9" stroke="#d8d98f" stroke-width="4.0" fill="none" stroke-linejoin="round" stroke-linecap="round"/>
<path d="M570.0 259.4 L578.6 270.9" stroke="#f5f7b8" stroke-width="2.8" fill="none" stroke-linejoin="round" stroke-linecap="round"/>
<path d="M260.5 0.0 L226.0 30.2 L201.5 47.5" stroke="#d9a463" stroke-width="4.4" fill="none" stroke-linejoin="round" stroke-linecap="round"/>
<path d="M260.5 0.0 L226.0 30.2 L201.5 47.5" stroke="#f9cf96" stroke-width="3.2" fill="none" stroke-linejoin="round" stroke-linecap="round"/>
<path d="M282.1 0.0 L293.6 10.1 L309.4 25.9 L323.8 38.8 L305.1 60.4 L316.6 80.6 L323.8 93.5 L316.6 100.7 L316.6 115.1" stroke="#d9a463" stroke-width="4.4" fill="none" stroke-linejoin="round" stroke-linecap="round"/>
<path d="M282.1 0.0 L293.6 10.1 L309.4 25.9 L323.8 38.8 L305.1 60.4 L316.6 80.6 L323.8 93.5 L316.6 100.7 L316.6 115.1" stroke="#f9cf96" stroke-width="3.2" fill="none" stroke-linejoin="round" stroke-linecap="round"/>
<path d="M320.9 0.0 L322.4 12.9 L325.3 18.7 L323.8 31.7 L323.8 38.8" stroke="#d9a463" stroke-width="4.4" fill="none" stroke-linejoin="round" stroke-linecap="round"/>
<path d="M320.9 0.0 L322.4 12.9 L325.3 18.7 L323.8 31.7 L323.8 38.8" stroke="#f9cf96" stroke-width="3.2" fill="none" stroke-linejoin="round" stroke-linecap="round"/>
<path d="M344.0 145.3 L354.0 145.3 L354.0 150.1" stroke="#d9a463" stroke-width="4.4" fill="none" stroke-linejoin="round" stroke-linecap="round"/>
<path d="M344.0 145.3 L354.0 145.3 L354.0 150.1" stroke="#f9cf96" stroke-width="3.2" fill="none" stroke-linejoin="round" stroke-linecap="round"/>
<path d="M0.0 190.3 L40.3 186.0 L69.1 181.7 L109.4 178.8 L149.6 174.5 L190.1 170.1" stroke="#d9a463" stroke-width="4.4" fill="none" stroke-linejoin="round" stroke-linecap="round"/>
<path d="M0.0 190.3 L40.3 186.0 L69.1 181.7 L109.4 178.8 L149.6 174.5 L190.1 170.1" stroke="#f9cf96" stroke-width="3.2" fill="none" stroke-linejoin="round" stroke-linecap="round"/>
<path d="M66.2 170.1 L86.3 168.7 L87.8 178.8" stroke="#d9a463" stroke-width="4.4" fill="none" stroke-linejoin="round" stroke-linecap="round"/>
<path d="M66.2 170.1 L86.3 168.7 L87.8 178.8" stroke="#f9cf96" stroke-width="3.2" fill="none" stroke-linejoin="round" stroke-linecap="round"/>
<path d="M66.2 170.1 L67.6 181.7" stroke="#d9a463" stroke-width="4.4" fill="none" stroke-linejoin="round" stroke-linecap="round"/>
<path d="M66.2 170.1 L67.6 181.7" stroke="#f9cf96" stroke-width="3.2" fill="none" stroke-linejoin="round" stroke-linecap="round"/>
<path d="M190.0 171.6 L226.0 164.4 L264.8 161.5 L305.1 157.2 L344.0 154.3 L380.1 155.8" stroke="#d9a463" stroke-width="4.4" fill="none" stroke-linejoin="round" stroke-linecap="round"/>
<path d="M190.0 171.6 L226.0 164.4 L264.8 161.5 L305.1 157.2 L344.0 154.3 L380.1 155.8" stroke="#f9cf96" stroke-width="3.2" fill="none" stroke-linejoin="round" stroke-linecap="round"/>
<path d="M264.8 161.5 L269.1 178.8 L272.0 201.8 L266.3 216.2 L254.7 227.7 L251.9 265.1 L250.4 300.1" stroke="#d9a463" stroke-width="4.4" fill="none" stroke-linejoin="round" stroke-linecap="round"/>
<path d="M264.8 161.5 L269.1 178.8 L272.0 201.8 L266.3 216.2 L254.7 227.7 L251.9 265.1 L250.4 300.1" stroke="#f9cf96" stroke-width="3.2" fill="none" stroke-linejoin="round" stroke-linecap="round"/>
<path d="M344.0 154.3 L345.4 164.4 L342.5 183.1 L380.1 180.2" stroke="#d9a463" stroke-width="4.4" fill="none" stroke-linejoin="round" stroke-linecap="round"/>
<path d="M344.0 154.3 L345.4 164.4 L342.5 183.1 L380.1 180.2" stroke="#f9cf96" stroke-width="3.2" fill="none" stroke-linejoin="round" stroke-linecap="round"/>
<path d="M342.5 187.4 L325.3 187.4 L319.5 198.9 L302.2 236.3 L296.5 279.5 L283.5 300.1" stroke="#d9a463" stroke-width="4.4" fill="none" stroke-linejoin="round" stroke-linecap="round"/>
<path d="M342.5 187.4 L325.3 187.4 L319.5 198.9 L302.2 236.3 L296.5 279.5 L283.5 300.1" stroke="#f9cf96" stroke-width="3.2" fill="none" stroke-linejoin="round" stroke-linecap="round"/>
<path d="M328.1 204.7 L341.1 219.1 L348.3 230.6 L362.7 236.3 L380.1 243.5" stroke="#d9a463" stroke-width="4.4" fill="none" stroke-linejoin="round" stroke-linecap="round"/>
<path d="M328.1 204.7 L341.1 219.1 L348.3 230.6 L362.7 236.3 L380.1 243.5" stroke="#f9cf96" stroke-width="3.2" fill="none" stroke-linejoin="round" stroke-linecap="round"/>
<path d="M380.1 243.5 L371.3 279.5 L369.9 300.1" stroke="#d9a463" stroke-width="4.4" fill="none" stroke-linejoin="round" stroke-linecap="round"/>
<path d="M380.1 243.5 L371.3 279.5 L369.9 300.1" stroke="#f9cf96" stroke-width="3.2" fill="none" stroke-linejoin="round" stroke-linecap="round"/>
<path d="M559.9 0.0 L538.3 15.8 L523.9 36.0 L506.6 59.0 L486.5 89.2 L469.2 110.8 L456.3 126.6 L444.7 150.1" stroke="#d9a463" stroke-width="4.4" fill="none" stroke-linejoin="round" stroke-linecap="round"/>
<path d="M559.9 0.0 L538.3 15.8 L523.9 36.0 L506.6 59.0 L486.5 89.2 L469.2 110.8 L456.3 126.6 L444.7 150.1" stroke="#f9cf96" stroke-width="3.2" fill="none" stroke-linejoin="round" stroke-linecap="round"/>
<path d="M495.1 0.0 L483.6 43.2 L472.1 74.8 L457.7 102.2 L440.4 123.7 L423.2 138.1 L398.7 150.1" stroke="#d9a463" stroke-width="4.4" fill="none" stroke-linejoin="round" stroke-linecap="round"/>
<path d="M495.1 0.0 L483.6 43.2 L472.1 74.8 L457.7 102.2 L440.4 123.7 L423.2 138.1 L398.7 150.1" stroke="#f9cf96" stroke-width="3.2" fill="none" stroke-linejoin="round" stroke-linecap="round"/>
<path d="M449.1 34.5 L480.7 42.4 L506.6 59.0 L532.5 77.7 L549.8 105.0 L567.1 150.1" stroke="#d9a463" stroke-width="4.4" fill="none" stroke-linejoin="round" stroke-linecap="round"/>
<path d="M449.1 34.5 L480.7 42.4 L506.6 59.0 L532.5 77.7 L549.8 105.0 L567.1 150.1" stroke="#f9cf96" stroke-width="3.2" fill="none" stroke-linejoin="round" stroke-linecap="round"/>
<path d="M516.7 0.0 L536.8 14.4" stroke="#d9a463" stroke-width="4.4" fill="none" stroke-linejoin="round" stroke-linecap="round"/>
<path d="M516.7 0.0 L536.8 14.4" stroke="#f9cf96" stroke-width="3.2" fill="none" stroke-linejoin="round" stroke-linecap="round"/>
<path d="M457.7 102.2 L466.3 110.8 L485.0 119.4 L523.9 118.0 L549.8 105.0 L570.1 95.0" stroke="#d9a463" stroke-width="4.4" fill="none" stroke-linejoin="round" stroke-linecap="round"/>
<path d="M457.7 102.2 L466.3 110.8 L485.0 119.4 L523.9 118.0 L549.8 105.0 L570.1 95.0" stroke="#f9cf96" stroke-width="3.2" fill="none" stroke-linejoin="round" stroke-linecap="round"/>
<path d="M457.7 123.7 L480.7 132.4 L509.5 143.9 L531.1 150.1" stroke="#d9a463" stroke-width="4.4" fill="none" stroke-linejoin="round" stroke-linecap="round"/>
<path d="M457.7 123.7 L480.7 132.4 L509.5 143.9 L531.1 150.1" stroke="#f9cf96" stroke-width="3.2" fill="none" stroke-linejoin="round" stroke-linecap="round"/>
<path d="M570.0 95.0 L606.0 80.6 L634.7 71.9 L656.3 69.1 L699.5 66.2 L760.1 61.9" stroke="#d9a463" stroke-width="4.4" fill="none" stroke-linejoin="round" stroke-linecap="round"/>
<path d="M570.0 95.0 L606.0 80.6 L634.7 71.9 L656.3 69.1 L699.5 66.2 L760.1 61.9" stroke="#f9cf96" stroke-width="3.2" fill="none" stroke-linejoin="round" stroke-linecap="round"/>
<path d="M380.0 181.7 L416.0 177.3 L437.6 150.0" stroke="#d9a463" stroke-width="4.4" fill="none" stroke-linejoin="round" stroke-linecap="round"/>
<path d="M380.0 181.7 L416.0 177.3 L437.6 150.0" stroke="#f9cf96" stroke-width="3.2" fill="none" stroke-linejoin="round" stroke-linecap="round"/>
<path d="M523.9 150.0 L570.1 155.8" stroke="#d9a463" stroke-width="4.4" fill="none" stroke-linejoin="round" stroke-linecap="round"/>
<path d="M523.9 150.0 L570.1 155.8" stroke="#f9cf96" stroke-width="3.2" fill="none" stroke-linejoin="round" stroke-linecap="round"/>
<path d="M570.1 150.0 L562.7 178.8 L555.5 200.4 L546.9 219.1" stroke="#d9a463" stroke-width="4.4" fill="none" stroke-linejoin="round" stroke-linecap="round"/>
<path d="M570.1 150.0 L562.7 178.8 L555.5 200.4 L546.9 219.1" stroke="#f9cf96" stroke-width="3.2" fill="none" stroke-linejoin="round" stroke-linecap="round"/>
<path d="M545.5 217.6 L570.1 229.1" stroke="#d9a463" stroke-width="4.4" fill="none" stroke-linejoin="round" stroke-linecap="round"/>
<path d="M545.5 217.6 L570.1 229.1" stroke="#f9cf96" stroke-width="3.2" fill="none" stroke-linejoin="round" stroke-linecap="round"/>
<path d="M570.0 155.8 L627.6 165.8 L696.6 175.9 L760.1 184.5" stroke="#d9a463" stroke-width="4.4" fill="none" stroke-linejoin="round" stroke-linecap="round"/>
<path d="M570.0 155.8 L627.6 165.8 L696.6 175.9 L760.1 184.5" stroke="#f9cf96" stroke-width="3.2" fill="none" stroke-linejoin="round" stroke-linecap="round"/>
<path d="M570.0 227.7 L598.8 243.5 L588.7 265.1 L582.9 282.4 L581.5 300.1" stroke="#d9a463" stroke-width="4.4" fill="none" stroke-linejoin="round" stroke-linecap="round"/>
<path d="M570.0 227.7 L598.8 243.5 L588.7 265.1 L582.9 282.4 L581.5 300.1" stroke="#f9cf96" stroke-width="3.2" fill="none" stroke-linejoin="round" stroke-linecap="round"/>
<path d="M118.0 0.0 L113.6 8.6 L100.7 57.5 L92.1 69.0 L74.8 83.4 L64.7 109.3 L67.6 138.1 L80.6 164.0 L79.1 178.4 L70.5 195.6 L66.2 212.9 L61.9 230.1 L40.3 247.4 L17.3 273.3 L0.0 290.6" stroke="#c8546f" stroke-width="5.0" fill="none" stroke-linejoin="round" stroke-linecap="round"/>
<path d="M118.0 0.0 L113.6 8.6 L100.7 57.5 L92.1 69.0 L74.8 83.4 L64.7 109.3 L67.6 138.1 L80.6 164.0 L79.1 178.4 L70.5 195.6 L66.2 212.9 L61.9 230.1 L40.3 247.4 L17.3 273.3 L0.0 290.6" stroke="#e58a9c" stroke-width="3.8" fill="none" stroke-linejoin="round" stroke-linecap="round"/>
<path d="M92.1 69.0 L120.8 66.2 L187.0 51.8 L202.8 46.0" stroke="#c8546f" stroke-width="5.0" fill="none" stroke-linejoin="round" stroke-linecap="round"/>
<path d="M92.1 69.0 L120.8 66.2 L187.0 51.8 L202.8 46.0" stroke="#e58a9c" stroke-width="3.8" fill="none" stroke-linejoin="round" stroke-linecap="round"/>
<path d="M74.8 250.3 L94.9 261.8 L123.7 287.7 L132.3 300.1" stroke="#c8546f" stroke-width="5.0" fill="none" stroke-linejoin="round" stroke-linecap="round"/>
<path d="M74.8 250.3 L94.9 261.8 L123.7 287.7 L132.3 300.1" stroke="#e58a9c" stroke-width="3.8" fill="none" stroke-linejoin="round" stroke-linecap="round"/>
<path d="M138.1 300.1 L143.8 287.7" stroke="#c8546f" stroke-width="3.7" fill="none" stroke-linejoin="round" stroke-linecap="round"/>
<path d="M138.1 300.1 L143.8 287.7" stroke="#e58a9c" stroke-width="2.5" fill="none" stroke-linejoin="round" stroke-linecap="round"/>
<text x="109" y="35" font-size="12" fill="#3b3b3b" text-anchor="middle" stroke="#fff" stroke-width="2.2" stroke-opacity="0.85" paint-order="stroke" style="">Charlottenburg-</text>
<text x="109" y="49" font-size="12" fill="#3b3b3b" text-anchor="middle" stroke="#fff" stroke-width="2.2" stroke-opacity="0.85" paint-order="stroke" style="">Nord</text>
<text x="244" y="92" font-size="12" fill="#3b3b3b" text-anchor="middle" stroke="#fff" stroke-width="2.2" stroke-opacity="0.85" paint-order="stroke" style="">Moabit</text>
<text x="148" y="161" font-size="12" fill="#3b3b3b" text-anchor="middle" stroke="#fff" stroke-width="2.2" stroke-opacity="0.85" paint-order="stroke" style="">Charlottenburg</text>
<text x="287" y="190" font-size="12" fill="#3b3b3b" text-anchor="middle" stroke="#fff" stroke-width="2.2" stroke-opacity="0.85" paint-order="stroke" style="">Tiergarten</text>
<text x="100" y="249" font-size="12" fill="#3b3b3b" text-anchor="middle" stroke="#fff" stroke-width="2.2" stroke-opacity="0.85" paint-order="stroke" style="">Halensee</text>
<text x="180" y="297" font-size="12" fill="#3b3b3b" text-anchor="middle" stroke="#fff" stroke-width="2.2" stroke-opacity="0.85" paint-order="stroke" style="">Wilmersdorf</text>
<text x="0" y="297" font-size="12" fill="#3b3b3b" text-anchor="start" stroke="#fff" stroke-width="2.2" stroke-opacity="0.85" paint-order="stroke" style="">unewald</text>
<text x="0" y="171" font-size="12" fill="#3b3b3b" text-anchor="start" stroke="#fff" stroke-width="2.2" stroke-opacity="0.85" paint-order="stroke" style="">nd</text>
<text x="0" y="46" font-size="12" fill="#3b3b3b" text-anchor="start" stroke="#fff" stroke-width="2.2" stroke-opacity="0.85" paint-order="stroke" style="">ss</text>
<text x="299" y="153" font-size="11" fill="#2f8f3f" text-anchor="middle" stroke="#fff" stroke-width="2.2" stroke-opacity="0.85" paint-order="stroke" style="font-style:italic;">Großer</text>
<text x="299" y="165" font-size="11" fill="#2f8f3f" text-anchor="middle" stroke="#fff" stroke-width="2.2" stroke-opacity="0.85" paint-order="stroke" style="font-style:italic;">Tiergarten</text>
<text x="357" y="155" font-size="15" fill="#2b2b2b" text-anchor="start" stroke="#fff" stroke-width="2.2" stroke-opacity="0.85" paint-order="stroke" style="">Berlin</text>
<text x="494" y="38" font-size="12" fill="#3b3b3b" text-anchor="middle" stroke="#fff" stroke-width="2.2" stroke-opacity="0.85" paint-order="stroke" style="">Prenzlauer</text>
<text x="494" y="52" font-size="12" fill="#3b3b3b" text-anchor="middle" stroke="#fff" stroke-width="2.2" stroke-opacity="0.85" paint-order="stroke" style="">Berg</text>
<text x="688" y="142" font-size="12" fill="#3b3b3b" text-anchor="middle" stroke="#fff" stroke-width="2.2" stroke-opacity="0.85" paint-order="stroke" style="">Lichtenberg</text>
<text x="558" y="177" font-size="12" fill="#3b3b3b" text-anchor="middle" stroke="#fff" stroke-width="2.2" stroke-opacity="0.85" paint-order="stroke" style="">Friedrichshain</text>
<text x="446" y="248" font-size="12" fill="#3b3b3b" text-anchor="middle" stroke="#fff" stroke-width="2.2" stroke-opacity="0.85" paint-order="stroke" style="">Kreuzberg</text>
<text x="655" y="230" font-size="12" fill="#3b3b3b" text-anchor="middle" stroke="#fff" stroke-width="2.2" stroke-opacity="0.85" paint-order="stroke" style="">Rummelsburg</text>
<text x="725" y="222" font-size="12" fill="#3b3b3b" text-anchor="start" stroke="#fff" stroke-width="2.2" stroke-opacity="0.85" paint-order="stroke" style="">Friedric</text>
<text x="729" y="238" font-size="11" fill="#6b6b6b" text-anchor="middle" stroke="#fff" stroke-width="2.2" stroke-opacity="0.85" paint-order="stroke" style="font-style:italic;">Sewan-</text>
<text x="729" y="250" font-size="11" fill="#6b6b6b" text-anchor="middle" stroke="#fff" stroke-width="2.2" stroke-opacity="0.85" paint-order="stroke" style="font-style:italic;">Viertel</text>
<text x="586" y="272" font-size="12" fill="#3b3b3b" text-anchor="middle" stroke="#fff" stroke-width="2.2" stroke-opacity="0.85" paint-order="stroke" style="">Alt-Treptow</text>
<text x="118" y="12" font-size="10" fill="#b0203e" text-anchor="middle" stroke="#fff" stroke-width="2.2" stroke-opacity="0.85" paint-order="stroke" style="font-style:italic;">10</text>
<text x="187" y="55" font-size="10" fill="#b0203e" text-anchor="middle" stroke="#fff" stroke-width="2.2" stroke-opacity="0.85" paint-order="stroke" style="font-style:italic;">2</text>
<text x="202" y="48" font-size="10" fill="#b0203e" text-anchor="middle" stroke="#fff" stroke-width="2.2" stroke-opacity="0.85" paint-order="stroke" style="font-style:italic;">1</text>
<text x="121" y="70" font-size="10" fill="#b0203e" text-anchor="middle" stroke="#fff" stroke-width="2.2" stroke-opacity="0.85" paint-order="stroke" style="font-style:italic;">3</text>
<text x="92" y="74" font-size="10" fill="#b0203e" text-anchor="middle" stroke="#fff" stroke-width="2.2" stroke-opacity="0.85" paint-order="stroke" style="font-style:italic;">3</text>
<text x="81" y="79" font-size="10" fill="#b0203e" text-anchor="middle" stroke="#fff" stroke-width="2.2" stroke-opacity="0.85" paint-order="stroke" style="font-style:italic;">4</text>
<text x="68" y="134" font-size="10" fill="#b0203e" text-anchor="middle" stroke="#fff" stroke-width="2.2" stroke-opacity="0.85" paint-order="stroke" style="font-style:italic;">6</text>
<text x="77" y="166" font-size="10" fill="#b0203e" text-anchor="middle" stroke="#fff" stroke-width="2.2" stroke-opacity="0.85" paint-order="stroke" style="font-style:italic;">7</text>
<text x="80" y="180" font-size="10" fill="#b0203e" text-anchor="middle" stroke="#fff" stroke-width="2.2" stroke-opacity="0.85" paint-order="stroke" style="font-style:italic;">7</text>
<text x="72" y="196" font-size="10" fill="#b0203e" text-anchor="middle" stroke="#fff" stroke-width="2.2" stroke-opacity="0.85" paint-order="stroke" style="font-style:italic;">8</text>
<text x="67" y="210" font-size="10" fill="#b0203e" text-anchor="middle" stroke="#fff" stroke-width="2.2" stroke-opacity="0.85" paint-order="stroke" style="font-style:italic;">9</text>
<text x="64" y="221" font-size="10" fill="#b0203e" text-anchor="middle" stroke="#fff" stroke-width="2.2" stroke-opacity="0.85" paint-order="stroke" style="font-style:italic;">10</text>
<text x="65" y="239" font-size="10" fill="#b0203e" text-anchor="middle" stroke="#fff" stroke-width="2.2" stroke-opacity="0.85" paint-order="stroke" style="font-style:italic;">11</text>
<text x="26" y="260" font-size="10" fill="#b0203e" text-anchor="middle" stroke="#fff" stroke-width="2.2" stroke-opacity="0.85" paint-order="stroke" style="font-style:italic;">1</text>
<text x="95" y="265" font-size="10" fill="#b0203e" text-anchor="middle" stroke="#fff" stroke-width="2.2" stroke-opacity="0.85" paint-order="stroke" style="font-style:italic;">12</text>
<text x="109" y="280" font-size="10" fill="#b0203e" text-anchor="middle" stroke="#fff" stroke-width="2.2" stroke-opacity="0.85" paint-order="stroke" style="font-style:italic;">13</text>
<text x="128" y="300" font-size="10" fill="#b0203e" text-anchor="middle" stroke="#fff" stroke-width="2.2" stroke-opacity="0.85" paint-order="stroke" style="font-style:italic;">13</text>
<path d="M279.9 92.8 L283.4 86.8 L286.9 92.8 Z M285.6 102.8 L289.1 96.8 L292.6 102.8 Z M230.1 180.8 L233.6 174.8 L237.1 180.8 Z M331.7 261.1 L335.2 255.1 L338.7 261.1 Z M354.1 293.6 L357.6 287.6 L361.1 293.6 Z M590.0 59.4 L593.5 53.4 L597.0 59.4 Z M592.3 74.1 L595.8 68.1 L599.3 74.1 Z M501.1 108.9 L504.6 102.9 L508.1 108.9 Z M513.4 102.0 L516.9 96.0 L520.4 102.0 Z M743.3 8.8 L746.8 2.8 L750.3 8.8 Z" fill="#d0743a"/>
<path d="M204.5 65.2h3.6v3.6h-3.6z M247.0 56.3h3.6v3.6h-3.6z M313.2 24.7h3.6v3.6h-3.6z M373.6 75.3h3.6v3.6h-3.6z M321.8 112.7h3.6v3.6h-3.6z M370.8 133.4h3.6v3.6h-3.6z M224.3 161.0h3.6v3.6h-3.6z M211.1 195.6h3.6v3.6h-3.6z M130.5 205.0h3.6v3.6h-3.6z M126.2 209.1h3.6v3.6h-3.6z M73.6 143.2h3.6v3.6h-3.6z M73.6 225.5h3.6v3.6h-3.6z M340.5 185.2h3.6v3.6h-3.6z M354.9 213.4h3.6v3.6h-3.6z M360.7 234.1h3.6v3.6h-3.6z M522.9 36.5h3.6v3.6h-3.6z M568.9 89.1h3.6v3.6h-3.6z M389.1 108.7h3.6v3.6h-3.6z M442.1 125.4h3.6v3.6h-3.6z M512.0 178.3h3.6v3.6h-3.6z M555.4 199.3h3.6v3.6h-3.6z M611.8 214.8h3.6v3.6h-3.6z M693.2 181.2h3.6v3.6h-3.6z" fill="#7581c4"/></svg><div class="abs" style="left:10px;top:10px;width:26px;height:52px;background:#fff;border-radius:4px;box-shadow:0 1px 5px rgba(0,0,0,.45)"></div>
<div class="abs" style="left:10px;top:35px;width:26px;height:1px;background:#ccc"></div>
<svg class="abs" style="left:10px;top:10px" width="26" height="52"><path d="M13 7.5 V18.5 M7.5 13 H18.5" stroke="#000" stroke-width="2.6"/><rect x="9.5" y="38.5" width="7" height="3" fill="#000"/></svg>
<div class="abs" style="left:509px;top:283px;width:251px;height:17px;background:rgba(255,255,255,.72)"></div>
<div class="t" style="right:5px;top:285px;font-size:11px;line-height:14px;color:#333"><span style="color:#0078a8">Leaflet</span> | Map data © <span style="color:#0078a8">OpenStreetMap</span> contributors</div></div>
 <div class="lbl" style="top:809.5px">Höhe über Grund</div>
 <div class="abs" style="left:169px;top:865px;width:940px;height:64px;background:#f5f5f5;border-top:1px solid #ddd"></div>
 <div class="abs btn" style="left:186px;top:883px;width:70px;height:29px">Cancel</div>
 <div class="abs btn ok" style="left:1032px;top:883px;width:57px;height:29px">Next</div>
</div>
<div id="sb" class="abs"><div class="abs" style="left:2px;top:3px;width:6px;height:887px;border-radius:3px;background:#9a9fa0"></div></div>
<div id="dev" class="abs">
 <div class="abs" style="left:0;top:0;width:632px;height:29px;background:#f9f9fa;border-bottom:1px solid #e0e0e2"></div>
 <svg class="abs" style="left:9px;top:7px" width="17" height="15" viewBox="0 0 17 15"><path d="M6 13 H3 Q1.2 13 1.2 11 V3 Q1.2 1.2 3 1.2 H13 Q15 1.2 15 3 V6" stroke="#38383d" stroke-width="1.7" fill="none"/><path d="M7.5 5.5 L15.5 9 L12 10 L15 13 L13.5 14.3 L10.5 11.3 L9 14.5 Z" fill="#38383d"/></svg>
 <div class="abs" style="left:33px;top:4px;width:1px;height:22px;background:#e8e8ea"></div>
 <div class="abs" style="left:34px;top:0;width:83px;height:2px;background:#0a84ff"></div>
 <svg class="abs" style="left:42px;top:7px" width="17" height="15"><rect x="1" y="1" width="14.5" height="12.5" rx="2" stroke="#0060df" stroke-width="1.7" fill="none"/><path d="M5 4.5 L8 7.2 L5 10" stroke="#0060df" stroke-width="1.3" fill="none"/></svg>
 <div class="tb" style="left:64px;color:#0060df">Console</div>
 <svg class="abs" style="left:125px;top:7px" width="16" height="16"><rect x="2.8" y="2.8" width="10.4" height="10.4" rx="2.2" stroke="#38383d" stroke-width="1.7" fill="none"/><path d="M8 0 V2.8 M8 13.2 V16 M0 8 H2.8 M13.2 8 H16" stroke="#38383d" stroke-width="1.2"/></svg>
 <div class="tb" style="left:147px">Inspector</div>
 <svg class="abs" style="left:216px;top:8px" width="17" height="14"><path d="M2.5 1.5 H10.5 L15.2 7 L10.5 12.5 H2.5 Q1 12.5 1 11 V3 Q1 1.5 2.5 1.5 Z" stroke="#38383d" stroke-width="1.7" fill="none" stroke-linejoin="round"/></svg>
 <div class="tb" style="left:239px">Debugger</div>
 <svg class="abs" style="left:311px;top:7px" width="18" height="16"><path d="M4.5 15 V1.5 M1 5 L4.5 1.5 L8 5 M12.5 1 V14.5 M9 11 L12.5 14.5 L16 11" stroke="#38383d" stroke-width="1.8" fill="none"/></svg>
 <div class="tb" style="left:334px">Network</div>
 <svg class="abs" style="left:398px;top:8px" width="16" height="15" viewBox="0 0 16 15"><path d="M4.5 1 Q2.2 1 2.2 3 V5.5 Q2.2 7.5 0.8 7.5 Q2.2 7.5 2.2 9.5 V12 Q2.2 14 4.5 14 M11.5 1 Q13.8 1 13.8 3 V5.5 Q13.8 7.5 15.2 7.5 Q13.8 7.5 13.8 9.5 V12 Q13.8 14 11.5 14" stroke="#38383d" stroke-width="1.7" fill="none"/></svg>
 <div class="tb" style="left:420px;letter-spacing:-0.3px">Style Editor</div>
 <svg class="abs" style="left:498px;top:9px" width="14" height="12"><path d="M1.5 1 L6 6 L1.5 11 M7.5 1 L12 6 L7.5 11" stroke="#38383d" stroke-width="1.6" fill="none"/></svg>
 <svg class="abs" style="left:558px;top:6px" width="17" height="17"><path d="M5.5 4 V3.5 Q5.5 2.2 6.8 2.2 H13 Q14.3 2.2 14.3 3.5 V16 H7.5" stroke="#38383d" stroke-width="1.6" fill="none"/><rect x="1.2" y="7" width="6.3" height="9" stroke="#38383d" stroke-width="1.6" fill="none"/></svg>
 <svg class="abs" style="left:584px;top:12px" width="17" height="5"><circle cx="2.5" cy="2.5" r="1.8" fill="#38383d"/><circle cx="8.5" cy="2.5" r="1.8" fill="#38383d"/><circle cx="14.5" cy="2.5" r="1.8" fill="#38383d"/></svg>
 <svg class="abs" style="left:612px;top:8px" width="13" height="13"><path d="M1.2 1.2 L11.8 11.8 M11.8 1.2 L1.2 11.8" stroke="#38383d" stroke-width="1.6"/></svg>

 <div class="abs" style="left:0;top:29px;width:632px;height:29px;background:#fff;border-bottom:1px solid #e0e0e2"></div>
 <svg class="abs" style="left:11px;top:36px" width="13" height="16" viewBox="0 0 13 16"><path d="M0.5 3 H12.5" stroke="#38383d" stroke-width="1.6"/><path d="M4.8 2.5 Q4.8 0.8 6.5 0.8 Q8.2 0.8 8.2 2.5" stroke="#38383d" stroke-width="1.3" fill="none"/><path d="M2 3.5 L2.8 14 Q2.9 15.1 4 15.1 H9 Q10.1 15.1 10.2 14 L11 3.5" stroke="#38383d" stroke-width="1.6" fill="none"/><path d="M5 5.5 V12.5 M6.5 5.5 V12.5 M8 5.5 V12.5" stroke="#38383d" stroke-width="0.9"/></svg>
 <div class="abs" style="left:33px;top:33px;width:1px;height:22px;background:#e8e8ea"></div>
 <svg class="abs" style="left:45px;top:38px" width="11" height="12"><path d="M0.8 1 H10.2 L6.3 6 V11 L4.7 10 V6 Z" stroke="#a3a3a6" stroke-width="1.3" fill="none" stroke-linejoin="round"/></svg>
 <div class="fb" style="left:59px;color:#939395;letter-spacing:0">Filter Output</div>
 <div class="abs" style="left:187px;top:33px;width:1px;height:22px;background:#e8e8ea"></div>
 <div class="fb" style="left:199px">Errors (150)</div>
 <div class="fb" style="left:273px">Warnings (3)</div>
 <div class="fbb" style="left:346px;width:36px">Logs</div>
 <div class="fbb" style="left:384px;width:33px">Info</div>
 <div class="fbb" style="left:419px;width:47px">Debug</div>
 <div class="abs" style="left:472px;top:33px;width:1px;height:22px;background:#e8e8ea"></div>
 <div class="fbb" style="left:479px;width:31px">CSS</div>
 <div class="fb" style="left:517px;width:22px;color:#737373">XHR</div>
 <div class="fbb" style="left:547px;width:59px">Requests</div>
 <div class="abs" style="left:608px;top:33px;width:1px;height:22px;background:#e8e8ea"></div>
 <svg class="abs" style="left:614px;top:36px" width="18" height="17" viewBox="0 0 18 17"><g transform="translate(9 8.5)"><circle r="5" stroke="#38383d" stroke-width="2" fill="none"/><path d="M0 -8 V-4.5 M0 8 V4.5 M-8 0 H-4.5 M8 0 H4.5 M-5.7 -5.7 L-3.2 -3.2 M5.7 5.7 L3.2 3.2 M-5.7 5.7 L-3.2 3.2 M5.7 -5.7 L3.2 -3.2" stroke="#38383d" stroke-width="2.2"/></g></svg>

 <div class="mt" style="left:33px;top:62px;color:#b2002c">TypeError: L.ui is undefined</div>
 <div class="mt" style="right:9px;top:62px"><span class="lk1">luci.js</span><span class="lk2">:160:9</span></div>
 <div class="mt" style="left:49px;top:76px;color:#0c0c0d">cbi_init</div><div class="mt" style="right:102px;top:76px"><span class="lk1">…esources/cbi.js?v=git-20.247.75781-0d0ab01</span><span class="lk2">:50</span></div>
<div class="mt" style="left:49px;top:90px;color:#0c0c0d">cbi_init</div><div class="mt" style="right:102px;top:90px"><span class="lk1">…esources/cbi.js?v=git-20.247.75781-0d0ab01</span><span class="lk2">:50</span></div>
<div class="mt" style="left:49px;top:104px;color:#0c0c0d">initDOM</div><div class="mt" style="right:102px;top:104px"><span class="lk1">…ources/luci.js?v=git-20.247.75781-0d0ab01</span><span class="lk2">:199</span></div>
<div class="mt" style="left:49px;top:118px;color:#0c0c0d">setupDOM</div><div class="mt" style="right:102px;top:118px"><span class="lk1">…ources/luci.js?v=git-20.247.75781-0d0ab01</span><span class="lk2">:199</span></div>
<div class="mt" style="left:49px;top:132px;color:#0c0c0d">promise callback*__init__</div><div class="mt" style="right:102px;top:132px"><span class="lk1">…ources/luci.js?v=git-20.247.75781-0d0ab01</span><span class="lk2">:150</span></div>
<div class="mt" style="left:49px;top:146px;color:#0c0c0d">ClassConstructor</div><div class="mt" style="right:102px;top:146px"><span class="lk1">…sources/luci.js?v=git-20.247.75781-0d0ab01</span><span class="lk2">:11</span></div>
<div class="mt" style="left:49px;top:160px;color:#0c0c0d">&lt;anonymous&gt;</div><div class="mt" style="right:102px;top:160px"><span class="lk1">…/luci/admin/freifunk/assistent/generalInfo</span><span class="lk2">:42</span></div>

 <div class="wrow" style="top:176px;height:35px"><svg class="abs" style="left:11px;top:4px" width="13" height="12" viewBox="0 0 13 12"><path d="M6.5 0.5 L12.5 11.5 H0.5 Z" fill="#c4a000" stroke="#c4a000" stroke-width="0.8" stroke-linejoin="round"/><rect x="5.7" y="3.5" width="1.6" height="4.3" fill="#fffbd6"/><rect x="5.7" y="8.8" width="1.6" height="1.6" fill="#fffbd6"/></svg><svg class="abs" style="left:34px;top:6px" width="6" height="9"><path d="M0 0.5 L5 4.5 L0 8.5 Z" fill="#8f8f95"/></svg><div class="wtxt">Error in parsing value for ‘-webkit-text-size-adjust’.&nbsp; Declaration<br>dropped.</div><div class="wlink"><span class="lk1">cascade.css</span><span class="lk2">:1:252</span></div></div>
<div class="wrow" style="top:211px;height:21px"><svg class="abs" style="left:11px;top:4px" width="13" height="12" viewBox="0 0 13 12"><path d="M6.5 0.5 L12.5 11.5 H0.5 Z" fill="#c4a000" stroke="#c4a000" stroke-width="0.8" stroke-linejoin="round"/><rect x="5.7" y="3.5" width="1.6" height="4.3" fill="#fffbd6"/><rect x="5.7" y="8.8" width="1.6" height="1.6" fill="#fffbd6"/></svg><svg class="abs" style="left:34px;top:6px" width="6" height="9"><path d="M0 0.5 L5 4.5 L0 8.5 Z" fill="#8f8f95"/></svg><div class="wtxt">Unknown property ‘zoom’.&nbsp; Declaration dropped.</div><div class="wlink"><span class="lk1">cascade.css</span><span class="lk2">:1:1256</span></div></div>
<div class="wrow" style="top:232px;height:21px"><svg class="abs" style="left:11px;top:4px" width="13" height="12" viewBox="0 0 13 12"><path d="M6.5 0.5 L12.5 11.5 H0.5 Z" fill="#c4a000" stroke="#c4a000" stroke-width="0.8" stroke-linejoin="round"/><rect x="5.7" y="3.5" width="1.6" height="4.3" fill="#fffbd6"/><rect x="5.7" y="8.8" width="1.6" height="1.6" fill="#fffbd6"/></svg><svg class="abs" style="left:34px;top:6px" width="6" height="9"><path d="M0 0.5 L5 4.5 L0 8.5 Z" fill="#8f8f95"/></svg><div class="wtxt">Unknown property ‘zoom’.&nbsp; Declaration dropped.</div><div class="wlink"><span class="lk1">cascade.css</span><span class="lk2">:1:3008</span></div></div>
<div class="wrow" style="top:253px;height:21px"><svg class="abs" style="left:11px;top:4px" width="13" height="12" viewBox="0 0 13 12"><path d="M6.5 0.5 L12.5 11.5 H0.5 Z" fill="#c4a000" stroke="#c4a000" stroke-width="0.8" stroke-linejoin="round"/><rect x="5.7" y="3.5" width="1.6" height="4.3" fill="#fffbd6"/><rect x="5.7" y="8.8" width="1.6" height="1.6" fill="#fffbd6"/></svg><svg class="abs" style="left:34px;top:6px" width="6" height="9"><path d="M0 0.5 L5 4.5 L0 8.5 Z" fill="#8f8f95"/></svg><div class="wtxt">Expected declaration but found ‘*’.&nbsp; Skipped to next declaration.</div><div class="wlink"><span class="lk1">cascade.css</span><span class="lk2">:1:3410</span></div></div>
<div class="wrow" style="top:274px;height:21px"><svg class="abs" style="left:11px;top:4px" width="13" height="12" viewBox="0 0 13 12"><path d="M6.5 0.5 L12.5 11.5 H0.5 Z" fill="#c4a000" stroke="#c4a000" stroke-width="0.8" stroke-linejoin="round"/><rect x="5.7" y="3.5" width="1.6" height="4.3" fill="#fffbd6"/><rect x="5.7" y="8.8" width="1.6" height="1.6" fill="#fffbd6"/></svg><svg class="abs" style="left:34px;top:6px" width="6" height="9"><path d="M0 0.5 L5 4.5 L0 8.5 Z" fill="#8f8f95"/></svg><div class="wtxt">Expected declaration but found ‘*’.&nbsp; Skipped to next declaration.</div><div class="wlink"><span class="lk1">cascade.css</span><span class="lk2">:1:6563</span></div></div>
<div class="wrow" style="top:295px;height:21px"><svg class="abs" style="left:11px;top:4px" width="13" height="12" viewBox="0 0 13 12"><path d="M6.5 0.5 L12.5 11.5 H0.5 Z" fill="#c4a000" stroke="#c4a000" stroke-width="0.8" stroke-linejoin="round"/><rect x="5.7" y="3.5" width="1.6" height="4.3" fill="#fffbd6"/><rect x="5.7" y="8.8" width="1.6" height="1.6" fill="#fffbd6"/></svg><svg class="abs" style="left:34px;top:6px" width="6" height="9"><path d="M0 0.5 L5 4.5 L0 8.5 Z" fill="#8f8f95"/></svg><div class="wtxt">Expected declaration but found ‘*’.&nbsp; Skipped to next declaration.</div><div class="wlink"><span class="lk1">cascade.css</span><span class="lk2">:1:6582</span></div></div>
<div class="wrow" style="top:316px;height:21px"><svg class="abs" style="left:11px;top:4px" width="13" height="12" viewBox="0 0 13 12"><path d="M6.5 0.5 L12.5 11.5 H0.5 Z" fill="#c4a000" stroke="#c4a000" stroke-width="0.8" stroke-linejoin="round"/><rect x="5.7" y="3.5" width="1.6" height="4.3" fill="#fffbd6"/><rect x="5.7" y="8.8" width="1.6" height="1.6" fill="#fffbd6"/></svg><svg class="abs" style="left:34px;top:6px" width="6" height="9"><path d="M0 0.5 L5 4.5 L0 8.5 Z" fill="#8f8f95"/></svg><div class="wtxt">Unknown property ‘zoom’.&nbsp; Declaration dropped.</div><div class="wlink"><span class="lk1">cascade.css</span><span class="lk2">:1:9959</span></div></div>
<div class="wrow" style="top:337px;height:21px"><svg class="abs" style="left:11px;top:4px" width="13" height="12" viewBox="0 0 13 12"><path d="M6.5 0.5 L12.5 11.5 H0.5 Z" fill="#c4a000" stroke="#c4a000" stroke-width="0.8" stroke-linejoin="round"/><rect x="5.7" y="3.5" width="1.6" height="4.3" fill="#fffbd6"/><rect x="5.7" y="8.8" width="1.6" height="1.6" fill="#fffbd6"/></svg><svg class="abs" style="left:34px;top:6px" width="6" height="9"><path d="M0 0.5 L5 4.5 L0 8.5 Z" fill="#8f8f95"/></svg><div class="wtxt">Expected declaration but found ‘*’.&nbsp; Skipped to next declaration.</div><div class="wlink"><span class="lk1">cascade.css</span><span class="lk2">:1:21584</span></div></div>
<div class="wrow" style="top:358px;height:21px"><svg class="abs" style="left:11px;top:4px" width="13" height="12" viewBox="0 0 13 12"><path d="M6.5 0.5 L12.5 11.5 H0.5 Z" fill="#c4a000" stroke="#c4a000" stroke-width="0.8" stroke-linejoin="round"/><rect x="5.7" y="3.5" width="1.6" height="4.3" fill="#fffbd6"/><rect x="5.7" y="8.8" width="1.6" height="1.6" fill="#fffbd6"/></svg><svg class="abs" style="left:34px;top:6px" width="6" height="9"><path d="M0 0.5 L5 4.5 L0 8.5 Z" fill="#8f8f95"/></svg><div class="wtxt">Unknown property ‘zoom’.&nbsp; Declaration dropped.</div><div class="wlink"><span class="lk1">cascade.css</span><span class="lk2">:1:30276</span></div></div>
<div class="wrow" style="top:379px;height:21px"><svg class="abs" style="left:11px;top:4px" width="13" height="12" viewBox="0 0 13 12"><path d="M6.5 0.5 L12.5 11.5 H0.5 Z" fill="#c4a000" stroke="#c4a000" stroke-width="0.8" stroke-linejoin="round"/><rect x="5.7" y="3.5" width="1.6" height="4.3" fill="#fffbd6"/><rect x="5.7" y="8.8" width="1.6" height="1.6" fill="#fffbd6"/></svg><svg class="abs" style="left:34px;top:6px" width="6" height="9"><path d="M0 0.5 L5 4.5 L0 8.5 Z" fill="#8f8f95"/></svg><div class="wtxt">Unknown property ‘behavior’.&nbsp; Declaration dropped.</div><div class="wlink"><span class="lk1">leaflet.css</span><span class="lk2">:73:11</span></div></div>
<div class="wrow" style="top:400px;height:21px"><svg class="abs" style="left:11px;top:4px" width="13" height="12" viewBox="0 0 13 12"><path d="M6.5 0.5 L12.5 11.5 H0.5 Z" fill="#c4a000" stroke="#c4a000" stroke-width="0.8" stroke-linejoin="round"/><rect x="5.7" y="3.5" width="1.6" height="4.3" fill="#fffbd6"/><rect x="5.7" y="8.8" width="1.6" height="1.6" fill="#fffbd6"/></svg><svg class="abs" style="left:34px;top:6px" width="6" height="9"><path d="M0 0.5 L5 4.5 L0 8.5 Z" fill="#8f8f95"/></svg><div class="wtxt">Unknown property ‘zoom’.&nbsp; Declaration dropped.</div><div class="wlink"><span class="lk1">leaflet.css</span><span class="lk2">:452:7</span></div></div>
<div class="wrow" style="top:421px;height:35px"><svg class="abs" style="left:11px;top:4px" width="13" height="12" viewBox="0 0 13 12"><path d="M6.5 0.5 L12.5 11.5 H0.5 Z" fill="#c4a000" stroke="#c4a000" stroke-width="0.8" stroke-linejoin="round"/><rect x="5.7" y="3.5" width="1.6" height="4.3" fill="#fffbd6"/><rect x="5.7" y="8.8" width="1.6" height="1.6" fill="#fffbd6"/></svg><svg class="abs" style="left:34px;top:6px" width="6" height="9"><path d="M0 0.5 L5 4.5 L0 8.5 Z" fill="#8f8f95"/></svg><div class="wtxt">Expected ‘none’, URL, or filter function but found ‘progid’.&nbsp; Error<br>in parsing value for ‘filter’.&nbsp; Declaration dropped.</div><div class="wlink"><span class="lk1">leaflet.css</span><span class="lk2">:459:10</span></div></div>

 <div class="abs" style="left:0;top:456px;width:632px;height:1px;background:#e0e0e2"></div>
 <svg class="abs" style="left:12px;top:464px" width="13" height="11"><path d="M1 1 L5.3 5.3 L1 9.6 M6.2 1 L10.5 5.3 L6.2 9.6" stroke="#0062e3" stroke-width="1.6" fill="none" stroke-linecap="round"/></svg>
 <div class="abs" style="left:33px;top:462px;width:1px;height:14px;background:#0c0c0d"></div>
 <svg class="abs" style="left:611px;top:463px" width="16" height="15"><rect x="1" y="1" width="14" height="12" rx="2" stroke="#38383d" stroke-width="1.5" fill="none"/><path d="M6 1 V13" stroke="#38383d" stroke-width="1.5"/><path d="M2.8 4 H4.5 M2.8 6.5 H4.5" stroke="#38383d" stroke-width="1"/></svg>
</div>
<div class="abs" style="left:0;top:1030px;width:1920px;height:13px;background:linear-gradient(rgba(220,220,220,0),rgba(220,220,220,.35) 40%,#dcdcdc);z-index:10"></div>
</div></body></html>
